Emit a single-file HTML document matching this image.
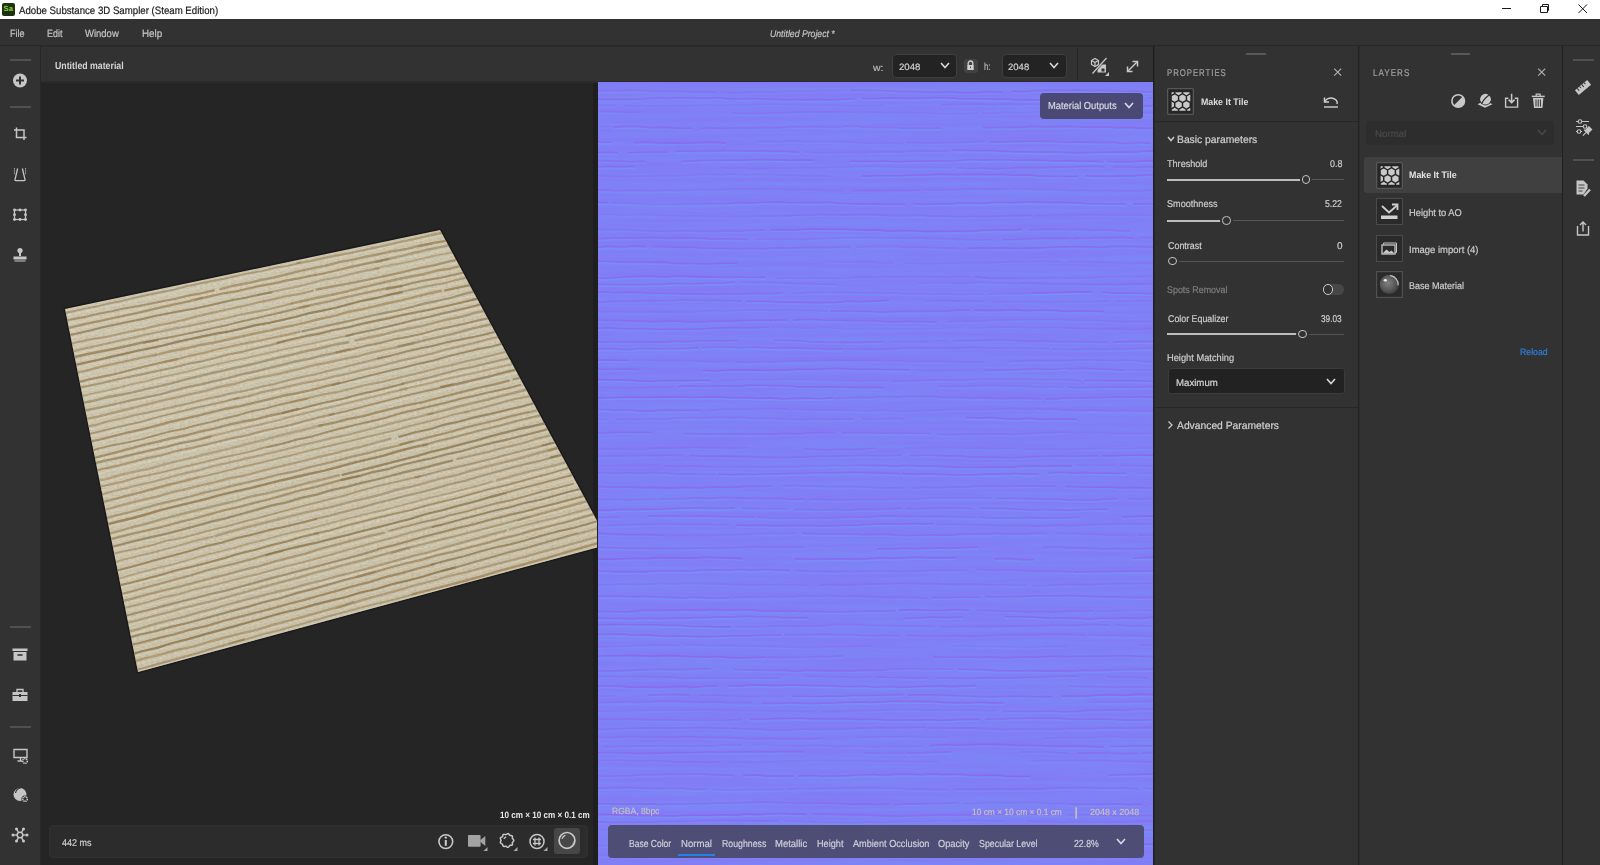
<!DOCTYPE html><html><head><meta charset="utf-8"><title>Adobe Substance 3D Sampler</title><style>
html,body{margin:0;padding:0;width:1600px;height:865px;overflow:hidden;background:#323232;font-family:"Liberation Sans",sans-serif}
.a{position:absolute}.t{position:absolute;white-space:nowrap;line-height:0;transform-origin:0 0;text-rendering:geometricPrecision}
</style></head><body>
<div class="a" style="left:0;top:0;width:1600px;height:19px;background:#fff"></div>
<div class="a" style="left:2px;top:2.5px;width:13px;height:13px;border-radius:2px;background:#1b3210"></div>
<div class="t" style="left:3.6px;top:9px;font-size:7.6px;font-weight:700;color:#8fd13f">Sa</div>
<svg class="a" style="left:1490px;top:0" width="110" height="19" fill="none" stroke="#1a1a1a" stroke-width="1"><path d="M12 8.5h9"/><path d="M50.5 6.5h7v6h-7z"/><path d="M52.5 6.5v-2h6v6h-1"/><path d="M88.5 4.5l8.5 8.5M97 4.5l-8.5 8.5"/></svg>
<div class="a" style="left:0;top:19px;width:1600px;height:27px;background:#323232"></div>
<div class="a" style="left:0;top:45px;width:1600px;height:1px;background:#282828"></div>
<div class="a" style="left:0;top:46px;width:40px;height:819px;background:#323232"></div>
<div class="a" style="left:40px;top:46px;width:1px;height:819px;background:#282828"></div>
<div style="position:absolute;left:10px;top:59px;width:21px;height:2px;background:#505050"></div>
<div style="position:absolute;left:10px;top:106px;width:21px;height:2px;background:#505050"></div>
<div style="position:absolute;left:10px;top:626px;width:21px;height:2px;background:#505050"></div>
<div style="position:absolute;left:10px;top:726px;width:21px;height:2px;background:#505050"></div>
<svg width="40" height="865" style="position:absolute;left:0;top:0" fill="none" stroke="#c6c6c6" stroke-width="1.5"><circle cx="20" cy="80.5" r="7" fill="#c6c6c6" stroke="none"/><path d="M20 76.5v8M16 80.5h8" stroke="#323232" stroke-width="2"/><path d="M16.5 127.5v10h10M14 130h10v10"/><path d="M17.6 168.5l-2.6 11.2q-0.2 0.9 0.8 0.9h8.4q1 0 0.8-0.9l-2.6-11.2" stroke-width="1.3"/><path d="M14.4 168.2v6.5M25.6 168.2v6.5" stroke-width="1" stroke-dasharray="1.2 0.9"/><rect x="14.5" y="210" width="11" height="9.5" stroke-width="1.2"/><circle cx="14.5" cy="210" r="1.4" fill="#c6c6c6" stroke="none"/><circle cx="20" cy="210" r="1.4" fill="#c6c6c6" stroke="none"/><circle cx="25.5" cy="210" r="1.4" fill="#c6c6c6" stroke="none"/><circle cx="14.5" cy="214.75" r="1.4" fill="#c6c6c6" stroke="none"/><circle cx="25.5" cy="214.75" r="1.4" fill="#c6c6c6" stroke="none"/><circle cx="14.5" cy="219.5" r="1.4" fill="#c6c6c6" stroke="none"/><circle cx="20" cy="219.5" r="1.4" fill="#c6c6c6" stroke="none"/><circle cx="25.5" cy="219.5" r="1.4" fill="#c6c6c6" stroke="none"/><circle cx="20" cy="250.5" r="2.6" fill="#c6c6c6" stroke="none"/><path d="M20 252v4" stroke-width="2"/><path d="M13.5 256.5h13v3h-13z" fill="#c6c6c6" stroke="none"/><path d="M14.5 261h11" stroke-width="1"/><path d="M12.5 648.5h15v2.5h-15zM13.5 652h13v8.5h-13z" fill="#c6c6c6" stroke="none"/><path d="M17.5 655h5" stroke="#323232" stroke-width="1.6"/><path d="M17 692v-2.5h6v2.5" stroke-width="1.3"/><path d="M12.5 692h15v9h-15z" fill="#c6c6c6" stroke="none"/><path d="M12.5 695.5h15" stroke="#323232" stroke-width="1"/><rect x="19" y="694" width="2" height="3" fill="#323232" stroke="none"/><path d="M14 749.5h13v8h-13z" stroke-width="1.4"/><path d="M20.5 757.5v3M17.5 761h5" stroke-width="1.3"/><circle cx="25" cy="761" r="2.8" fill="#323232" stroke="none"/><circle cx="25" cy="761" r="2.3" stroke-width="1.6" stroke-dasharray="1.2 0.6"/><circle cx="20" cy="794.5" r="6.5" fill="#c6c6c6" stroke="none"/><path d="M15.5 793c0.5-2.5 2.5-4.5 5-5" stroke="#323232" stroke-width="1.2"/><circle cx="25" cy="799" r="3.6" fill="#323232" stroke="none"/><circle cx="25" cy="799" r="2.3" stroke-width="1.6" stroke-dasharray="1.2 0.6"/><circle cx="20" cy="835" r="2.8" stroke-width="1.5"/><path d="M22.8 835.0L27.0 835.0" stroke-width="1.3"/><circle cx="27.0" cy="835.0" r="1.5" fill="#c6c6c6" stroke="none"/><path d="M21.4 837.4L23.5 841.1" stroke-width="1.3"/><circle cx="23.5" cy="841.1" r="1.5" fill="#c6c6c6" stroke="none"/><path d="M18.6 837.4L16.5 841.1" stroke-width="1.3"/><circle cx="16.5" cy="841.1" r="1.5" fill="#c6c6c6" stroke="none"/><path d="M17.2 835.0L13.0 835.0" stroke-width="1.3"/><circle cx="13.0" cy="835.0" r="1.5" fill="#c6c6c6" stroke="none"/><path d="M18.6 832.6L16.5 828.9" stroke-width="1.3"/><circle cx="16.5" cy="828.9" r="1.5" fill="#c6c6c6" stroke="none"/><path d="M21.4 832.6L23.5 828.9" stroke-width="1.3"/><circle cx="23.5" cy="828.9" r="1.5" fill="#c6c6c6" stroke="none"/></svg>
<div class="a" style="left:41px;top:46px;width:1112px;height:36px;background:#323232"></div><div class="a" style="left:46px;top:48px;width:1px;height:33px;background:#2d2d2d"></div><div class="a" style="left:41px;top:46px;width:1112px;height:1px;background:#2c2c2c"></div>
<div class="a" style="left:41px;top:81px;width:1112px;height:2px;background:#2a2a2a"></div>
<div class="a" style="left:892px;top:53.5px;width:65px;height:24.5px;box-sizing:border-box;border:1px solid #3f3f3f;border-radius:4px;background:#232323"></div>
<div class="a" style="left:1001.5px;top:53.5px;width:65.0px;height:24.5px;box-sizing:border-box;border:1px solid #3f3f3f;border-radius:4px;background:#232323"></div>
<svg width="12" height="8.5" style="position:absolute;left:938.5px;top:61.25px" fill="none" stroke="#d8d8d8" stroke-width="1.6"><path d="M2 2l4.0 4.5l4.0 -4.5"/></svg>
<svg width="12" height="8.5" style="position:absolute;left:1047.5px;top:61.25px" fill="none" stroke="#d8d8d8" stroke-width="1.6"><path d="M2 2l4.0 4.5l4.0 -4.5"/></svg>
<div class="a" style="left:964px;top:58.5px;width:13.5px;height:14px;border-radius:3px;background:#424242"></div>
<svg class="a" style="left:963px;top:58px" width="15" height="15"><path d="M5.2 7V5.3a2.3 2.3 0 0 1 4.6 0V7" fill="none" stroke="#d0d0d0" stroke-width="1.3"/><rect x="4.3" y="7" width="6.4" height="5" fill="#d0d0d0"/><rect x="7" y="8.6" width="1" height="1.6" fill="#444"/></svg>
<div class="a" style="left:1077px;top:48px;width:1px;height:32px;background:#262626"></div>
<svg class="a" style="left:1088px;top:55px" width="24" height="23" fill="none" stroke="#c8c8c8" stroke-width="1.2"><path d="M3.5 5.5l3.5-2 3.5 2v4l-3.5 2-3.5-2z"/><path d="M3.5 5.5l3.5 2 3.5-2M7 7.5v4"/><path d="M9.5 9.5h8.5v8h-8.5z" fill="#c8c8c8" stroke="none"/><rect x="13.5" y="13.5" width="3" height="3" fill="#323232" stroke="none"/><path d="M4.5 18.5l14-15.5" stroke="#323232" stroke-width="2.6"/><path d="M4.5 18.5l14-15.5" stroke-width="1.2"/><path d="M21 21v-4l-4 4z" fill="#c8c8c8" stroke="none"/></svg>
<svg class="a" style="left:1125px;top:59px" width="16" height="15" fill="none" stroke="#c8c8c8" stroke-width="1.5"><path d="M3 12l9-9"/><path d="M7.5 2.5h5v5M2.5 7.5v5h5"/></svg>
<div class="a" style="left:41px;top:83px;width:557px;height:782px;background:#252525"></div>
<div class="a" style="left:593px;top:83px;width:5px;height:782px;background:#1f1f1f"></div>
<svg width="557" height="783" viewBox="41 82 557 783" style="position:absolute;left:41px;top:82px">
<defs><clipPath id="vc"><rect x="41" y="82" width="556" height="783"/></clipPath><clipPath id="qc"><polygon points="65,309 440,230 609.5,544 138,672"/></clipPath><filter id="pb" x="41" y="82" width="557" height="783" filterUnits="userSpaceOnUse"><feGaussianBlur stdDeviation="0.6"/></filter><filter id="pn" x="41" y="82" width="557" height="783" filterUnits="userSpaceOnUse" color-interpolation-filters="sRGB"><feTurbulence type="fractalNoise" baseFrequency="0.35 0.6" numOctaves="2" seed="11"/><feColorMatrix values="0 0 0 0 0.45  0 0 0 0 0.4  0 0 0 0 0.3  1.4 0 0 0 -0.55"/></filter><linearGradient id="pg" x1="0" y1="0" x2="1" y2="1"><stop offset="0" stop-color="#d2cbb5"/><stop offset="0.5" stop-color="#cdc6ae"/><stop offset="1" stop-color="#cac2a9"/></linearGradient></defs>
<g clip-path="url(#vc)">
<polygon points="65,309 440,230 609.5,544 138,672" fill="#191919" stroke="#1a1a1a" stroke-width="3" stroke-linejoin="round"/><polygon points="65,309 440,230 609.5,544 138,672" fill="url(#pg)"/>
<g clip-path="url(#qc)"><g filter="url(#pb)" fill="none" stroke-linecap="round" stroke-linejoin="round">
<path d="M46.9 316.3L59.6 314.2L72.3 311.5L84.9 308.6L97.6 306.3L110.2 303.2L122.9 300.7L135.4 297.6L148.1 294.8L160.7 292.3L173.4 289.8L185.9 286.4L198.5 283.7L211.2 281.3L224.0 278.8L236.5 275.9L249.2 273.1L262.0 271.1L274.4 267.8L287.4 265.9L299.9 262.9" stroke="#8f774f" stroke-opacity="0.55" stroke-width="1.9"/>
<path d="M297.5 263.2L311.1 260.9L324.4 257.9L337.8 255.1L351.4 252.8L364.8 249.8L378.2 247.0L391.5 243.9L404.8 241.0L418.2 238.2L431.4 235.0L444.9 232.4L458.0 229.0L471.3 226.0" stroke="#977d52" stroke-opacity="0.56" stroke-width="2.3"/>
<path d="M47.5 319.5L461.9 231.6" stroke="#e0dac6" stroke-opacity="0.38" stroke-width="2"/>
<path d="M48.5 325.0L61.1 321.5L73.8 319.0L86.6 316.6L99.2 313.5L112.0 311.2L124.7 308.2L137.6 306.2L150.3 303.7L163.1 301.0L175.9 298.7L188.5 295.6L201.3 293.2L214.0 290.4" stroke="#977d52" stroke-opacity="0.70" stroke-width="2.1"/>
<path d="M220.4 289.1L233.4 285.7L246.7 283.3L259.8 280.3L273.1 277.6L286.1 274.5L299.1 271.1L312.3 268.3L325.6 265.6L338.5 262.3L351.9 259.9L365.0 256.9L378.2 254.2L391.4 251.4L405.0 249.3L418.0 246.2L431.3 243.6" stroke="#977d52" stroke-opacity="0.64" stroke-width="2.4"/>
<path d="M419.9 245.9L433.9 242.9L448.1 240.3L462.2 237.4L476.2 234.6" stroke="#a3885c" stroke-opacity="0.85" stroke-width="2.3"/>
<path d="M49.1 328.1L466.0 239.0" stroke="#e0dac6" stroke-opacity="0.29" stroke-width="2"/>
<path d="M49.8 331.8L62.5 329.3L75.2 326.3L87.9 323.3L100.6 320.8L113.3 318.0L126.0 315.3L138.8 312.7L151.4 309.6L164.1 306.6L176.8 303.8L189.5 301.1L202.0 297.8" stroke="#a3885c" stroke-opacity="0.81" stroke-width="2.3"/>
<path d="M196.0 299.5L208.8 296.6L221.5 293.7L234.6 291.7L247.3 288.7L260.1 285.8L273.1 283.6L285.8 280.6L298.8 278.3L311.7 275.7L324.7 273.3L337.4 270.3L350.0 267.1L362.9 264.4L375.7 261.7L388.6 259.0" stroke="#a3885c" stroke-opacity="0.83" stroke-width="2.2"/>
<path d="M376.4 262.1L389.0 258.8L401.8 255.9L414.4 252.7L427.2 249.8L440.1 247.1L452.9 244.2L466.0 241.9L478.5 238.6" stroke="#8f774f" stroke-opacity="0.51" stroke-width="2.5"/>
<path d="M466.6 241.1L470.8 240.6L474.9 240.1L478.8 239.1" stroke="#8f774f" stroke-opacity="0.74" stroke-width="2.0"/>
<path d="M50.3 334.4L469.0 244.4" stroke="#e0dac6" stroke-opacity="0.34" stroke-width="2"/>
<path d="M51.2 339.3L64.1 336.3L77.0 333.5L90.0 330.6L102.8 327.2L115.7 324.4L128.7 321.7L141.8 319.3L154.6 316.0L167.7 313.6L180.7 311.1L193.8 308.7L206.7 305.9L219.7 303.0L232.6 300.1L245.7 297.7L258.6 294.7L271.7 292.2" stroke="#8f774f" stroke-opacity="0.75" stroke-width="2.0"/>
<path d="M258.1 294.9L271.5 291.9L285.0 289.0L298.5 286.4L311.8 283.1L324.9 279.5L338.6 277.2L351.8 273.7L365.2 270.9L378.7 268.1" stroke="#9c8158" stroke-opacity="0.54" stroke-width="2.1"/>
<path d="M374.4 269.0L387.7 265.7L401.4 263.2L415.0 260.4L428.4 257.2L442.0 254.4L455.8 252.0L469.3 249.1L482.7 245.9" stroke="#a3885c" stroke-opacity="0.54" stroke-width="1.9"/>
<path d="M51.7 342.1L472.7 250.9" stroke="#e0dac6" stroke-opacity="0.29" stroke-width="2"/>
<path d="M52.7 347.4L65.7 344.9L78.7 341.8L91.7 339.1L105.0 337.2L117.9 334.2L130.9 331.3L144.1 328.9L157.0 325.6L170.0 323.1L183.0 320.1L195.8 316.6L208.8 313.6L221.8 310.7L234.7 307.7L247.8 305.0L260.7 301.8L273.7 299.1L286.6 296.0L299.9 293.9L312.8 290.7" stroke="#a3885c" stroke-opacity="0.66" stroke-width="2.2"/>
<path d="M316.4 289.7L329.6 287.0L342.8 284.6L356.1 282.2L369.2 279.4L382.3 276.5L395.5 273.9L408.4 270.6L421.5 267.7L434.8 265.2L447.6 261.8L460.6 258.8L473.9 256.3L486.9 253.2" stroke="#977d52" stroke-opacity="0.67" stroke-width="2.3"/>
<path d="M53.3 350.9L476.8 258.4" stroke="#e0dac6" stroke-opacity="0.32" stroke-width="2"/>
<path d="M54.2 355.8L67.4 352.8L80.5 349.4L93.7 346.5L106.9 343.4L120.0 340.4L133.2 337.6L146.4 334.5L159.6 331.7L172.8 328.9L186.2 326.5L199.4 323.6L212.6 321.0L225.9 318.3L239.0 315.0L252.3 312.4L265.6 309.9L278.8 306.9L291.8 303.4" stroke="#977d52" stroke-opacity="0.54" stroke-width="2.1"/>
<path d="M291.9 303.4L305.1 300.5L318.3 297.4L331.7 294.8L344.9 291.9L358.0 288.6L371.1 285.4L384.3 282.3L397.4 279.2L410.8 276.6L424.2 273.9L437.2 270.6L450.8 268.4L463.8 265.1L477.4 262.7L490.5 259.6" stroke="#a3885c" stroke-opacity="0.75" stroke-width="2.5"/>
<path d="M54.7 358.4L480.4 264.8" stroke="#e0dac6" stroke-opacity="0.30" stroke-width="2"/>
<path d="M55.3 361.7L69.9 358.3L84.3 354.7L99.0 351.8L113.6 349.0L128.2 345.8L142.7 342.4L157.5 340.1" stroke="#977d52" stroke-opacity="0.78" stroke-width="2.5"/>
<path d="M143.8 342.9L157.5 339.4L171.5 337.0L185.3 334.1L199.2 331.2L213.0 328.1L226.8 325.2L240.5 321.7L254.3 318.6L268.0 315.4L281.8 312.2L295.4 308.9L309.2 305.7" stroke="#977d52" stroke-opacity="0.78" stroke-width="1.9"/>
<path d="M299.9 307.6L314.3 304.4L328.9 301.4L343.2 297.9L357.6 294.7L372.1 291.4L386.5 288.3L401.4 286.0" stroke="#9c8158" stroke-opacity="0.65" stroke-width="2.4"/>
<path d="M386.8 289.0L400.2 286.2L413.4 282.8L426.9 280.0L440.6 277.7L453.9 274.7L467.3 271.7L480.6 268.6L494.1 265.8" stroke="#977d52" stroke-opacity="0.74" stroke-width="2.0"/>
<path d="M56.0 365.2L483.7 270.6" stroke="#e0dac6" stroke-opacity="0.26" stroke-width="2"/>
<path d="M56.8 369.4L70.0 366.1L83.3 363.1L96.6 360.2L109.8 357.1L123.1 354.1L136.3 351.0L149.7 348.3L163.0 345.5L176.1 342.1L189.4 339.2L202.7 336.4L216.0 333.6L229.6 331.4L242.8 328.4L256.0 325.1L269.5 322.9L282.8 319.9L296.1 316.8L309.1 313.2L322.5 310.6L335.8 307.7L348.9 304.2L362.0 300.8L375.4 298.2L388.5 295.0L401.8 292.1" stroke="#8f774f" stroke-opacity="0.84" stroke-width="2.2"/>
<path d="M387.2 295.2L400.8 291.9L414.7 289.1L428.4 286.0L442.4 283.6L455.9 280.1L469.6 277.0L483.7 274.7L497.2 271.3" stroke="#977d52" stroke-opacity="0.56" stroke-width="2.0"/>
<path d="M57.3 372.2L487.0 276.6" stroke="#e0dac6" stroke-opacity="0.38" stroke-width="2"/>
<path d="M58.2 377.1L72.3 373.6L86.5 370.6L100.6 366.9L114.7 363.6L129.0 360.6L143.1 357.3L157.4 354.5" stroke="#a3885c" stroke-opacity="0.69" stroke-width="2.3"/>
<path d="M159.6 353.9L173.0 350.8L186.5 348.2L199.9 345.0L213.5 342.7L226.9 339.8L240.3 336.7L253.7 333.8L267.3 331.1L280.6 328.0L294.2 325.3L307.5 322.1L320.8 318.8L334.3 315.9L347.3 312.1L360.9 309.5L374.3 306.4L387.6 303.3L401.1 300.4L414.4 297.1L427.6 293.7L441.0 290.7" stroke="#a3885c" stroke-opacity="0.72" stroke-width="2.5"/>
<path d="M445.2 290.3L459.2 287.3L473.2 284.4L487.2 281.2L501.0 277.9" stroke="#977d52" stroke-opacity="0.78" stroke-width="2.3"/>
<path d="M58.8 380.2L490.8 283.4" stroke="#e0dac6" stroke-opacity="0.27" stroke-width="2"/>
<path d="M59.9 386.0L74.7 383.1L89.3 379.4L104.1 376.4L118.8 373.2L133.4 369.3L148.0 365.7L162.7 362.3L177.4 359.1" stroke="#9c8158" stroke-opacity="0.77" stroke-width="2.2"/>
<path d="M163.4 362.0L177.1 359.2L190.6 355.6L204.3 352.7L217.8 349.2L231.4 346.2L245.1 343.4L258.9 340.7L272.6 337.8L286.3 334.9L299.8 331.7" stroke="#a3885c" stroke-opacity="0.68" stroke-width="2.1"/>
<path d="M302.3 331.4L315.8 328.3L329.3 325.1L343.0 322.4L356.5 319.3L370.0 316.0L383.6 313.2L397.3 310.5L410.8 307.3L424.0 303.6L437.7 300.8L451.2 297.7L464.3 293.9L477.8 290.8L491.6 288.2L504.9 284.8" stroke="#8f774f" stroke-opacity="0.63" stroke-width="2.2"/>
<path d="M60.4 388.8L494.9 290.7" stroke="#e0dac6" stroke-opacity="0.43" stroke-width="2"/>
<path d="M60.9 391.5L74.9 388.4L89.0 385.8L103.1 382.8L117.1 379.6L131.1 376.5L145.2 373.6L159.2 370.5L173.4 367.8L187.2 364.0L201.3 361.4L215.3 358.1L229.1 354.2L243.3 351.6L257.2 348.1L271.2 344.9L285.0 341.1" stroke="#977d52" stroke-opacity="0.63" stroke-width="2.1"/>
<path d="M277.7 342.8L291.6 339.4L305.5 336.2L319.7 333.6L333.4 330.0L347.6 327.5L361.4 323.9L375.4 320.9L389.5 318.1L403.4 314.8L417.5 312.0L431.7 309.3L445.6 306.2L459.6 303.0L473.4 299.6L487.5 296.6" stroke="#977d52" stroke-opacity="0.83" stroke-width="2.2"/>
<path d="M472.6 299.7L484.8 297.1L496.7 294.2L508.5 291.1" stroke="#9c8158" stroke-opacity="0.52" stroke-width="2.4"/>
<path d="M61.6 395.4L498.1 296.4" stroke="#e0dac6" stroke-opacity="0.35" stroke-width="2"/>
<path d="M62.6 400.7L76.4 397.4L90.3 394.1L104.1 391.1L118.0 388.0L131.7 384.2L145.6 381.4L159.3 377.6L173.2 374.6L187.0 371.6L200.8 368.1L214.6 364.9L228.4 361.6L242.3 358.9L256.1 355.6L270.0 352.6L283.8 349.4L297.7 346.3L311.7 343.6L325.5 340.4L339.4 337.4L353.4 334.6" stroke="#a3885c" stroke-opacity="0.57" stroke-width="1.8"/>
<path d="M346.5 335.7L360.3 332.6L374.3 329.8L388.0 326.4L401.8 323.2L415.5 319.7L429.4 316.7L443.1 313.2L456.9 310.2L470.7 307.0L484.2 303.2L498.3 300.6L512.0 297.1" stroke="#8f774f" stroke-opacity="0.73" stroke-width="2.1"/>
<path d="M63.1 403.2L501.8 302.9" stroke="#e0dac6" stroke-opacity="0.47" stroke-width="2"/>
<path d="M63.9 407.5L77.4 404.1L91.0 401.3L104.4 397.8L118.1 395.2L131.8 392.6L145.3 389.4L158.8 386.3L172.4 383.2L185.8 379.4L199.2 376.1L212.7 372.8L226.3 369.9L239.9 366.8L253.4 363.8L266.9 360.4L280.4 357.2L294.0 354.2L307.4 350.9L321.0 348.0L334.5 344.6L348.3 342.2" stroke="#8f774f" stroke-opacity="0.58" stroke-width="2.4"/>
<path d="M355.4 340.5L368.8 337.5L382.3 334.8L395.5 331.3L408.9 328.5L422.6 326.0L435.6 322.3L449.0 319.2L462.5 316.5L475.5 312.7L489.0 309.9L502.5 307.0L515.5 303.3" stroke="#9c8158" stroke-opacity="0.61" stroke-width="2.4"/>
<path d="M64.4 410.3L505.2 309.0" stroke="#e0dac6" stroke-opacity="0.31" stroke-width="2"/>
<path d="M65.2 414.7L78.8 411.5L92.4 409.0L106.1 406.2L119.6 403.0L133.2 399.8L146.8 397.1L160.4 394.3L173.8 390.6L187.3 387.2L201.0 384.3L214.5 381.1L228.1 378.0L241.4 374.3L255.1 371.5L268.6 368.2L282.1 364.8L295.5 361.4L309.3 358.9L322.6 355.3L336.4 352.6L349.8 349.1" stroke="#8f774f" stroke-opacity="0.58" stroke-width="2.3"/>
<path d="M336.4 352.4L350.6 349.5L364.6 346.1L378.9 343.3L392.8 339.6L407.1 336.9L421.4 334.0L435.2 330.1L449.3 326.9L463.6 324.0L477.5 320.5L491.7 317.4L505.5 313.6L519.6 310.4" stroke="#977d52" stroke-opacity="0.75" stroke-width="2.0"/>
<path d="M65.9 418.3L509.0 315.9" stroke="#e0dac6" stroke-opacity="0.48" stroke-width="2"/>
<path d="M66.9 423.6L80.7 419.9L94.7 417.3L108.5 413.8L122.4 410.5L136.2 407.2L150.0 403.7L163.8 400.2L177.7 397.1L191.6 393.8L205.5 390.9L219.2 386.9L233.2 384.3L246.9 380.4L260.8 377.4L274.8 374.6L288.7 371.5L302.5 368.1L316.4 364.7L330.4 362.0L344.3 358.8L358.4 356.2L372.1 352.4L386.0 349.4L400.1 346.6L413.6 342.6" stroke="#a3885c" stroke-opacity="0.64" stroke-width="2.4"/>
<path d="M398.5 346.2L412.5 343.6L426.0 339.8L439.9 336.9L453.7 333.6L467.2 329.9L480.8 326.5L494.8 323.7L508.4 320.2" stroke="#8f774f" stroke-opacity="0.59" stroke-width="2.3"/>
<path d="M67.4 426.1L512.7 322.5" stroke="#e0dac6" stroke-opacity="0.32" stroke-width="2"/>
<path d="M68.4 431.7L81.9 427.6L95.7 424.9L109.2 421.0L122.9 418.3L136.5 414.8L150.3 412.0L164.0 408.9L177.7 405.9L191.4 402.8L204.9 399.2L218.7 396.4L232.3 393.0L246.2 390.6L259.8 387.0L273.6 384.2L287.1 380.5L300.7 377.3L314.6 374.5L328.1 370.9L341.8 367.8L355.3 364.3L368.9 360.9L382.5 357.5" stroke="#977d52" stroke-opacity="0.56" stroke-width="2.1"/>
<path d="M377.9 358.4L391.5 355.4L404.9 351.9L418.5 348.7L432.3 346.0L445.7 342.6L459.4 339.7L473.3 337.1L486.9 334.0L500.2 330.4L513.8 327.3L527.6 324.5" stroke="#977d52" stroke-opacity="0.81" stroke-width="2.0"/>
<path d="M68.9 434.4L516.7 329.6" stroke="#e0dac6" stroke-opacity="0.32" stroke-width="2"/>
<path d="M69.7 438.5L83.8 435.3L97.9 431.8L112.0 428.4L126.1 425.1L140.3 422.1L154.3 418.0L168.3 414.5L182.4 411.2L196.5 407.7L210.6 404.6L224.8 401.3L238.8 397.6" stroke="#977d52" stroke-opacity="0.66" stroke-width="1.8"/>
<path d="M234.2 399.3L248.4 396.1L262.3 392.1L276.5 389.2L290.6 385.9L304.8 382.8L319.2 380.2L333.3 376.7L347.5 373.8L361.5 370.1L375.8 367.2L389.8 363.5L403.8 359.9L418.0 356.9L432.1 353.6L445.9 349.5L460.1 346.4L474.1 343.0L488.0 339.2L502.2 336.0L516.2 332.5L530.4 329.3" stroke="#9c8158" stroke-opacity="0.59" stroke-width="2.2"/>
<path d="M70.2 441.2L519.9 335.4" stroke="#e0dac6" stroke-opacity="0.45" stroke-width="2"/>
<path d="M71.1 446.2L85.2 442.7L99.4 439.7L113.4 436.2L127.5 432.6L141.6 429.5L155.7 425.9L169.7 422.0L183.8 418.9L198.0 415.6L212.0 412.1L226.1 408.7L240.4 406.1L254.5 402.7L268.6 399.3L282.6 395.8L297.0 393.2L311.2 390.1L325.2 386.4L339.2 382.8" stroke="#9c8158" stroke-opacity="0.77" stroke-width="2.4"/>
<path d="M332.7 385.2L347.0 381.4L361.3 377.7L375.7 374.2L390.1 370.6L404.6 367.4L418.9 363.7L433.5 360.5L447.6 356.4L462.0 352.9L476.4 349.5L491.1 346.6L505.4 342.9L519.9 339.7L534.6 336.7" stroke="#8f774f" stroke-opacity="0.76" stroke-width="1.9"/>
<path d="M71.6 449.1L523.7 342.1" stroke="#e0dac6" stroke-opacity="0.38" stroke-width="2"/>
<path d="M72.7 455.0L86.6 452.0L100.3 448.2L114.1 444.9L128.1 442.4L141.9 439.1L155.6 435.4L169.3 431.6L183.2 429.0L196.9 425.1L210.7 422.1L224.4 418.4L238.2 415.2L251.8 411.2L265.8 408.4L279.4 404.7L293.3 401.6L307.2 398.7" stroke="#9c8158" stroke-opacity="0.79" stroke-width="1.9"/>
<path d="M291.5 401.7L306.1 398.5L320.6 395.0L335.4 392.4L350.0 389.0L364.4 385.2L379.2 382.4L393.7 379.0L408.2 375.5L422.8 372.1L437.2 368.3L451.7 364.9L466.2 361.3L480.8 358.1L495.2 354.4L509.6 350.7L523.9 346.9L538.4 343.3" stroke="#a3885c" stroke-opacity="0.64" stroke-width="2.1"/>
<path d="M73.2 457.6L527.8 349.4" stroke="#e0dac6" stroke-opacity="0.25" stroke-width="2"/>
<path d="M74.2 462.7L88.2 459.4L102.2 455.9L116.1 452.4L130.0 448.6L143.9 444.8L158.0 441.6L171.9 438.2L186.0 435.3L200.0 431.7L214.0 428.6L227.9 424.9L242.0 421.8L256.2 419.2L270.1 415.5L284.3 412.7L298.1 408.9" stroke="#9c8158" stroke-opacity="0.76" stroke-width="2.4"/>
<path d="M282.3 413.0L297.5 409.6L312.6 405.5L327.8 401.9L343.2 398.8L358.2 394.6L373.5 391.3L388.6 387.5L403.7 383.6" stroke="#8f774f" stroke-opacity="0.75" stroke-width="2.0"/>
<path d="M402.1 383.7L416.2 380.4L430.3 377.2L444.1 373.4L458.0 369.8L472.3 367.0L486.1 363.4L500.2 360.2L514.3 357.0L528.2 353.5L542.4 350.3" stroke="#8f774f" stroke-opacity="0.57" stroke-width="2.1"/>
<path d="M74.7 465.3L531.4 356.0" stroke="#e0dac6" stroke-opacity="0.47" stroke-width="2"/>
<path d="M75.2 467.9L90.2 464.4L105.2 460.6L120.3 457.5L135.3 453.8L150.3 450.4L165.4 447.2L180.3 443.1L195.6 440.4L210.6 436.6" stroke="#8f774f" stroke-opacity="0.64" stroke-width="2.4"/>
<path d="M203.2 437.9L217.8 434.6L232.3 430.9L246.9 427.5L261.5 424.3L276.1 420.9L290.5 416.8L305.0 413.3L319.5 409.5L334.2 406.4L348.6 402.7L363.2 399.2L377.7 395.6L392.2 392.0L406.8 388.6" stroke="#a3885c" stroke-opacity="0.58" stroke-width="2.0"/>
<path d="M400.4 389.5L415.0 386.5L429.6 383.3L443.9 379.5L458.5 376.2L473.2 373.2L487.6 369.7L502.2 366.5L516.7 363.0L531.1 359.5L545.5 355.9" stroke="#a3885c" stroke-opacity="0.55" stroke-width="2.1"/>
<path d="M533.1 359.3L537.3 358.2L541.4 357.0L545.4 355.7" stroke="#8f774f" stroke-opacity="0.55" stroke-width="2.3"/>
<path d="M75.8 471.5L534.4 361.2" stroke="#e0dac6" stroke-opacity="0.32" stroke-width="2"/>
<path d="M76.6 475.4L90.9 472.0L105.1 468.3L119.5 465.3L133.7 461.6L147.9 457.8L162.4 455.0L176.5 451.0L190.9 448.1L205.2 444.7L219.5 441.3L233.8 437.8L248.3 435.0L262.5 431.0L276.9 428.0L291.3 424.9L305.4 420.7L319.6 417.2L334.0 413.9" stroke="#9c8158" stroke-opacity="0.68" stroke-width="2.2"/>
<path d="M330.0 414.9L345.3 411.4L360.4 407.3L375.5 403.3L390.7 399.6L405.8 395.7L421.1 392.1L436.5 388.8L451.4 384.6" stroke="#977d52" stroke-opacity="0.73" stroke-width="1.9"/>
<path d="M441.3 387.0L456.9 384.0L472.3 380.4L487.7 376.9L502.9 372.8L518.2 369.1L533.9 366.0L549.3 362.4" stroke="#8f774f" stroke-opacity="0.74" stroke-width="2.4"/>
<path d="M77.2 478.8L537.9 367.4" stroke="#e0dac6" stroke-opacity="0.48" stroke-width="2"/>
<path d="M78.3 484.7L92.8 482.1L107.2 478.7L121.4 474.7L135.8 471.3L150.3 468.5L164.4 464.3L178.8 460.9L193.2 457.5L207.4 453.7L221.8 450.4L236.1 446.9L250.4 443.3L264.7 439.6L278.9 435.8L293.3 432.2L307.6 428.8L321.8 425.0" stroke="#9c8158" stroke-opacity="0.51" stroke-width="2.5"/>
<path d="M319.4 425.7L334.2 422.6L348.6 418.8L363.5 416.1L377.8 412.1L392.4 408.6L407.0 405.2L421.9 402.4L436.3 398.5L450.8 394.8L465.3 391.1L479.8 387.5L494.5 384.3L509.0 380.6" stroke="#977d52" stroke-opacity="0.74" stroke-width="2.3"/>
<path d="M513.6 379.1L527.0 376.3L540.1 372.6L553.3 369.4" stroke="#a3885c" stroke-opacity="0.81" stroke-width="2.3"/>
<path d="M539.0 372.5L543.7 371.3L548.7 370.7L553.4 369.5" stroke="#8f774f" stroke-opacity="0.72" stroke-width="2.4"/>
<path d="M78.9 488.0L542.3 375.3" stroke="#e0dac6" stroke-opacity="0.28" stroke-width="2"/>
<path d="M79.7 492.0L94.0 488.3L108.3 484.8L122.7 481.7L136.9 477.5L151.4 474.6L165.8 471.4L180.1 467.9L194.5 464.4L208.8 460.9L223.1 457.4L237.6 454.4L252.0 451.1L266.2 447.0" stroke="#a3885c" stroke-opacity="0.68" stroke-width="1.9"/>
<path d="M267.2 446.9L282.3 443.8L297.0 439.5L312.1 436.4L326.7 432.1L341.5 428.2L356.4 424.6L371.4 421.2L386.3 417.6L400.9 413.1L415.9 409.8L430.8 406.2L445.8 402.8L460.5 398.8L475.6 395.5L490.5 391.9L505.7 388.8L520.4 384.9" stroke="#9c8158" stroke-opacity="0.83" stroke-width="2.0"/>
<path d="M527.3 383.2L537.6 381.4L547.4 379.0L557.3 376.4" stroke="#977d52" stroke-opacity="0.85" stroke-width="2.2"/>
<path d="M80.3 495.4L545.8 381.6" stroke="#e0dac6" stroke-opacity="0.34" stroke-width="2"/>
<path d="M81.0 499.4L95.8 496.4L110.3 492.0L124.9 488.4L139.5 484.7L154.3 481.5L168.8 477.4L183.4 473.6L198.2 470.4L212.6 466.2L227.4 462.9L242.0 459.4L256.8 456.2L271.5 452.7L286.2 449.2L300.8 445.5L315.5 442.0L330.1 438.4L345.0 435.4L359.6 431.7L374.3 428.1L388.7 424.0L403.4 420.5L418.1 417.0L432.6 413.2" stroke="#9c8158" stroke-opacity="0.54" stroke-width="2.1"/>
<path d="M428.6 414.3L443.2 410.6L457.7 406.8L472.4 403.1L487.1 399.7L501.6 395.9L516.2 392.2L530.8 388.5L545.4 384.9L560.5 382.0" stroke="#977d52" stroke-opacity="0.59" stroke-width="2.5"/>
<path d="M547.3 384.4L551.6 383.4L555.8 382.4L560.2 381.5" stroke="#977d52" stroke-opacity="0.60" stroke-width="2.0"/>
<path d="M81.6 502.3L549.1 387.5" stroke="#e0dac6" stroke-opacity="0.28" stroke-width="2"/>
<path d="M82.4 507.0L97.0 503.7L111.4 499.9L125.9 496.0L140.3 492.4L154.8 488.5L169.2 484.5L183.7 481.2L198.1 477.4" stroke="#a3885c" stroke-opacity="0.76" stroke-width="2.4"/>
<path d="M199.1 477.4L214.1 473.9L229.0 470.1L244.0 466.5L259.0 463.1L274.0 459.4L289.0 455.8L303.9 452.0L318.9 448.4L333.8 444.8L348.9 441.4L363.8 437.6L378.9 434.2L393.9 430.6L408.6 426.3L423.6 422.6L438.6 419.0L453.2 414.7L468.4 411.4" stroke="#a3885c" stroke-opacity="0.67" stroke-width="1.8"/>
<path d="M464.6 412.4L481.1 408.2L497.4 403.7L513.8 399.3L530.7 395.9L547.3 392.0L563.6 387.5" stroke="#9c8158" stroke-opacity="0.59" stroke-width="2.0"/>
<path d="M82.9 509.6L552.6 393.7" stroke="#e0dac6" stroke-opacity="0.28" stroke-width="2"/>
<path d="M83.9 515.0L98.5 511.3L113.1 507.7L127.7 503.7L142.2 499.8L156.9 496.6L171.4 492.4L186.1 489.2L200.6 485.4L215.4 482.2L229.9 478.2L244.7 475.5L259.2 471.5L273.8 467.8L288.5 464.4L303.2 461.0L317.7 457.1L332.4 453.8L347.0 450.1L361.7 446.6L376.1 442.5L390.6 438.7" stroke="#9c8158" stroke-opacity="0.58" stroke-width="2.3"/>
<path d="M399.1 436.7L414.2 432.5L429.8 429.2L444.8 424.6L460.4 421.3L475.5 417.1L491.0 413.7L506.4 410.0L521.9 406.4L537.0 402.3L552.7 399.0L568.2 395.5" stroke="#8f774f" stroke-opacity="0.78" stroke-width="2.1"/>
<path d="M84.5 517.9L556.5 400.8" stroke="#e0dac6" stroke-opacity="0.41" stroke-width="2"/>
<path d="M85.4 522.9L100.3 519.5L115.2 515.6L130.0 512.0L144.8 507.9L159.6 503.9L174.5 500.4L189.3 496.7L204.1 492.6L219.0 489.2L233.8 485.4L248.8 482.0L263.7 478.5L278.5 474.5L293.6 471.7L308.3 467.5L323.2 464.0L338.1 460.4L352.9 456.4L367.9 453.1L382.6 449.1L397.6 445.7L412.3 441.5" stroke="#977d52" stroke-opacity="0.62" stroke-width="2.2"/>
<path d="M400.4 444.4L416.4 440.5L432.3 436.4L448.3 432.5L464.0 427.9L480.0 424.0L496.1 420.3L511.9 415.9L528.0 412.2" stroke="#977d52" stroke-opacity="0.69" stroke-width="2.2"/>
<path d="M528.2 412.5L542.8 409.0L557.1 405.1L571.9 402.0" stroke="#a3885c" stroke-opacity="0.69" stroke-width="2.3"/>
<path d="M86.0 525.9L560.3 407.6" stroke="#e0dac6" stroke-opacity="0.28" stroke-width="2"/>
<path d="M86.7 529.7L101.5 525.9L116.2 522.0L131.1 518.5L145.8 514.5L160.5 510.2L175.2 506.3L190.1 502.9L204.9 499.3L219.5 495.2L234.4 491.7L249.3 488.4L264.1 484.7L278.9 480.9L293.8 477.5L308.6 474.0L323.6 470.8L338.4 467.0L353.0 462.9L367.9 459.4L382.8 455.8L397.3 451.5L412.1 447.7L427.0 444.4" stroke="#977d52" stroke-opacity="0.85" stroke-width="2.4"/>
<path d="M423.1 445.6L437.9 441.0L453.3 437.6L468.4 433.6L483.4 429.5L498.8 426.0L513.8 421.8L529.0 418.1L544.3 414.5L559.7 411.0L574.7 406.9" stroke="#977d52" stroke-opacity="0.65" stroke-width="2.1"/>
<path d="M87.2 532.3L563.4 413.0" stroke="#e0dac6" stroke-opacity="0.32" stroke-width="2"/>
<path d="M88.3 538.4L103.1 534.8L117.9 531.4L132.6 527.2L147.3 523.5L162.0 519.2L176.7 515.4L191.4 511.5L206.2 508.0L221.0 504.4L235.8 500.8L250.4 496.6L265.3 493.6L280.2 490.1L294.9 486.3L309.6 482.3L324.4 479.0L339.1 475.1" stroke="#977d52" stroke-opacity="0.57" stroke-width="2.4"/>
<path d="M342.5 474.8L357.4 471.2L372.2 467.5L387.0 463.7L401.7 459.9L416.5 456.1L431.1 451.9L446.0 448.3L460.7 444.3L475.5 440.7L490.0 436.4L504.8 432.7L519.6 428.8L534.7 425.7L549.6 422.1L564.3 418.3L579.1 414.5" stroke="#8f774f" stroke-opacity="0.79" stroke-width="2.4"/>
<path d="M88.8 541.2L567.6 420.6" stroke="#e0dac6" stroke-opacity="0.30" stroke-width="2"/>
<path d="M89.4 544.2L104.5 540.9L119.4 536.9L134.4 533.3L149.5 529.9L164.5 526.2L179.4 522.1L194.4 518.5L209.3 514.4L224.2 510.3L239.3 506.9L254.2 502.9L269.2 499.3L284.0 495.1L298.8 490.7L314.0 487.4L328.8 483.4L343.7 479.3L358.8 475.8" stroke="#a3885c" stroke-opacity="0.81" stroke-width="2.2"/>
<path d="M341.4 479.9L356.7 476.8L371.4 472.4L386.8 469.4L401.6 465.1L416.7 461.4L432.0 458.3L447.0 454.3L462.2 450.9L477.1 446.8L492.1 442.9L507.3 439.6L522.3 435.7L537.4 431.9L552.3 427.8L567.0 423.4L582.1 419.9" stroke="#8f774f" stroke-opacity="0.75" stroke-width="2.1"/>
<path d="M90.0 547.4L570.6 425.9" stroke="#e0dac6" stroke-opacity="0.26" stroke-width="2"/>
<path d="M90.9 552.0L105.9 548.3L121.0 544.5L136.0 540.7L151.1 537.2L166.3 533.8L181.3 529.8L196.3 525.8L211.2 521.6L226.4 518.2L241.3 514.0L256.3 509.9L271.2 505.6L286.4 502.4L301.2 497.8L316.5 494.6L331.3 490.1L346.5 486.9L361.5 482.9L376.7 479.5L391.7 475.5L406.7 471.7L422.0 468.4L436.9 464.4L452.0 460.7" stroke="#8f774f" stroke-opacity="0.72" stroke-width="2.3"/>
<path d="M457.3 459.1L473.4 455.2L489.7 451.6L505.7 447.3L521.9 443.4L537.6 438.6L553.7 434.5L569.7 430.3L585.8 426.4" stroke="#977d52" stroke-opacity="0.58" stroke-width="2.1"/>
<path d="M91.4 555.0L574.2 432.4" stroke="#e0dac6" stroke-opacity="0.32" stroke-width="2"/>
<path d="M92.3 559.6L107.1 555.4L122.0 551.7L137.1 548.7L152.1 545.1L166.9 540.7L182.1 537.8L197.0 533.9L211.9 529.9L226.9 526.3L241.7 522.2L256.6 518.3L271.5 514.4L286.4 510.4L301.2 506.3L316.2 502.7L331.1 498.8L346.1 495.1L360.8 490.7L375.6 486.7L390.7 483.2L405.7 479.7L420.8 476.2" stroke="#a3885c" stroke-opacity="0.71" stroke-width="1.8"/>
<path d="M415.2 477.5L430.3 473.7L445.2 469.7L460.4 466.2L475.6 462.8L490.7 459.1L505.6 455.0L520.6 451.2L535.7 447.5L550.5 443.3" stroke="#8f774f" stroke-opacity="0.57" stroke-width="1.9"/>
<path d="M542.6 445.5L558.3 441.5L573.9 437.1L589.5 432.9" stroke="#977d52" stroke-opacity="0.85" stroke-width="2.1"/>
<path d="M92.9 562.8L577.9 439.1" stroke="#e0dac6" stroke-opacity="0.37" stroke-width="2"/>
<path d="M93.8 567.6L108.7 564.0L123.5 559.7L138.4 555.9L153.4 552.5L168.3 548.3L183.1 544.3L197.9 540.0L212.9 536.7" stroke="#a3885c" stroke-opacity="0.60" stroke-width="1.9"/>
<path d="M215.6 536.0L230.5 531.5L245.4 527.5L260.5 523.8L275.5 520.0L290.6 516.1L305.6 512.4L320.9 509.1L336.1 505.7L351.0 501.6L366.3 498.3L381.3 494.5L396.1 490.0L411.3 486.6L426.3 482.6L441.2 478.4L456.5 475.1L471.2 470.6L486.3 466.8L501.3 462.9L516.4 459.2L531.3 455.0L546.2 450.9L561.2 447.1" stroke="#9c8158" stroke-opacity="0.56" stroke-width="2.5"/>
<path d="M548.3 450.8L562.9 446.3L578.1 442.9L592.9 438.7" stroke="#a3885c" stroke-opacity="0.82" stroke-width="2.0"/>
<path d="M577.0 443.3L582.5 442.1L587.8 440.6L593.0 438.9" stroke="#977d52" stroke-opacity="0.71" stroke-width="2.3"/>
<path d="M94.3 570.3L581.5 445.4" stroke="#e0dac6" stroke-opacity="0.34" stroke-width="2"/>
<path d="M95.3 575.9L111.1 572.1L126.9 568.0L142.6 563.7L158.3 559.2L174.1 555.3L189.8 551.0L205.4 546.3L221.3 542.8L236.9 538.1L252.8 534.5L268.5 530.3L284.4 526.7L300.2 522.9L316.1 519.1" stroke="#977d52" stroke-opacity="0.82" stroke-width="2.1"/>
<path d="M314.9 518.9L330.2 515.5L345.2 511.5L360.4 507.8L375.4 503.6L390.6 499.8L405.6 495.8L420.9 492.3L435.9 488.2L450.8 483.9L466.1 480.4L480.9 475.9L496.0 472.0L511.0 467.8L526.1 464.0L541.4 460.5L556.3 456.2" stroke="#8f774f" stroke-opacity="0.56" stroke-width="2.1"/>
<path d="M550.6 457.5L566.2 453.9L581.7 450.1L597.3 446.4" stroke="#8f774f" stroke-opacity="0.82" stroke-width="2.2"/>
<path d="M582.7 450.2L587.4 448.5L592.2 447.2L597.0 446.0" stroke="#a3885c" stroke-opacity="0.58" stroke-width="2.1"/>
<path d="M95.8 578.5L585.4 452.4" stroke="#e0dac6" stroke-opacity="0.26" stroke-width="2"/>
<path d="M96.8 583.8L112.1 580.5L127.3 576.1L142.4 571.9L157.6 567.8L172.9 564.4L188.0 560.0L203.1 555.7L218.4 551.8L233.7 548.2L248.7 543.6L264.0 540.0L279.1 535.7L294.3 531.9L309.8 528.6L325.0 524.7L340.1 520.5L355.4 516.7L370.6 512.9L386.1 509.5L401.3 505.5L416.4 501.4L431.6 497.4L446.9 493.8L462.2 489.8L477.4 485.8L492.4 481.6" stroke="#a3885c" stroke-opacity="0.57" stroke-width="1.8"/>
<path d="M497.0 480.3L511.8 476.2L526.6 472.1L541.6 468.5L556.5 464.8L571.1 460.3L586.1 456.7L601.2 453.2" stroke="#9c8158" stroke-opacity="0.55" stroke-width="2.3"/>
<path d="M97.3 586.7L589.3 459.4" stroke="#e0dac6" stroke-opacity="0.46" stroke-width="2"/>
<path d="M98.1 591.0L113.8 586.5L129.6 583.0L145.3 578.9L161.1 574.8L176.7 570.3L192.6 566.6L208.3 562.5L224.0 558.3L239.5 553.6L255.3 549.7L270.9 545.2L286.7 541.4L302.3 536.7L318.2 533.3" stroke="#977d52" stroke-opacity="0.83" stroke-width="2.1"/>
<path d="M314.3 533.6L330.4 530.3L346.0 525.7L361.9 521.7L377.7 517.7L393.6 513.9L409.7 510.4L425.2 505.8L441.1 501.8L457.1 498.2L472.8 493.7L488.5 489.4L504.5 485.7L520.2 481.4L535.9 477.1L551.7 473.0L567.2 468.3L583.2 464.7" stroke="#977d52" stroke-opacity="0.75" stroke-width="1.8"/>
<path d="M577.8 466.1L586.4 463.2L595.3 460.9L604.5 459.1" stroke="#9c8158" stroke-opacity="0.69" stroke-width="2.0"/>
<path d="M590.5 462.7L594.9 461.0L599.9 460.3L604.6 459.1" stroke="#977d52" stroke-opacity="0.64" stroke-width="2.1"/>
<path d="M98.6 593.6L592.6 465.3" stroke="#e0dac6" stroke-opacity="0.49" stroke-width="2"/>
<path d="M99.7 599.4L114.9 595.4L130.3 591.8L145.5 587.6L160.7 583.6L175.9 579.3L191.1 575.2L206.2 570.4L221.5 566.8L236.8 563.1L252.1 559.1L267.2 554.6L282.5 550.8" stroke="#9c8158" stroke-opacity="0.72" stroke-width="2.1"/>
<path d="M266.3 555.0L282.2 550.5L298.2 546.6L314.4 543.2L330.4 539.1L346.5 535.2L362.4 531.0L378.5 527.1L394.5 523.0L410.5 518.9L426.2 514.0L442.3 510.3L458.1 505.7L474.1 501.7L489.9 497.1L505.9 493.0" stroke="#8f774f" stroke-opacity="0.82" stroke-width="2.2"/>
<path d="M491.1 496.7L507.6 492.1L524.2 487.7L540.9 483.4L557.5 478.9L574.1 474.5L591.1 470.9L607.8 466.6" stroke="#9c8158" stroke-opacity="0.82" stroke-width="1.9"/>
<path d="M100.2 602.0L596.6 472.5" stroke="#e0dac6" stroke-opacity="0.38" stroke-width="2"/>
<path d="M100.9 606.1L116.8 602.5L132.5 598.6L148.2 594.2L164.0 590.4L179.8 586.7L195.4 582.3L211.2 578.4L227.0 574.4L242.7 570.2L258.5 566.4L274.1 561.7L289.8 557.6L305.5 553.6L321.0 548.7L336.7 544.7L352.4 540.3L368.2 536.4L384.0 532.6" stroke="#9c8158" stroke-opacity="0.64" stroke-width="2.4"/>
<path d="M389.2 530.9L404.4 526.9L419.7 522.8L435.2 519.5L450.3 515.1L465.8 511.6L481.0 507.3L496.3 503.3L511.9 500.0L527.0 495.8L542.2 491.5L557.6 487.8L572.9 483.8" stroke="#9c8158" stroke-opacity="0.76" stroke-width="1.9"/>
<path d="M581.8 481.8L591.9 478.6L602.3 476.0L612.4 472.8" stroke="#8f774f" stroke-opacity="0.57" stroke-width="2.2"/>
<path d="M101.6 609.8L600.4 479.1" stroke="#e0dac6" stroke-opacity="0.38" stroke-width="2"/>
<path d="M102.3 613.6L117.7 609.8L133.1 605.7L148.5 601.9L163.7 597.3L179.3 594.0L194.5 589.4L210.1 586.1L225.4 582.1L240.8 578.1L256.3 574.6L271.6 570.3L287.0 566.1L302.4 562.4L317.8 558.3L333.1 554.0L348.3 549.6L363.7 545.5L379.0 541.3L394.4 537.3L409.6 532.8L424.9 528.8L440.3 524.9" stroke="#a3885c" stroke-opacity="0.63" stroke-width="2.0"/>
<path d="M432.5 526.9L447.9 523.1L463.0 518.8L478.3 514.9L493.6 510.8L509.2 507.4L524.3 503.2L539.9 499.8L555.1 495.6L570.3 491.4L585.7 487.6L601.2 484.1L616.5 480.0" stroke="#8f774f" stroke-opacity="0.83" stroke-width="1.8"/>
<path d="M103.0 617.2L603.9 485.4" stroke="#e0dac6" stroke-opacity="0.37" stroke-width="2"/>
<path d="M103.9 622.0L119.0 617.5L134.3 613.5L149.5 609.7L164.7 605.6L179.9 601.7L195.3 598.0L210.5 594.0L225.9 590.6L241.1 586.5L256.3 582.4L271.4 578.1L286.7 574.3L301.9 570.3L317.2 566.3L332.3 562.2L347.6 558.2L362.8 554.1L377.8 549.6" stroke="#8f774f" stroke-opacity="0.65" stroke-width="2.2"/>
<path d="M378.4 549.1L394.5 544.9L410.5 540.6L426.5 536.1L442.7 532.0L458.7 527.7L475.0 523.9L491.0 519.5L507.2 515.4L523.6 511.8L539.6 507.4L555.9 503.6L571.9 499.2L588.0 494.9L604.2 490.9L620.0 486.2" stroke="#977d52" stroke-opacity="0.81" stroke-width="2.1"/>
<path d="M104.5 625.1L607.7 492.2" stroke="#e0dac6" stroke-opacity="0.40" stroke-width="2"/>
<path d="M105.0 628.0L121.1 624.2L137.2 620.5L153.2 616.0L169.3 612.2L185.2 607.5L201.3 603.6L217.4 599.8L233.4 595.3L249.4 591.0L265.3 586.3L281.3 582.1L297.3 577.8L313.2 573.1L329.2 569.1L345.2 564.6L361.3 560.7L377.2 556.2L393.2 551.8L409.1 547.5" stroke="#977d52" stroke-opacity="0.55" stroke-width="2.3"/>
<path d="M391.8 552.7L408.8 547.8L426.1 543.4L443.3 539.0L460.6 534.9L477.8 530.4L495.0 526.0L512.2 521.5L529.2 516.6" stroke="#977d52" stroke-opacity="0.58" stroke-width="2.0"/>
<path d="M518.5 520.1L535.9 515.2L553.3 510.4L570.8 505.7L588.2 500.9L605.4 495.9L623.2 491.7" stroke="#a3885c" stroke-opacity="0.70" stroke-width="2.5"/>
<path d="M606.2 495.8L611.7 494.2L617.5 493.0L622.9 491.2" stroke="#a3885c" stroke-opacity="0.50" stroke-width="2.4"/>
<path d="M105.7 631.7L610.8 497.8" stroke="#e0dac6" stroke-opacity="0.40" stroke-width="2"/>
<path d="M106.8 637.4L122.1 633.3L137.5 629.3L152.8 624.6L168.1 620.5L183.6 616.8L198.8 612.3L214.3 608.5L229.5 604.0L244.9 599.9L260.3 596.1L275.7 592.0L291.3 588.7L306.5 584.2L322.0 580.5L337.3 576.2L352.8 572.5L368.2 568.3L383.5 564.2L398.8 559.8L414.1 555.7L429.7 552.0L444.8 547.4L460.1 543.1L475.4 538.8L490.7 534.7L506.0 530.5" stroke="#8f774f" stroke-opacity="0.51" stroke-width="2.3"/>
<path d="M509.8 529.4L526.5 524.9L543.4 520.8L560.3 516.6L577.0 512.0L593.7 507.6L610.7 503.6L627.3 498.9" stroke="#a3885c" stroke-opacity="0.63" stroke-width="2.0"/>
<path d="M107.3 640.4L615.0 505.2" stroke="#e0dac6" stroke-opacity="0.49" stroke-width="2"/>
<path d="M107.8 643.0L123.6 639.1L139.3 634.8L155.2 631.3L170.8 626.9L186.7 623.3L202.4 619.0L218.1 614.7L233.8 610.4L249.6 606.4L265.2 601.8L281.1 598.0L296.5 593.1L312.3 589.1L328.0 584.7L343.6 580.2L359.4 576.3L375.0 571.7" stroke="#8f774f" stroke-opacity="0.73" stroke-width="2.2"/>
<path d="M357.0 576.9L373.1 572.6L389.0 567.8L405.1 563.5L421.4 559.9L437.2 555.1L453.6 551.6L469.7 547.3L485.9 543.2L501.8 538.6L518.1 534.8L534.0 530.1L550.2 526.0L566.4 522.1L582.3 517.4L598.3 513.0L614.5 508.9L630.3 504.2" stroke="#9c8158" stroke-opacity="0.72" stroke-width="2.2"/>
<path d="M108.5 646.7L617.9 510.5" stroke="#e0dac6" stroke-opacity="0.29" stroke-width="2"/>
<path d="M109.4 651.3L125.5 646.2L141.8 642.5L158.0 638.1L174.4 634.3L190.5 629.6L206.9 625.9L223.0 621.0L239.3 616.9L255.6 612.7L271.9 608.6L288.1 604.0L304.4 599.9L320.5 595.3L336.8 590.9L352.9 586.3L369.2 582.1L385.2 577.1L401.5 573.1L417.7 568.5L433.9 564.2" stroke="#9c8158" stroke-opacity="0.83" stroke-width="2.2"/>
<path d="M431.1 564.6L446.8 560.5L462.5 556.6L478.0 552.2L493.5 547.9L509.5 544.5L525.1 540.4L540.6 536.0L556.2 531.8L572.1 528.3L587.7 524.0L603.1 519.4L618.7 515.4L634.2 511.0" stroke="#8f774f" stroke-opacity="0.78" stroke-width="1.9"/>
<path d="M110.0 654.6L621.7 517.3" stroke="#e0dac6" stroke-opacity="0.27" stroke-width="2"/>
<path d="M111.1 660.5L126.6 655.7L142.1 651.2L157.9 647.6L173.3 642.8L189.0 638.9L204.5 634.4L220.1 630.1L235.7 625.9L251.3 621.5L266.9 617.2L282.4 612.7L298.2 609.2L313.8 604.9L329.4 600.9L345.2 597.2L360.6 592.5L376.5 589.0L391.9 584.3L407.7 580.6L423.4 576.5L438.8 571.8L454.5 567.8" stroke="#8f774f" stroke-opacity="0.84" stroke-width="2.2"/>
<path d="M442.7 570.8L459.6 566.2L476.3 561.4L493.1 556.8L509.8 552.0L526.7 547.8L543.5 543.1L560.1 538.2L576.9 533.6" stroke="#8f774f" stroke-opacity="0.68" stroke-width="2.1"/>
<path d="M578.0 533.7L598.0 528.3L617.9 522.8L638.1 517.8" stroke="#9c8158" stroke-opacity="0.54" stroke-width="2.1"/>
<path d="M111.5 662.8L625.6 524.3" stroke="#e0dac6" stroke-opacity="0.29" stroke-width="2"/>
<path d="M112.3 667.1L128.5 663.2L144.4 658.4L160.6 654.6L176.6 650.0L192.8 646.6L208.8 641.9L224.9 637.5L241.0 633.4L257.3 629.7L273.1 624.7L289.3 620.6L305.3 616.3L321.3 611.6L337.4 607.3L353.2 602.4" stroke="#a3885c" stroke-opacity="0.66" stroke-width="2.5"/>
<path d="M337.2 607.8L353.0 602.9L368.9 598.1L385.0 593.9L401.0 589.4L417.0 584.8L433.1 580.7L449.0 576.0L465.4 572.4L481.4 568.0L497.5 563.8L513.8 559.8L529.8 555.4L545.8 550.9L561.9 546.7L578.0 542.3L594.0 537.9L610.3 534.2L626.4 529.8L642.2 525.0" stroke="#9c8158" stroke-opacity="0.57" stroke-width="2.2"/>
<path d="M626.4 529.4L631.8 528.1L637.0 526.5L642.3 525.2" stroke="#9c8158" stroke-opacity="0.62" stroke-width="2.0"/>
<path d="M113.0 670.9L629.5 531.2" stroke="#e0dac6" stroke-opacity="0.34" stroke-width="2"/>
<path d="M113.9 675.7L130.2 671.4L146.6 667.2L162.8 662.6L179.1 658.3L195.4 653.8L211.6 648.8L227.8 644.3L244.0 639.4" stroke="#977d52" stroke-opacity="0.60" stroke-width="2.2"/>
<path d="M229.2 643.5L246.3 639.2L263.2 634.2L280.3 630.0L297.3 625.2L314.2 620.3L331.2 615.5L348.3 611.2L365.3 606.4L382.5 602.4L399.7 598.1L416.7 593.4" stroke="#977d52" stroke-opacity="0.55" stroke-width="1.9"/>
<path d="M412.3 594.4L429.1 590.1L445.8 585.8L462.6 581.5L479.3 577.0L495.7 571.9L512.4 567.4L529.0 562.8L545.7 558.3L562.2 553.4L578.7 548.7L595.3 543.9L612.0 539.5L628.7 535.1L645.6 530.9" stroke="#a3885c" stroke-opacity="0.82" stroke-width="2.4"/>
<path d="M114.4 678.2L633.0 537.5" stroke="#e0dac6" stroke-opacity="0.40" stroke-width="2"/>
</g>
<rect x="41" y="82" width="557" height="783" filter="url(#pn)" opacity="0.28"/>
</g></g></svg>
<div class="a" style="left:49px;top:825px;width:539px;height:32.5px;box-sizing:border-box;border:1px solid #303030;border-radius:4px;background:#2c2c2c"></div>
<div class="a" style="left:553.5px;top:827.5px;width:26px;height:26px;border-radius:3px;background:#474747"></div>
<svg class="a" style="left:430px;top:826px" width="160" height="30" fill="none" stroke="#c8c8c8" stroke-width="1.5"><circle cx="15.8" cy="15.6" r="6.9" stroke-width="1.6"/><path d="M15.8 14v5.8" stroke-width="2.1"/><circle cx="15.8" cy="11.6" r="1.2" fill="#c8c8c8" stroke="none"/><rect x="38" y="9" width="12.6" height="11.7" rx="1" fill="#a3a3a3" stroke="none"/><path d="M50.2 14.2l5.1-4.3v10.2l-5.1-4.3z" fill="#a3a3a3" stroke="none"/><path d="M57.5 25v-4l-4 4z" fill="#a8a8a8" stroke="none"/><path d="M83.85 14.40L83.66 14.99L83.20 15.51L82.71 15.96L82.40 16.40L82.35 16.94L82.44 17.60L82.46 18.29L82.22 18.87L81.70 19.20L81.01 19.30L80.35 19.32L79.83 19.47L79.44 19.85L79.09 20.41L78.66 20.96L78.11 21.24L77.49 21.16L76.90 20.80L76.38 20.39L75.88 20.16L75.34 20.21L74.71 20.41L74.03 20.55L73.43 20.42L73.01 19.96L72.79 19.30L72.65 18.65L72.42 18.16L71.98 17.85L71.36 17.60L70.75 17.27L70.37 16.78L70.34 16.16L70.60 15.51L70.91 14.92L71.05 14.40L70.91 13.88L70.60 13.29L70.34 12.64L70.37 12.02L70.75 11.53L71.36 11.20L71.98 10.95L72.42 10.64L72.65 10.15L72.79 9.50L73.01 8.84L73.42 8.38L74.03 8.25L74.71 8.39L75.34 8.59L75.88 8.64L76.38 8.41L76.90 8.00L77.49 7.64L78.11 7.56L78.66 7.84L79.09 8.39L79.44 8.95L79.83 9.33L80.35 9.48L81.01 9.50L81.70 9.60L82.22 9.93L82.46 10.51L82.44 11.20L82.35 11.86L82.40 12.40L82.71 12.84L83.20 13.29L83.66 13.81L83.85 14.40z" stroke-width="1.5"/><path d="M73.8 12.8l2.2-2" stroke-width="1.4"/><path d="M87.5 25v-4l-4 4z" fill="#a8a8a8" stroke="none"/><circle cx="107" cy="15.5" r="7" stroke-width="1.5"/><path d="M105 11.5v8M109 11.5v8M103 13.5h8M103 17.5h8" stroke-width="1.3"/><path d="M117.5 25v-4l-4 4z" fill="#a8a8a8" stroke="none"/><circle cx="137" cy="14.4" r="7.9" stroke-width="1.7"/><path d="M132 12.8q1-2.4 3.4-3.6" stroke-width="1.4"/><path d="M143.6 15.5a6.6 6.6 0 0 1-4 5.3" stroke-width="1" stroke-dasharray="0.9 0.9"/></svg>
<svg width="555" height="783" style="position:absolute;left:598px;top:82px;display:block">
<defs><filter id="nf" x="0" y="0" width="555" height="783" filterUnits="userSpaceOnUse" color-interpolation-filters="sRGB"><feTurbulence type="fractalNoise" baseFrequency="0.006 0.2" numOctaves="3" seed="5"/><feColorMatrix values="0.05 0 0 0 0.475  -0.08 0 0 0 0.542  0 0 0 0 0.96  0 0 0 0 1"/></filter><filter id="gb" x="0" y="0" width="555" height="783" filterUnits="userSpaceOnUse"><feGaussianBlur stdDeviation="0.6"/></filter></defs>
<rect width="555" height="783" fill="#7f7ff4" filter="url(#nf)"/><g filter="url(#gb)" fill="none">
<path d="M-56 9.7L-44 9.8L-32 9.1L-19 8.9L-7 8.4L6 8.3L18 8.8L31 8.0L43 8.3L55 9.0L68 9.1L80 9.0L93 9.9L105 9.8L118 10.2" stroke="#8c62e8" stroke-width="1.6" stroke-opacity="0.38"/>
<path d="M-56 11.6L-44 11.7L-32 11.0L-19 10.8L-7 10.3L6 10.2L18 10.7L31 9.9L43 10.2L55 10.9L68 11.0L80 10.9L93 11.8L105 11.7L118 12.1" stroke="#7598f7" stroke-width="1.5" stroke-opacity="0.27"/>
<path d="M123 9.8L136 10.6L149 10.2L161 9.6L174 10.1L187 9.2L200 8.7L212 8.9L225 8.3L238 8.4L250 8.5" stroke="#8c62e8" stroke-width="1.6" stroke-opacity="0.30"/>
<path d="M123 11.7L136 12.5L149 12.1L161 11.5L174 12.0L187 11.1L200 10.6L212 10.8L225 10.2L238 10.3L250 10.4" stroke="#7598f7" stroke-width="1.5" stroke-opacity="0.19"/>
<path d="M252 8.0L264 8.4L277 8.2L290 8.8L303 9.5L315 9.5L328 10.0L341 10.3L354 9.8L366 10.7L379 10.4L392 9.6L404 10.1" stroke="#8c62e8" stroke-width="1.6" stroke-opacity="0.51"/>
<path d="M252 9.9L264 10.3L277 10.1L290 10.7L303 11.4L315 11.4L328 11.9L341 12.2L354 11.7L366 12.6L379 12.3L392 11.5L404 12.0" stroke="#7598f7" stroke-width="1.5" stroke-opacity="0.36"/>
<path d="M414 9.2L427 9.5L439 8.5L452 8.4L465 8.4L477 7.9L490 8.5L502 8.2L515 8.5L528 9.2L540 9.2L553 10.0L565 10.0L578 10.4" stroke="#8c62e8" stroke-width="1.6" stroke-opacity="0.60"/>
<path d="M414 11.1L427 11.4L439 10.4L452 10.3L465 10.3L477 9.8L490 10.4L502 10.1L515 10.4L528 11.1L540 11.1L553 11.9L565 11.9L578 12.3" stroke="#7598f7" stroke-width="1.5" stroke-opacity="0.46"/>
<path d="M-15 18.0L-3 17.2L9 17.3L21 17.4L34 17.3L46 16.8L58 15.9L70 16.2L83 15.6L95 16.0L107 16.3L119 15.7L132 16.7L144 16.8L156 16.6L168 16.9L180 17.4L193 17.9" stroke="#8c62e8" stroke-width="1.6" stroke-opacity="0.56"/>
<path d="M-15 19.9L-3 19.1L9 19.2L21 19.3L34 19.2L46 18.7L58 17.8L70 18.1L83 17.5L95 17.9L107 18.2L119 17.6L132 18.6L144 18.7L156 18.5L168 18.8L180 19.3L193 19.8" stroke="#7598f7" stroke-width="1.5" stroke-opacity="0.44"/>
<path d="M193 17.3L206 17.8L219 17.5L232 17.8L244 17.3L257 16.7" stroke="#8c62e8" stroke-width="1.6" stroke-opacity="0.61"/>
<path d="M193 19.2L206 19.7L219 19.4L232 19.7L244 19.2L257 18.6" stroke="#7598f7" stroke-width="1.5" stroke-opacity="0.55"/>
<path d="M264 16.5L276 16.5L288 16.0L300 16.1L313 16.4L325 16.2L337 15.5L349 15.7L361 16.6L373 16.7L385 16.7L397 17.1L409 17.0L421 17.9L434 17.6L446 18.1L458 17.8L470 17.1L482 17.1" stroke="#8c62e8" stroke-width="1.6" stroke-opacity="0.68"/>
<path d="M264 18.4L276 18.4L288 17.9L300 18.0L313 18.3L325 18.1L337 17.4L349 17.6L361 18.5L373 18.6L385 18.6L397 19.0L409 18.9L421 19.8L434 19.5L446 20.0L458 19.7L470 19.0L482 19.0" stroke="#7598f7" stroke-width="1.5" stroke-opacity="0.43"/>
<path d="M549 15.8L561 15.9L574 16.1L586 16.0L599 16.2" stroke="#8c62e8" stroke-width="1.6" stroke-opacity="0.33"/>
<path d="M549 17.7L561 17.8L574 18.0L586 17.9L599 18.1" stroke="#7598f7" stroke-width="1.5" stroke-opacity="0.18"/>
<path d="M-32 22.4L-20 22.2L-7 22.5L5 23.0L18 23.1" stroke="#8c62e8" stroke-width="1.6" stroke-opacity="0.32"/>
<path d="M-32 24.3L-20 24.1L-7 24.4L5 24.9L18 25.0" stroke="#7598f7" stroke-width="1.5" stroke-opacity="0.25"/>
<path d="M27 23.6L39 24.0L52 24.2L64 24.2L76 24.0L89 23.8L101 23.3L113 22.9L126 23.1L138 22.9L150 22.8L162 22.4L175 21.9L187 22.4L199 22.5L212 22.5L224 22.8L236 22.9L249 23.4L261 23.5L273 23.3L285 23.7" stroke="#8c62e8" stroke-width="1.6" stroke-opacity="0.27"/>
<path d="M27 25.5L39 25.9L52 26.1L64 26.1L76 25.9L89 25.7L101 25.2L113 24.8L126 25.0L138 24.8L150 24.7L162 24.3L175 23.8L187 24.3L199 24.4L212 24.4L224 24.7L236 24.8L249 25.3L261 25.4L273 25.2L285 25.6" stroke="#7598f7" stroke-width="1.5" stroke-opacity="0.18"/>
<path d="M344 22.9L356 22.7L368 22.3L380 21.9L392 22.6L404 22.1L416 22.1L428 22.3L441 22.2L453 22.3L465 22.5" stroke="#8c62e8" stroke-width="1.6" stroke-opacity="0.36"/>
<path d="M344 24.8L356 24.6L368 24.2L380 23.8L392 24.5L404 24.0L416 24.0L428 24.2L441 24.1L453 24.2L465 24.4" stroke="#7598f7" stroke-width="1.5" stroke-opacity="0.24"/>
<path d="M472 22.9L484 23.8L497 23.7L509 23.4L522 23.6L534 24.0L546 24.3L559 23.4L571 23.6L584 22.9L596 23.1L608 22.0L621 22.2L633 22.5" stroke="#8c62e8" stroke-width="1.6" stroke-opacity="0.67"/>
<path d="M472 24.8L484 25.7L497 25.6L509 25.3L522 25.5L534 25.9L546 26.2L559 25.3L571 25.5L584 24.8L596 25.0L608 23.9L621 24.1L633 24.4" stroke="#7598f7" stroke-width="1.5" stroke-opacity="0.44"/>
<path d="M-44 30.1L-31 30.2L-19 30.2L-6 29.8L6 29.3L19 29.8L32 30.2L44 30.0" stroke="#8c62e8" stroke-width="1.6" stroke-opacity="0.43"/>
<path d="M-44 32.0L-31 32.1L-19 32.1L-6 31.7L6 31.2L19 31.7L32 32.1L44 31.9" stroke="#7598f7" stroke-width="1.5" stroke-opacity="0.25"/>
<path d="M134 31.0L147 31.3L160 31.4L173 30.9L185 30.9L198 29.9L211 29.7L224 29.9L236 29.7L249 29.5" stroke="#8c62e8" stroke-width="1.6" stroke-opacity="0.31"/>
<path d="M134 32.9L147 33.2L160 33.3L173 32.8L185 32.8L198 31.8L211 31.6L224 31.8L236 31.6L249 31.4" stroke="#7598f7" stroke-width="1.5" stroke-opacity="0.26"/>
<path d="M250 29.7L263 29.5L276 29.9L289 30.3L302 30.3L315 30.8L328 30.6L342 31.7L355 31.4L368 31.8L381 30.8" stroke="#8c62e8" stroke-width="1.6" stroke-opacity="0.27"/>
<path d="M250 31.6L263 31.4L276 31.8L289 32.2L302 32.2L315 32.7L328 32.5L342 33.6L355 33.3L368 33.7L381 32.7" stroke="#7598f7" stroke-width="1.5" stroke-opacity="0.22"/>
<path d="M384 30.8L396 31.2L408 30.3L421 30.7L433 30.0L445 29.9" stroke="#8c62e8" stroke-width="1.6" stroke-opacity="0.32"/>
<path d="M384 32.7L396 33.1L408 32.2L421 32.6L433 31.9L445 31.8" stroke="#7598f7" stroke-width="1.5" stroke-opacity="0.25"/>
<path d="M451 30.0L464 29.4L476 29.8L488 29.9L501 30.1L513 29.8L525 30.5L538 31.0L550 30.8L562 30.9L574 31.3L587 31.8L599 31.0L611 30.8L624 31.0" stroke="#8c62e8" stroke-width="1.6" stroke-opacity="0.40"/>
<path d="M451 31.9L464 31.3L476 31.7L488 31.8L501 32.0L513 31.7L525 32.4L538 32.9L550 32.7L562 32.8L574 33.2L587 33.7L599 32.9L611 32.7L624 32.9" stroke="#7598f7" stroke-width="1.5" stroke-opacity="0.32"/>
<path d="M-46 44.7L-31 44.3L-16 44.6L-1 44.5L13 44.2" stroke="#8c62e8" stroke-width="1.6" stroke-opacity="0.26"/>
<path d="M-46 46.6L-31 46.2L-16 46.5L-1 46.4L13 46.1" stroke="#7598f7" stroke-width="1.5" stroke-opacity="0.24"/>
<path d="M15 45.0L28 44.4L41 44.5L54 45.6L68 45.4L81 46.4L94 46.1" stroke="#8c62e8" stroke-width="1.6" stroke-opacity="0.58"/>
<path d="M15 46.9L28 46.3L41 46.4L54 47.5L68 47.3L81 48.3L94 48.0" stroke="#7598f7" stroke-width="1.5" stroke-opacity="0.47"/>
<path d="M102 46.6L115 45.9L128 46.5L141 45.6L153 46.0L166 45.4L179 45.6L192 44.5L205 44.8L218 44.5L230 44.9L243 45.0" stroke="#8c62e8" stroke-width="1.6" stroke-opacity="0.40"/>
<path d="M102 48.5L115 47.8L128 48.4L141 47.5L153 47.9L166 47.3L179 47.5L192 46.4L205 46.7L218 46.4L230 46.8L243 46.9" stroke="#7598f7" stroke-width="1.5" stroke-opacity="0.32"/>
<path d="M246 44.3L258 44.4L270 45.2L282 45.4L295 45.3L307 46.3L319 45.8L331 46.3L343 45.9" stroke="#8c62e8" stroke-width="1.6" stroke-opacity="0.45"/>
<path d="M246 46.2L258 46.3L270 47.1L282 47.3L295 47.2L307 48.2L319 47.7L331 48.2L343 47.8" stroke="#7598f7" stroke-width="1.5" stroke-opacity="0.40"/>
<path d="M385 45.6L397 45.4L409 45.3L421 45.4L433 44.4L445 44.8L457 44.6L469 44.4L481 44.7L494 45.1L506 44.7L518 45.7L530 45.4L542 46.1L554 46.4L566 45.9L578 46.6L590 46.7" stroke="#8c62e8" stroke-width="1.6" stroke-opacity="0.62"/>
<path d="M385 47.5L397 47.3L409 47.2L421 47.3L433 46.3L445 46.7L457 46.5L469 46.3L481 46.6L494 47.0L506 46.6L518 47.6L530 47.3L542 48.0L554 48.3L566 47.8L578 48.5L590 48.6" stroke="#7598f7" stroke-width="1.5" stroke-opacity="0.41"/>
<path d="M-59 59.0L-47 59.0L-35 59.4L-23 58.9L-11 59.3L2 60.1L14 60.2" stroke="#8c62e8" stroke-width="1.6" stroke-opacity="0.58"/>
<path d="M-59 60.9L-47 60.9L-35 61.3L-23 60.8L-11 61.2L2 62.0L14 62.1" stroke="#7598f7" stroke-width="1.5" stroke-opacity="0.52"/>
<path d="M36 60.7L49 60.3L63 61.0L76 60.8L89 61.0L102 60.5L115 60.2L128 60.9" stroke="#8c62e8" stroke-width="1.6" stroke-opacity="0.61"/>
<path d="M36 62.6L49 62.2L63 62.9L76 62.7L89 62.9L102 62.4L115 62.1L128 62.8" stroke="#7598f7" stroke-width="1.5" stroke-opacity="0.41"/>
<path d="M158 59.6L170 59.1L182 59.5L194 58.9L207 59.5L219 59.4L231 59.3L244 59.8L256 60.2L268 60.9L280 60.6L293 60.7L305 61.5" stroke="#8c62e8" stroke-width="1.6" stroke-opacity="0.31"/>
<path d="M158 61.5L170 61.0L182 61.4L194 60.8L207 61.4L219 61.3L231 61.2L244 61.7L256 62.1L268 62.8L280 62.5L293 62.6L305 63.4" stroke="#7598f7" stroke-width="1.5" stroke-opacity="0.28"/>
<path d="M308 60.6L321 60.6L334 60.9L347 60.6L360 60.4L373 59.9L387 59.3" stroke="#8c62e8" stroke-width="1.6" stroke-opacity="0.37"/>
<path d="M308 62.5L321 62.5L334 62.8L347 62.5L360 62.3L373 61.8L387 61.2" stroke="#7598f7" stroke-width="1.5" stroke-opacity="0.30"/>
<path d="M392 60.1L404 59.8L417 59.5L429 59.2L441 59.1L454 59.4L466 60.2L479 59.9L491 60.2L503 60.5L516 60.4L528 61.5L540 60.6L553 61.1" stroke="#8c62e8" stroke-width="1.6" stroke-opacity="0.56"/>
<path d="M392 62.0L404 61.7L417 61.4L429 61.1L441 61.0L454 61.3L466 62.1L479 61.8L491 62.1L503 62.4L516 62.3L528 63.4L540 62.5L553 63.0" stroke="#7598f7" stroke-width="1.5" stroke-opacity="0.52"/>
<path d="M-46 69.8L-32 70.3L-19 69.7L-6 70.5L7 70.3L20 70.6" stroke="#8c62e8" stroke-width="1.6" stroke-opacity="0.63"/>
<path d="M-46 71.7L-32 72.2L-19 71.6L-6 72.4L7 72.2L20 72.5" stroke="#7598f7" stroke-width="1.5" stroke-opacity="0.48"/>
<path d="M30 70.7L43 70.2L57 70.0L70 70.0" stroke="#8c62e8" stroke-width="1.6" stroke-opacity="0.59"/>
<path d="M30 72.6L43 72.1L57 71.9L70 71.9" stroke="#7598f7" stroke-width="1.5" stroke-opacity="0.38"/>
<path d="M77 69.3L90 69.1L102 69.0L114 68.9L127 68.5L139 68.8L151 68.9L164 68.8L176 69.4L188 69.4L201 70.3" stroke="#8c62e8" stroke-width="1.6" stroke-opacity="0.57"/>
<path d="M77 71.2L90 71.0L102 70.9L114 70.8L127 70.4L139 70.7L151 70.8L164 70.7L176 71.3L188 71.3L201 72.2" stroke="#7598f7" stroke-width="1.5" stroke-opacity="0.42"/>
<path d="M206 69.6L218 70.7L230 70.4L242 70.5L254 70.4L266 70.6L278 69.8L290 69.5L302 69.9L315 69.2L327 69.1L339 69.1L351 69.1" stroke="#8c62e8" stroke-width="1.6" stroke-opacity="0.35"/>
<path d="M206 71.5L218 72.6L230 72.3L242 72.4L254 72.3L266 72.5L278 71.7L290 71.4L302 71.8L315 71.1L327 71.0L339 71.0L351 71.0" stroke="#7598f7" stroke-width="1.5" stroke-opacity="0.31"/>
<path d="M355 68.3L367 68.3L379 68.5L392 68.5L404 69.1L417 69.8L429 69.8L441 70.0L454 69.9L466 70.3L479 70.9L491 70.6L503 70.2L516 70.0L528 70.0L540 69.7L553 68.8L565 69.1L578 68.6" stroke="#8c62e8" stroke-width="1.6" stroke-opacity="0.62"/>
<path d="M355 70.2L367 70.2L379 70.4L392 70.4L404 71.0L417 71.7L429 71.7L441 71.9L454 71.8L466 72.2L479 72.8L491 72.5L503 72.1L516 71.9L528 71.9L540 71.6L553 70.7L565 71.0L578 70.5" stroke="#7598f7" stroke-width="1.5" stroke-opacity="0.47"/>
<path d="M-37 77.5L-25 77.8L-13 78.6L-1 78.5L11 78.8L23 79.0L35 79.7L47 79.1" stroke="#8c62e8" stroke-width="1.6" stroke-opacity="0.51"/>
<path d="M-37 79.4L-25 79.7L-13 80.5L-1 80.4L11 80.7L23 80.9L35 81.6L47 81.0" stroke="#7598f7" stroke-width="1.5" stroke-opacity="0.41"/>
<path d="M83 79.4L95 78.9L107 78.3L119 78.4L132 78.0L144 78.1L156 77.6L168 77.6L180 77.9L192 78.2L204 77.9L216 78.2" stroke="#8c62e8" stroke-width="1.6" stroke-opacity="0.61"/>
<path d="M83 81.3L95 80.8L107 80.2L119 80.3L132 79.9L144 80.0L156 79.5L168 79.5L180 79.8L192 80.1L204 79.8L216 80.1" stroke="#7598f7" stroke-width="1.5" stroke-opacity="0.47"/>
<path d="M252 79.0L264 79.5L276 79.3L288 79.1L300 79.7L312 79.2L324 79.1L336 78.8L348 78.9L360 78.5L372 77.5L385 77.9L397 77.7L409 77.7L421 78.2L433 77.9L445 78.2L457 78.9L469 78.7L481 79.1L493 79.3L505 79.8" stroke="#8c62e8" stroke-width="1.6" stroke-opacity="0.57"/>
<path d="M252 80.9L264 81.4L276 81.2L288 81.0L300 81.6L312 81.1L324 81.0L336 80.7L348 80.8L360 80.4L372 79.4L385 79.8L397 79.6L409 79.6L421 80.1L433 79.8L445 80.1L457 80.8L469 80.6L481 81.0L493 81.2L505 81.7" stroke="#7598f7" stroke-width="1.5" stroke-opacity="0.47"/>
<path d="M509 79.5L522 79.8L534 79.7L546 78.9L558 78.8" stroke="#8c62e8" stroke-width="1.6" stroke-opacity="0.56"/>
<path d="M509 81.4L522 81.7L534 81.6L546 80.8L558 80.7" stroke="#7598f7" stroke-width="1.5" stroke-opacity="0.32"/>
<path d="M-15 85.6L-2 85.1L11 84.4L24 84.8L37 84.4" stroke="#8c62e8" stroke-width="1.6" stroke-opacity="0.56"/>
<path d="M-15 87.5L-2 87.0L11 86.3L24 86.7L37 86.3" stroke="#7598f7" stroke-width="1.5" stroke-opacity="0.44"/>
<path d="M123 85.7L135 86.1L147 85.8L159 86.8L171 86.0L184 85.9L196 85.7L208 85.4L220 85.7L232 85.1L245 84.8L257 84.5L269 84.1L281 84.3L293 85.0L306 85.1L318 85.4L330 85.1L342 85.3L354 85.4" stroke="#8c62e8" stroke-width="1.6" stroke-opacity="0.32"/>
<path d="M123 87.6L135 88.0L147 87.7L159 88.7L171 87.9L184 87.8L196 87.6L208 87.3L220 87.6L232 87.0L245 86.7L257 86.4L269 86.0L281 86.2L293 86.9L306 87.0L318 87.3L330 87.0L342 87.2L354 87.3" stroke="#7598f7" stroke-width="1.5" stroke-opacity="0.24"/>
<path d="M359 85.8L371 86.5L384 86.0L396 86.7L408 86.3L421 85.6L433 85.6L445 85.6L457 85.1L470 85.0L482 84.5L494 84.3L507 84.8" stroke="#8c62e8" stroke-width="1.6" stroke-opacity="0.51"/>
<path d="M359 87.7L371 88.4L384 87.9L396 88.6L408 88.2L421 87.5L433 87.5L445 87.5L457 87.0L470 86.9L482 86.4L494 86.2L507 86.7" stroke="#7598f7" stroke-width="1.5" stroke-opacity="0.34"/>
<path d="M515 84.9L527 84.6L539 85.2L551 84.6L563 85.3L576 85.8L588 85.4L600 86.5L612 85.8L624 86.4L636 85.9L648 86.5L661 86.0L673 85.9L685 85.3" stroke="#8c62e8" stroke-width="1.6" stroke-opacity="0.45"/>
<path d="M515 86.8L527 86.5L539 87.1L551 86.5L563 87.2L576 87.7L588 87.3L600 88.4L612 87.7L624 88.3L636 87.8L648 88.4L661 87.9L673 87.8L685 87.2" stroke="#7598f7" stroke-width="1.5" stroke-opacity="0.37"/>
<path d="M-10 93.4L2 93.6L14 94.5L27 94.6L39 94.0L51 94.1L63 93.5L75 93.9L87 93.4L99 92.6L111 92.2L123 92.7L135 91.9L148 92.8L160 92.3L172 92.4L184 93.0L196 93.1L208 93.6L220 93.4L232 94.4" stroke="#8c62e8" stroke-width="1.6" stroke-opacity="0.34"/>
<path d="M-10 95.3L2 95.5L14 96.4L27 96.5L39 95.9L51 96.0L63 95.4L75 95.8L87 95.3L99 94.5L111 94.1L123 94.6L135 93.8L148 94.7L160 94.2L172 94.3L184 94.9L196 95.0L208 95.5L220 95.3L232 96.3" stroke="#7598f7" stroke-width="1.5" stroke-opacity="0.23"/>
<path d="M264 94.1L277 93.6L290 93.7L302 93.7L315 93.0L328 93.0L341 92.3L353 92.5L366 92.6L379 92.3L391 92.7L404 92.3L417 93.3L429 92.9L442 94.0L455 94.3L468 94.5L480 94.2" stroke="#8c62e8" stroke-width="1.6" stroke-opacity="0.69"/>
<path d="M264 96.0L277 95.5L290 95.6L302 95.6L315 94.9L328 94.9L341 94.2L353 94.4L366 94.5L379 94.2L391 94.6L404 94.2L417 95.2L429 94.8L442 95.9L455 96.2L468 96.4L480 96.1" stroke="#7598f7" stroke-width="1.5" stroke-opacity="0.46"/>
<path d="M488 93.8L500 94.1L513 94.4L525 93.9L537 93.6L550 92.8L562 92.6L575 92.5L587 92.9L600 92.8L612 92.1L625 92.9L637 92.2" stroke="#8c62e8" stroke-width="1.6" stroke-opacity="0.67"/>
<path d="M488 95.7L500 96.0L513 96.3L525 95.8L537 95.5L550 94.7L562 94.5L575 94.4L587 94.8L600 94.7L612 94.0L625 94.8L637 94.1" stroke="#7598f7" stroke-width="1.5" stroke-opacity="0.53"/>
<path d="M-21 107.3L-8 108.1L5 107.9L17 108.7L30 108.4L42 108.3L55 108.7L68 108.2L80 108.4L93 108.4" stroke="#8c62e8" stroke-width="1.6" stroke-opacity="0.45"/>
<path d="M-21 109.2L-8 110.0L5 109.8L17 110.6L30 110.3L42 110.2L55 110.6L68 110.1L80 110.3L93 110.3" stroke="#7598f7" stroke-width="1.5" stroke-opacity="0.36"/>
<path d="M93 108.2L106 107.4L119 107.5L131 107.1L144 106.9L157 107.1L169 106.6L182 106.7L195 107.7L208 107.3L220 108.1L233 108.5L246 108.3" stroke="#8c62e8" stroke-width="1.6" stroke-opacity="0.29"/>
<path d="M93 110.1L106 109.3L119 109.4L131 109.0L144 108.8L157 109.0L169 108.5L182 108.6L195 109.6L208 109.2L220 110.0L233 110.4L246 110.2" stroke="#7598f7" stroke-width="1.5" stroke-opacity="0.18"/>
<path d="M255 108.5L268 108.3L281 108.7L294 108.3L307 108.5L321 108.2" stroke="#8c62e8" stroke-width="1.6" stroke-opacity="0.47"/>
<path d="M255 110.4L268 110.2L281 110.6L294 110.2L307 110.4L321 110.1" stroke="#7598f7" stroke-width="1.5" stroke-opacity="0.33"/>
<path d="M325 107.8L337 108.2L349 107.5L361 107.7L373 106.6L385 107.4L397 106.9L409 107.3" stroke="#8c62e8" stroke-width="1.6" stroke-opacity="0.31"/>
<path d="M325 109.7L337 110.1L349 109.4L361 109.6L373 108.5L385 109.3L397 108.8L409 109.2" stroke="#7598f7" stroke-width="1.5" stroke-opacity="0.24"/>
<path d="M412 106.8L424 106.7L436 107.3L448 107.7L460 107.7L472 108.6L484 108.0L496 108.7L508 108.4L520 108.8L532 108.8L544 108.6L556 107.7L568 107.6L580 107.6L592 107.8L605 106.6L617 107.1" stroke="#8c62e8" stroke-width="1.6" stroke-opacity="0.32"/>
<path d="M412 108.7L424 108.6L436 109.2L448 109.6L460 109.6L472 110.5L484 109.9L496 110.6L508 110.3L520 110.7L532 110.7L544 110.5L556 109.6L568 109.5L580 109.5L592 109.7L605 108.5L617 109.0" stroke="#7598f7" stroke-width="1.5" stroke-opacity="0.26"/>
<path d="M-32 120.1L-18 120.2L-4 120.2L10 120.6" stroke="#8c62e8" stroke-width="1.6" stroke-opacity="0.67"/>
<path d="M-32 122.0L-18 122.1L-4 122.1L10 122.5" stroke="#7598f7" stroke-width="1.5" stroke-opacity="0.57"/>
<path d="M12 120.6L24 121.0L37 121.4L50 122.2L63 122.4L76 122.3L89 121.9L102 121.8L114 121.8L127 121.7" stroke="#8c62e8" stroke-width="1.6" stroke-opacity="0.31"/>
<path d="M12 122.5L24 122.9L37 123.3L50 124.1L63 124.3L76 124.2L89 123.8L102 123.7L114 123.7L127 123.6" stroke="#7598f7" stroke-width="1.5" stroke-opacity="0.27"/>
<path d="M129 121.5L142 120.5L155 120.8L167 120.2L180 119.9L193 120.7L205 120.4L218 120.6L231 120.3L243 121.2L256 121.7L269 121.9L282 122.0L294 122.3L307 122.3" stroke="#8c62e8" stroke-width="1.6" stroke-opacity="0.63"/>
<path d="M129 123.4L142 122.4L155 122.7L167 122.1L180 121.8L193 122.6L205 122.3L218 122.5L231 122.2L243 123.1L256 123.6L269 123.8L282 123.9L294 124.2L307 124.2" stroke="#7598f7" stroke-width="1.5" stroke-opacity="0.50"/>
<path d="M315 121.8L328 122.3L340 121.7L353 121.9L365 120.8L378 121.3L390 120.9L403 120.1L415 120.6L428 119.9L440 120.0L453 120.4L465 120.4L478 120.9L490 121.7L503 121.7L515 122.0L528 121.8" stroke="#8c62e8" stroke-width="1.6" stroke-opacity="0.64"/>
<path d="M315 123.7L328 124.2L340 123.6L353 123.8L365 122.7L378 123.2L390 122.8L403 122.0L415 122.5L428 121.8L440 121.9L453 122.3L465 122.3L478 122.8L490 123.6L503 123.6L515 123.9L528 123.7" stroke="#7598f7" stroke-width="1.5" stroke-opacity="0.55"/>
<path d="M535 121.9L547 121.6L559 122.0L572 122.1L584 121.3L596 121.3L609 121.2L621 120.9L633 119.9L646 120.2L658 119.7L670 119.9L683 120.7L695 120.5L708 121.0L720 121.1L732 121.3L745 121.4L757 121.8L769 122.3L782 122.1" stroke="#8c62e8" stroke-width="1.6" stroke-opacity="0.62"/>
<path d="M535 123.8L547 123.5L559 123.9L572 124.0L584 123.2L596 123.2L609 123.1L621 122.8L633 121.8L646 122.1L658 121.6L670 121.8L683 122.6L695 122.4L708 122.9L720 123.0L732 123.2L745 123.3L757 123.7L769 124.2L782 124.0" stroke="#7598f7" stroke-width="1.5" stroke-opacity="0.41"/>
<path d="M-33 133.5L-21 132.6L-9 133.1L3 132.3L15 132.3L27 133.0L39 132.5L51 132.5L63 133.4L75 133.4L87 134.0L99 133.8L112 134.1L124 134.7L136 134.3L148 134.8L160 133.8L172 134.3L184 133.3" stroke="#8c62e8" stroke-width="1.6" stroke-opacity="0.30"/>
<path d="M-33 135.4L-21 134.5L-9 135.0L3 134.2L15 134.2L27 134.9L39 134.4L51 134.4L63 135.3L75 135.3L87 135.9L99 135.7L112 136.0L124 136.6L136 136.2L148 136.7L160 135.7L172 136.2L184 135.2" stroke="#7598f7" stroke-width="1.5" stroke-opacity="0.23"/>
<path d="M186 133.9L198 133.1L211 132.9L223 132.4L235 132.7L248 132.9L260 132.5L273 132.5L285 133.2L297 133.5L310 133.5L322 133.2L335 134.1L347 134.1L359 134.7L372 134.2L384 134.4L397 134.2L409 133.7L421 133.6L434 133.4" stroke="#8c62e8" stroke-width="1.6" stroke-opacity="0.45"/>
<path d="M186 135.8L198 135.0L211 134.8L223 134.3L235 134.6L248 134.8L260 134.4L273 134.4L285 135.1L297 135.4L310 135.4L322 135.1L335 136.0L347 136.0L359 136.6L372 136.1L384 136.3L397 136.1L409 135.6L421 135.5L434 135.3" stroke="#7598f7" stroke-width="1.5" stroke-opacity="0.41"/>
<path d="M437 133.5L450 133.1L462 132.7L474 132.5L486 132.8L498 132.9L510 132.9L522 133.2L534 132.7L547 133.3L559 133.4L571 134.5L583 134.6L595 133.9L607 134.4L619 134.3L631 133.6L644 133.7L656 133.8L668 133.4L680 132.7L692 133.0" stroke="#8c62e8" stroke-width="1.6" stroke-opacity="0.28"/>
<path d="M437 135.4L450 135.0L462 134.6L474 134.4L486 134.7L498 134.8L510 134.8L522 135.1L534 134.6L547 135.2L559 135.3L571 136.4L583 136.5L595 135.8L607 136.3L619 136.2L631 135.5L644 135.6L656 135.7L668 135.3L680 134.6L692 134.9" stroke="#7598f7" stroke-width="1.5" stroke-opacity="0.18"/>
<path d="M-21 147.8L-8 147.5L4 147.6L17 147.4L29 147.5L42 148.2L54 148.8L67 149.0L80 148.8L92 148.7L105 149.1L117 149.4L130 148.6L143 148.9L155 148.0L168 147.9" stroke="#8c62e8" stroke-width="1.6" stroke-opacity="0.42"/>
<path d="M-21 149.7L-8 149.4L4 149.5L17 149.3L29 149.4L42 150.1L54 150.7L67 150.9L80 150.7L92 150.6L105 151.0L117 151.3L130 150.5L143 150.8L155 149.9L168 149.8" stroke="#7598f7" stroke-width="1.5" stroke-opacity="0.24"/>
<path d="M172 147.7L184 147.5L196 147.9L208 147.1L220 147.1L232 147.3L244 147.1L256 147.5L268 147.9L280 148.1L292 149.0L304 148.6L316 148.7L328 149.5L340 149.1L352 149.4L364 149.0L376 148.9L388 148.2L400 147.7L412 148.0L424 147.5" stroke="#8c62e8" stroke-width="1.6" stroke-opacity="0.68"/>
<path d="M172 149.6L184 149.4L196 149.8L208 149.0L220 149.0L232 149.2L244 149.0L256 149.4L268 149.8L280 150.0L292 150.9L304 150.5L316 150.6L328 151.4L340 151.0L352 151.3L364 150.9L376 150.8L388 150.1L400 149.6L412 149.9L424 149.4" stroke="#7598f7" stroke-width="1.5" stroke-opacity="0.53"/>
<path d="M432 147.9L444 147.4L457 147.1L470 147.5L482 147.3L495 148.1L507 147.7L520 148.8L532 148.8" stroke="#8c62e8" stroke-width="1.6" stroke-opacity="0.41"/>
<path d="M432 149.8L444 149.3L457 149.0L470 149.4L482 149.2L495 150.0L507 149.6L520 150.7L532 150.7" stroke="#7598f7" stroke-width="1.5" stroke-opacity="0.29"/>
<path d="M-56 157.2L-44 157.4L-32 156.5L-19 156.4L-7 156.5L5 156.5L17 155.9L29 155.8L41 155.8L53 155.4L65 156.0L77 156.0L89 155.9L102 156.2L114 156.9L126 156.7L138 156.8L150 157.6" stroke="#8c62e8" stroke-width="1.6" stroke-opacity="0.56"/>
<path d="M-56 159.1L-44 159.3L-32 158.4L-19 158.3L-7 158.4L5 158.4L17 157.8L29 157.7L41 157.7L53 157.3L65 157.9L77 157.9L89 157.8L102 158.1L114 158.8L126 158.6L138 158.7L150 159.5" stroke="#7598f7" stroke-width="1.5" stroke-opacity="0.42"/>
<path d="M157 157.1L169 156.9L182 157.1L194 157.0L207 157.1L219 156.6L232 156.2L245 155.8L257 155.7L270 155.3L282 155.8L295 155.9L307 156.1L320 155.6L332 156.4L345 156.8L357 156.9L370 157.5L382 157.6L395 157.5" stroke="#8c62e8" stroke-width="1.6" stroke-opacity="0.31"/>
<path d="M157 159.0L169 158.8L182 159.0L194 158.9L207 159.0L219 158.5L232 158.1L245 157.7L257 157.6L270 157.2L282 157.7L295 157.8L307 158.0L320 157.5L332 158.3L345 158.7L357 158.8L370 159.4L382 159.5L395 159.4" stroke="#7598f7" stroke-width="1.5" stroke-opacity="0.27"/>
<path d="M404 157.5L418 157.3L431 156.7L445 156.2L459 156.4L473 156.3" stroke="#8c62e8" stroke-width="1.6" stroke-opacity="0.57"/>
<path d="M404 159.4L418 159.2L431 158.6L445 158.1L459 158.3L473 158.2" stroke="#7598f7" stroke-width="1.5" stroke-opacity="0.37"/>
<path d="M475 156.4L487 156.0L499 155.4L511 155.7L523 155.1L536 156.0" stroke="#8c62e8" stroke-width="1.6" stroke-opacity="0.55"/>
<path d="M475 158.3L487 157.9L499 157.3L511 157.6L523 157.0L536 157.9" stroke="#7598f7" stroke-width="1.5" stroke-opacity="0.38"/>
<path d="M542 155.3L556 156.0L570 156.5L584 157.0L598 156.6L612 157.5" stroke="#8c62e8" stroke-width="1.6" stroke-opacity="0.37"/>
<path d="M542 157.2L556 157.9L570 158.4L584 158.9L598 158.5L612 159.4" stroke="#7598f7" stroke-width="1.5" stroke-opacity="0.22"/>
<path d="M-40 165.7L-28 166.1L-15 165.7L-2 165.2L10 164.4L23 165.0L35 164.1L48 164.6" stroke="#8c62e8" stroke-width="1.6" stroke-opacity="0.61"/>
<path d="M-40 167.6L-28 168.0L-15 167.6L-2 167.1L10 166.3L23 166.9L35 166.0L48 166.5" stroke="#7598f7" stroke-width="1.5" stroke-opacity="0.44"/>
<path d="M54 164.5L67 164.8L79 165.1L91 165.0L104 165.9L116 166.3L129 166.4L141 166.7L154 166.2L166 166.8L179 165.8L191 166.0L204 165.4L216 165.4L229 165.4L241 165.1L253 164.7" stroke="#8c62e8" stroke-width="1.6" stroke-opacity="0.51"/>
<path d="M54 166.4L67 166.7L79 167.0L91 166.9L104 167.8L116 168.2L129 168.3L141 168.6L154 168.1L166 168.7L179 167.7L191 167.9L204 167.3L216 167.3L229 167.3L241 167.0L253 166.6" stroke="#7598f7" stroke-width="1.5" stroke-opacity="0.35"/>
<path d="M258 164.9L270 164.6L283 164.5L296 164.4L309 165.1L321 164.9L334 165.3L347 165.9L360 166.3" stroke="#8c62e8" stroke-width="1.6" stroke-opacity="0.34"/>
<path d="M258 166.8L270 166.5L283 166.4L296 166.3L309 167.0L321 166.8L334 167.2L347 167.8L360 168.2" stroke="#7598f7" stroke-width="1.5" stroke-opacity="0.32"/>
<path d="M369 166.4L381 165.9L393 166.1L406 165.8L418 166.5L430 166.1L442 165.8L454 165.1L466 164.9L478 164.5L490 164.8L502 165.1L515 164.4L527 164.2L539 164.5L551 165.0L563 165.8L575 166.0L587 165.9L599 165.8L612 165.9" stroke="#8c62e8" stroke-width="1.6" stroke-opacity="0.58"/>
<path d="M369 168.3L381 167.8L393 168.0L406 167.7L418 168.4L430 168.0L442 167.7L454 167.0L466 166.8L478 166.4L490 166.7L502 167.0L515 166.3L527 166.1L539 166.4L551 166.9L563 167.7L575 167.9L587 167.8L599 167.7L612 167.8" stroke="#7598f7" stroke-width="1.5" stroke-opacity="0.35"/>
<path d="M-5 179.1L7 179.2L19 179.8L31 180.0L43 180.0L55 180.3L67 180.3L79 181.5L91 181.4L103 181.7L115 181.7L127 181.1L139 181.2" stroke="#8c62e8" stroke-width="1.6" stroke-opacity="0.62"/>
<path d="M-5 181.0L7 181.1L19 181.7L31 181.9L43 181.9L55 182.2L67 182.2L79 183.4L91 183.3L103 183.6L115 183.6L127 183.0L139 183.1" stroke="#7598f7" stroke-width="1.5" stroke-opacity="0.44"/>
<path d="M227 179.2L241 179.7L255 179.7L268 179.6L282 180.8L296 181.0" stroke="#8c62e8" stroke-width="1.6" stroke-opacity="0.26"/>
<path d="M227 181.1L241 181.6L255 181.6L268 181.5L282 182.7L296 182.9" stroke="#7598f7" stroke-width="1.5" stroke-opacity="0.19"/>
<path d="M305 180.8L317 181.3L329 181.6L341 181.3L354 181.3L366 180.7L378 180.6L390 180.9L402 180.1L414 179.6L426 179.8L438 179.2L451 179.2L463 179.5" stroke="#8c62e8" stroke-width="1.6" stroke-opacity="0.28"/>
<path d="M305 182.7L317 183.2L329 183.5L341 183.2L354 183.2L366 182.6L378 182.5L390 182.8L402 182.0L414 181.5L426 181.7L438 181.1L451 181.1L463 181.4" stroke="#7598f7" stroke-width="1.5" stroke-opacity="0.22"/>
<path d="M470 179.8L482 179.3L495 179.9L507 180.1L519 180.7L532 181.0L544 180.8L557 181.4L569 181.5L582 181.2L594 180.7L606 181.3" stroke="#8c62e8" stroke-width="1.6" stroke-opacity="0.28"/>
<path d="M470 181.7L482 181.2L495 181.8L507 182.0L519 182.6L532 182.9L544 182.7L557 183.3L569 183.4L582 183.1L594 182.6L606 183.2" stroke="#7598f7" stroke-width="1.5" stroke-opacity="0.22"/>
<path d="M-46 196.2L-34 196.4L-21 195.6L-9 195.6L4 196.2L16 195.8L29 194.7L42 194.4L54 194.4L67 194.9L79 194.1L92 194.6L104 194.9L117 194.8L129 195.4L142 195.0L155 195.2L167 195.4" stroke="#8c62e8" stroke-width="1.6" stroke-opacity="0.62"/>
<path d="M-46 198.1L-34 198.3L-21 197.5L-9 197.5L4 198.1L16 197.7L29 196.6L42 196.3L54 196.3L67 196.8L79 196.0L92 196.5L104 196.8L117 196.7L129 197.3L142 196.9L155 197.1L167 197.3" stroke="#7598f7" stroke-width="1.5" stroke-opacity="0.53"/>
<path d="M177 196.3L189 195.8L201 196.2L214 195.7L226 196.2L238 196.1L250 195.8L263 194.6L275 195.2L287 194.7L299 194.8L312 194.4L324 194.5L336 194.6L348 195.0L361 194.5L373 194.8" stroke="#8c62e8" stroke-width="1.6" stroke-opacity="0.33"/>
<path d="M177 198.2L189 197.7L201 198.1L214 197.6L226 198.1L238 198.0L250 197.7L263 196.5L275 197.1L287 196.6L299 196.7L312 196.3L324 196.4L336 196.5L348 196.9L361 196.4L373 196.7" stroke="#7598f7" stroke-width="1.5" stroke-opacity="0.26"/>
<path d="M377 194.9L391 196.0L405 196.2L419 196.1" stroke="#8c62e8" stroke-width="1.6" stroke-opacity="0.59"/>
<path d="M377 196.8L391 197.9L405 198.1L419 198.0" stroke="#7598f7" stroke-width="1.5" stroke-opacity="0.35"/>
<path d="M421 196.6L433 196.2L445 196.0L457 195.5L470 196.0L482 195.8L494 195.5L506 194.5L518 194.5L531 194.3L543 194.6L555 194.0" stroke="#8c62e8" stroke-width="1.6" stroke-opacity="0.30"/>
<path d="M421 198.5L433 198.1L445 197.9L457 197.4L470 197.9L482 197.7L494 197.4L506 196.4L518 196.4L531 196.2L543 196.5L555 195.9" stroke="#7598f7" stroke-width="1.5" stroke-opacity="0.24"/>
<path d="M-56 200.7L-43 200.9L-31 201.1L-19 201.6L-7 201.9L5 202.4L17 202.4L29 202.5L41 202.6L53 202.4L65 202.1L77 201.2L89 201.5L101 201.4L113 200.7L125 201.0L137 200.1" stroke="#8c62e8" stroke-width="1.6" stroke-opacity="0.52"/>
<path d="M-56 202.6L-43 202.8L-31 203.0L-19 203.5L-7 203.8L5 204.3L17 204.3L29 204.4L41 204.5L53 204.3L65 204.0L77 203.1L89 203.4L101 203.3L113 202.6L125 202.9L137 202.0" stroke="#7598f7" stroke-width="1.5" stroke-opacity="0.48"/>
<path d="M144 200.3L158 200.3L171 200.2L185 200.8L199 201.6L212 201.6L226 202.2L239 202.3" stroke="#8c62e8" stroke-width="1.6" stroke-opacity="0.39"/>
<path d="M144 202.2L158 202.2L171 202.1L185 202.7L199 203.5L212 203.5L226 204.1L239 204.2" stroke="#7598f7" stroke-width="1.5" stroke-opacity="0.34"/>
<path d="M320 201.3L332 200.6L345 200.5L357 201.0L370 200.9L382 200.2L395 200.8L407 200.9L420 201.3" stroke="#8c62e8" stroke-width="1.6" stroke-opacity="0.36"/>
<path d="M320 203.2L332 202.5L345 202.4L357 202.9L370 202.8L382 202.1L395 202.7L407 202.8L420 203.2" stroke="#7598f7" stroke-width="1.5" stroke-opacity="0.31"/>
<path d="M421 201.0L433 201.1L446 201.5L458 202.2L470 201.7L483 202.2L495 202.4L507 202.2L520 202.5L532 201.7L544 202.0L556 201.5L569 201.5L581 200.3L593 200.3L606 200.2L618 200.8L630 200.0L643 200.5" stroke="#8c62e8" stroke-width="1.6" stroke-opacity="0.39"/>
<path d="M421 202.9L433 203.0L446 203.4L458 204.1L470 203.6L483 204.1L495 204.3L507 204.1L520 204.4L532 203.6L544 203.9L556 203.4L569 203.4L581 202.2L593 202.2L606 202.1L618 202.7L630 201.9L643 202.4" stroke="#7598f7" stroke-width="1.5" stroke-opacity="0.33"/>
<path d="M-19 210.4L-7 210.3L5 209.9L17 210.6L29 210.1L41 210.4L53 211.3L65 211.2L77 211.5L89 211.8L101 212.0L113 212.3L125 212.0L137 211.7L149 211.6L161 211.4L173 211.5L185 211.0" stroke="#8c62e8" stroke-width="1.6" stroke-opacity="0.59"/>
<path d="M-19 212.3L-7 212.2L5 211.8L17 212.5L29 212.0L41 212.3L53 213.2L65 213.1L77 213.4L89 213.7L101 213.9L113 214.2L125 213.9L137 213.6L149 213.5L161 213.3L173 213.4L185 212.9" stroke="#7598f7" stroke-width="1.5" stroke-opacity="0.35"/>
<path d="M195 211.4L208 210.5L221 210.2L233 210.2L246 210.3L259 210.6L272 210.5L284 211.0L297 210.7L310 211.8L323 211.5L335 212.3L348 211.6L361 212.5L374 211.8L386 212.3" stroke="#8c62e8" stroke-width="1.6" stroke-opacity="0.37"/>
<path d="M195 213.3L208 212.4L221 212.1L233 212.1L246 212.2L259 212.5L272 212.4L284 212.9L297 212.6L310 213.7L323 213.4L335 214.2L348 213.5L361 214.4L374 213.7L386 214.2" stroke="#7598f7" stroke-width="1.5" stroke-opacity="0.32"/>
<path d="M389 212.3L403 211.3L417 211.5L431 211.1" stroke="#8c62e8" stroke-width="1.6" stroke-opacity="0.34"/>
<path d="M389 214.2L403 213.2L417 213.4L431 213.0" stroke="#7598f7" stroke-width="1.5" stroke-opacity="0.27"/>
<path d="M433 210.9L445 210.9L457 210.6L469 210.1L482 209.9L494 210.0" stroke="#8c62e8" stroke-width="1.6" stroke-opacity="0.69"/>
<path d="M433 212.8L445 212.8L457 212.5L469 212.0L482 211.8L494 211.9" stroke="#7598f7" stroke-width="1.5" stroke-opacity="0.62"/>
<path d="M504 210.2L517 211.1L530 210.9L544 211.3L557 211.7L570 211.6L584 211.9L597 212.5L610 211.9L624 211.8" stroke="#8c62e8" stroke-width="1.6" stroke-opacity="0.58"/>
<path d="M504 212.1L517 213.0L530 212.8L544 213.2L557 213.6L570 213.5L584 213.8L597 214.4L610 213.8L624 213.7" stroke="#7598f7" stroke-width="1.5" stroke-opacity="0.49"/>
<path d="M-37 220.5L-25 219.7L-13 220.2L-1 220.3L11 219.4L23 219.0L35 219.1L48 218.5L60 218.6L72 218.6L84 217.9L96 218.0L108 218.4L120 218.3L132 218.6L144 219.1" stroke="#8c62e8" stroke-width="1.6" stroke-opacity="0.46"/>
<path d="M-37 222.4L-25 221.6L-13 222.1L-1 222.2L11 221.3L23 220.9L35 221.0L48 220.4L60 220.5L72 220.5L84 219.8L96 219.9L108 220.3L120 220.2L132 220.5L144 221.0" stroke="#7598f7" stroke-width="1.5" stroke-opacity="0.28"/>
<path d="M148 219.3L161 219.1L174 219.5L187 220.3L200 220.2L213 220.5L226 220.5L239 220.2L252 219.1L265 219.6L278 218.9L291 218.4" stroke="#8c62e8" stroke-width="1.6" stroke-opacity="0.67"/>
<path d="M148 221.2L161 221.0L174 221.4L187 222.2L200 222.1L213 222.4L226 222.4L239 222.1L252 221.0L265 221.5L278 220.8L291 220.3" stroke="#7598f7" stroke-width="1.5" stroke-opacity="0.42"/>
<path d="M328 218.8L343 218.4L357 218.9L372 218.6L386 219.3" stroke="#8c62e8" stroke-width="1.6" stroke-opacity="0.37"/>
<path d="M328 220.7L343 220.3L357 220.8L372 220.5L386 221.2" stroke="#7598f7" stroke-width="1.5" stroke-opacity="0.25"/>
<path d="M393 220.0L406 219.8L419 219.7L433 219.6L446 220.3L459 220.0L473 219.3L486 219.5L499 219.4L512 218.9" stroke="#8c62e8" stroke-width="1.6" stroke-opacity="0.30"/>
<path d="M393 221.9L406 221.7L419 221.6L433 221.5L446 222.2L459 221.9L473 221.2L486 221.4L499 221.3L512 220.8" stroke="#7598f7" stroke-width="1.5" stroke-opacity="0.20"/>
<path d="M518 219.0L531 219.0L543 218.6L555 218.7L567 218.3L579 218.9L592 218.4L604 218.8L616 219.4L628 220.0L641 219.4L653 219.7L665 219.7L677 220.1L689 219.7L702 219.5" stroke="#8c62e8" stroke-width="1.6" stroke-opacity="0.32"/>
<path d="M518 220.9L531 220.9L543 220.5L555 220.6L567 220.2L579 220.8L592 220.3L604 220.7L616 221.3L628 221.9L641 221.3L653 221.6L665 221.6L677 222.0L689 221.6L702 221.4" stroke="#7598f7" stroke-width="1.5" stroke-opacity="0.27"/>
<path d="M-19 228.4L-7 228.8L6 229.5L18 229.3L30 230.0L43 229.8L55 229.5L68 230.0L80 229.3L93 229.8L105 229.0L118 228.5L130 228.9L142 228.0L155 227.9L167 227.8L180 228.1L192 227.6L205 228.2L217 228.2L229 229.2" stroke="#8c62e8" stroke-width="1.6" stroke-opacity="0.35"/>
<path d="M-19 230.3L-7 230.7L6 231.4L18 231.2L30 231.9L43 231.7L55 231.4L68 231.9L80 231.2L93 231.7L105 230.9L118 230.4L130 230.8L142 229.9L155 229.8L167 229.7L180 230.0L192 229.5L205 230.1L217 230.1L229 231.1" stroke="#7598f7" stroke-width="1.5" stroke-opacity="0.20"/>
<path d="M232 229.1L245 228.8L257 229.2L270 229.3L283 230.2L296 229.4L308 229.3L321 229.4L334 229.2L346 229.2L359 228.1L372 228.0" stroke="#8c62e8" stroke-width="1.6" stroke-opacity="0.50"/>
<path d="M232 231.0L245 230.7L257 231.1L270 231.2L283 232.1L296 231.3L308 231.2L321 231.3L334 231.1L346 231.1L359 230.0L372 229.9" stroke="#7598f7" stroke-width="1.5" stroke-opacity="0.31"/>
<path d="M376 228.3L389 228.4L402 228.4L415 227.8L428 228.6L441 228.3L454 228.2L467 229.4L480 228.9L493 229.0L506 229.5" stroke="#8c62e8" stroke-width="1.6" stroke-opacity="0.65"/>
<path d="M376 230.2L389 230.3L402 230.3L415 229.7L428 230.5L441 230.2L454 230.1L467 231.3L480 230.8L493 230.9L506 231.4" stroke="#7598f7" stroke-width="1.5" stroke-opacity="0.43"/>
<path d="M-28 237.8L-16 237.4L-4 237.6L8 238.2L20 238.4L32 238.9L44 239.2L56 239.6L68 239.0L81 239.1L93 239.9L105 239.6L117 239.0L129 239.3L141 238.6L153 238.3L165 238.2L177 238.1L189 238.0" stroke="#8c62e8" stroke-width="1.6" stroke-opacity="0.54"/>
<path d="M-28 239.7L-16 239.3L-4 239.5L8 240.1L20 240.3L32 240.8L44 241.1L56 241.5L68 240.9L81 241.0L93 241.8L105 241.5L117 240.9L129 241.2L141 240.5L153 240.2L165 240.1L177 240.0L189 239.9" stroke="#7598f7" stroke-width="1.5" stroke-opacity="0.32"/>
<path d="M196 238.1L209 237.2L222 237.8L235 238.1L248 238.4L261 238.6L274 238.5L287 239.5L300 239.6L313 239.2L326 239.5L339 239.9" stroke="#8c62e8" stroke-width="1.6" stroke-opacity="0.55"/>
<path d="M196 240.0L209 239.1L222 239.7L235 240.0L248 240.3L261 240.5L274 240.4L287 241.4L300 241.5L313 241.1L326 241.4L339 241.8" stroke="#7598f7" stroke-width="1.5" stroke-opacity="0.35"/>
<path d="M349 239.6L361 239.0L374 239.0L387 238.8L399 237.9L412 237.7L424 237.5L437 237.5L449 237.3L462 237.5L474 238.0L487 238.2L499 238.2L512 239.0L524 239.6L537 239.5L549 239.4L562 239.7L574 239.4L587 238.9" stroke="#8c62e8" stroke-width="1.6" stroke-opacity="0.35"/>
<path d="M349 241.5L361 240.9L374 240.9L387 240.7L399 239.8L412 239.6L424 239.4L437 239.4L449 239.2L462 239.4L474 239.9L487 240.1L499 240.1L512 240.9L524 241.5L537 241.4L549 241.3L562 241.6L574 241.3L587 240.8" stroke="#7598f7" stroke-width="1.5" stroke-opacity="0.26"/>
<path d="M-38 245.4L-26 245.5L-13 245.8L-1 246.3L11 245.8L24 246.7L36 246.5L48 246.6L60 247.3L73 247.1L85 247.2L97 247.1L109 246.5L122 245.9L134 245.4L146 245.6L159 245.6L171 245.0" stroke="#8c62e8" stroke-width="1.6" stroke-opacity="0.63"/>
<path d="M-38 247.3L-26 247.4L-13 247.7L-1 248.2L11 247.7L24 248.6L36 248.4L48 248.5L60 249.2L73 249.0L85 249.1L97 249.0L109 248.4L122 247.8L134 247.3L146 247.5L159 247.5L171 246.9" stroke="#7598f7" stroke-width="1.5" stroke-opacity="0.36"/>
<path d="M173 244.9L185 244.9L197 245.4L209 245.9L221 245.1L233 245.5L245 246.6L257 246.9L269 246.3L281 246.7L293 247.0L305 246.8L317 246.8L329 246.7L342 246.2L354 245.7L366 245.5" stroke="#8c62e8" stroke-width="1.6" stroke-opacity="0.25"/>
<path d="M173 246.8L185 246.8L197 247.3L209 247.8L221 247.0L233 247.4L245 248.5L257 248.8L269 248.2L281 248.6L293 248.9L305 248.7L317 248.7L329 248.6L342 248.1L354 247.6L366 247.4" stroke="#7598f7" stroke-width="1.5" stroke-opacity="0.15"/>
<path d="M372 246.0L384 245.7L396 245.1L408 245.2L420 244.9L432 245.7L444 245.5L456 245.2L469 245.6L481 246.4L493 246.4L505 247.0L517 246.6L529 247.3L541 247.3L553 246.4L565 246.7" stroke="#8c62e8" stroke-width="1.6" stroke-opacity="0.37"/>
<path d="M372 247.9L384 247.6L396 247.0L408 247.1L420 246.8L432 247.6L444 247.4L456 247.1L469 247.5L481 248.3L493 248.3L505 248.9L517 248.5L529 249.2L541 249.2L553 248.3L565 248.6" stroke="#7598f7" stroke-width="1.5" stroke-opacity="0.23"/>
<path d="M-46 258.3L-34 258.6L-21 259.3L-9 259.1L3 259.9L16 259.7L28 259.8L41 260.0L53 260.0L65 260.1L78 259.1L90 259.5L103 258.7L115 258.5L127 258.6L140 258.5" stroke="#8c62e8" stroke-width="1.6" stroke-opacity="0.50"/>
<path d="M-46 260.2L-34 260.5L-21 261.2L-9 261.0L3 261.8L16 261.6L28 261.7L41 261.9L53 261.9L65 262.0L78 261.0L90 261.4L103 260.6L115 260.4L127 260.5L140 260.4" stroke="#7598f7" stroke-width="1.5" stroke-opacity="0.40"/>
<path d="M176 258.2L188 258.3L200 258.7L212 259.5L224 259.9L236 260.0L249 260.4L261 260.4L273 259.9L285 259.8" stroke="#8c62e8" stroke-width="1.6" stroke-opacity="0.55"/>
<path d="M176 260.1L188 260.2L200 260.6L212 261.4L224 261.8L236 261.9L249 262.3L261 262.3L273 261.8L285 261.7" stroke="#7598f7" stroke-width="1.5" stroke-opacity="0.46"/>
<path d="M291 260.0L306 259.3L321 259.8L335 259.4L350 258.6" stroke="#8c62e8" stroke-width="1.6" stroke-opacity="0.27"/>
<path d="M291 261.9L306 261.2L321 261.7L335 261.3L350 260.5" stroke="#7598f7" stroke-width="1.5" stroke-opacity="0.17"/>
<path d="M355 258.8L368 258.4L381 258.6L394 257.9L407 258.0L420 258.6L433 258.9L446 259.0L459 259.7L471 259.5L484 259.8L497 260.1L510 260.3" stroke="#8c62e8" stroke-width="1.6" stroke-opacity="0.41"/>
<path d="M355 260.7L368 260.3L381 260.5L394 259.8L407 259.9L420 260.5L433 260.8L446 260.9L459 261.6L471 261.4L484 261.7L497 262.0L510 262.2" stroke="#7598f7" stroke-width="1.5" stroke-opacity="0.35"/>
<path d="M515 260.2L527 259.5L539 259.6L551 259.5L563 258.9L576 258.4L588 259.1L600 258.8L612 257.9L624 258.3L637 258.5L649 258.4L661 258.4L673 259.4L685 259.7L698 259.6L710 259.5L722 259.9L734 259.7L746 260.5L759 259.5" stroke="#8c62e8" stroke-width="1.6" stroke-opacity="0.67"/>
<path d="M515 262.1L527 261.4L539 261.5L551 261.4L563 260.8L576 260.3L588 261.0L600 260.7L612 259.8L624 260.2L637 260.4L649 260.3L661 260.3L673 261.3L685 261.6L698 261.5L710 261.4L722 261.8L734 261.6L746 262.4L759 261.4" stroke="#7598f7" stroke-width="1.5" stroke-opacity="0.45"/>
<path d="M-56 265.4L-44 265.7L-32 266.6L-20 266.5L-7 266.7L5 266.6L17 266.8L29 267.5L41 266.5L53 266.5L65 266.7L77 266.6L89 266.3L101 265.6" stroke="#8c62e8" stroke-width="1.6" stroke-opacity="0.62"/>
<path d="M-56 267.3L-44 267.6L-32 268.5L-20 268.4L-7 268.6L5 268.5L17 268.7L29 269.4L41 268.4L53 268.4L65 268.6L77 268.5L89 268.2L101 267.5" stroke="#7598f7" stroke-width="1.5" stroke-opacity="0.58"/>
<path d="M104 265.8L117 265.0L130 265.0L143 265.7L156 265.0L169 265.9L182 265.7L195 265.9L208 266.2L221 266.7L234 267.4L246 266.7" stroke="#8c62e8" stroke-width="1.6" stroke-opacity="0.57"/>
<path d="M104 267.7L117 266.9L130 266.9L143 267.6L156 266.9L169 267.8L182 267.6L195 267.8L208 268.1L221 268.6L234 269.3L246 268.6" stroke="#7598f7" stroke-width="1.5" stroke-opacity="0.51"/>
<path d="M248 266.7L261 267.0L274 267.2L286 267.1L299 266.5L312 265.6L325 266.1L337 265.7L350 265.8L363 265.7L376 265.1L388 265.7L401 265.9L414 265.6L427 266.0L439 266.3L452 266.6" stroke="#8c62e8" stroke-width="1.6" stroke-opacity="0.40"/>
<path d="M248 268.6L261 268.9L274 269.1L286 269.0L299 268.4L312 267.5L325 268.0L337 267.6L350 267.7L363 267.6L376 267.0L388 267.6L401 267.8L414 267.5L427 267.9L439 268.2L452 268.5" stroke="#7598f7" stroke-width="1.5" stroke-opacity="0.28"/>
<path d="M454 266.9L466 267.3L478 267.3L490 266.8L502 267.4L514 267.1L526 267.0L538 266.5L550 266.2L562 266.0L574 265.2L586 265.5L598 265.1L610 265.6L622 265.0L634 265.6L646 265.7L658 266.5L670 266.3L682 267.0L694 267.2" stroke="#8c62e8" stroke-width="1.6" stroke-opacity="0.43"/>
<path d="M454 268.8L466 269.2L478 269.2L490 268.7L502 269.3L514 269.0L526 268.9L538 268.4L550 268.1L562 267.9L574 267.1L586 267.4L598 267.0L610 267.5L622 266.9L634 267.5L646 267.6L658 268.4L670 268.2L682 268.9L694 269.1" stroke="#7598f7" stroke-width="1.5" stroke-opacity="0.39"/>
<path d="M-19 278.5L-7 278.2L6 277.9L19 278.2L31 278.3" stroke="#8c62e8" stroke-width="1.6" stroke-opacity="0.64"/>
<path d="M-19 280.4L-7 280.1L6 279.8L19 280.1L31 280.2" stroke="#7598f7" stroke-width="1.5" stroke-opacity="0.58"/>
<path d="M35 277.8L48 277.7L62 278.7L75 278.4L89 278.6L102 278.9L116 279.8L129 279.4" stroke="#8c62e8" stroke-width="1.6" stroke-opacity="0.30"/>
<path d="M35 279.7L48 279.6L62 280.6L75 280.3L89 280.5L102 280.8L116 281.7L129 281.3" stroke="#7598f7" stroke-width="1.5" stroke-opacity="0.22"/>
<path d="M137 279.9L150 280.1L162 279.6L175 279.8L187 279.3L200 278.6L212 278.9L225 278.3L237 277.7L250 278.1L262 278.3L275 278.1L287 278.3L300 278.5L312 279.2L325 279.3L337 279.1L350 279.5L362 279.6L375 280.2L387 279.9" stroke="#8c62e8" stroke-width="1.6" stroke-opacity="0.39"/>
<path d="M137 281.8L150 282.0L162 281.5L175 281.7L187 281.2L200 280.5L212 280.8L225 280.2L237 279.6L250 280.0L262 280.2L275 280.0L287 280.2L300 280.4L312 281.1L325 281.2L337 281.0L350 281.4L362 281.5L375 282.1L387 281.8" stroke="#7598f7" stroke-width="1.5" stroke-opacity="0.23"/>
<path d="M410 279.5L422 279.0L434 278.3L447 278.5L459 278.5L471 278.3L483 277.8L495 277.7L507 278.3L519 278.6L532 278.2L544 279.2L556 279.6L568 279.3L580 279.5" stroke="#8c62e8" stroke-width="1.6" stroke-opacity="0.44"/>
<path d="M410 281.4L422 280.9L434 280.2L447 280.4L459 280.4L471 280.2L483 279.7L495 279.6L507 280.2L519 280.5L532 280.1L544 281.1L556 281.5L568 281.2L580 281.4" stroke="#7598f7" stroke-width="1.5" stroke-opacity="0.37"/>
<path d="M-40 287.2L-27 287.1L-13 286.4L0 287.1L14 287.2L27 286.9L41 287.4" stroke="#8c62e8" stroke-width="1.6" stroke-opacity="0.50"/>
<path d="M-40 289.1L-27 289.0L-13 288.3L0 289.0L14 289.1L27 288.8L41 289.3" stroke="#7598f7" stroke-width="1.5" stroke-opacity="0.31"/>
<path d="M105 288.3L117 288.9L129 288.2L141 287.9L154 288.1L166 288.3L178 288.0L190 287.8L202 287.0L215 287.3L227 286.8L239 286.3L251 286.9L263 287.2L276 287.0L288 287.5L300 287.5L312 287.8" stroke="#8c62e8" stroke-width="1.6" stroke-opacity="0.64"/>
<path d="M105 290.2L117 290.8L129 290.1L141 289.8L154 290.0L166 290.2L178 289.9L190 289.7L202 288.9L215 289.2L227 288.7L239 288.2L251 288.8L263 289.1L276 288.9L288 289.4L300 289.4L312 289.7" stroke="#7598f7" stroke-width="1.5" stroke-opacity="0.46"/>
<path d="M317 287.9L329 288.5L341 288.7L353 288.2L365 288.2L377 288.3" stroke="#8c62e8" stroke-width="1.6" stroke-opacity="0.25"/>
<path d="M317 289.8L329 290.4L341 290.6L353 290.1L365 290.1L377 290.2" stroke="#7598f7" stroke-width="1.5" stroke-opacity="0.16"/>
<path d="M386 288.4L398 288.1L410 287.8L422 287.5L434 286.8L446 287.2L458 287.1L471 286.2" stroke="#8c62e8" stroke-width="1.6" stroke-opacity="0.51"/>
<path d="M386 290.3L398 290.0L410 289.7L422 289.4L434 288.7L446 289.1L458 289.0L471 288.1" stroke="#7598f7" stroke-width="1.5" stroke-opacity="0.48"/>
<path d="M471 286.9L485 286.4L499 286.9L513 287.4L527 288.1" stroke="#8c62e8" stroke-width="1.6" stroke-opacity="0.61"/>
<path d="M471 288.8L485 288.3L499 288.8L513 289.3L527 290.0" stroke="#7598f7" stroke-width="1.5" stroke-opacity="0.42"/>
<path d="M529 287.5L543 288.1L557 288.0L571 288.1L585 288.2L599 288.0L613 287.9" stroke="#8c62e8" stroke-width="1.6" stroke-opacity="0.32"/>
<path d="M529 289.4L543 290.0L557 289.9L571 290.0L585 290.1L599 289.9L613 289.8" stroke="#7598f7" stroke-width="1.5" stroke-opacity="0.22"/>
<path d="M-34 297.1L-21 297.0L-9 297.6L3 297.5L15 297.8L28 298.0L40 298.8L52 299.2L64 298.7L77 298.6L89 298.5L101 298.2L113 298.3" stroke="#8c62e8" stroke-width="1.6" stroke-opacity="0.68"/>
<path d="M-34 299.0L-21 298.9L-9 299.5L3 299.4L15 299.7L28 299.9L40 300.7L52 301.1L64 300.6L77 300.5L89 300.4L101 300.1L113 300.2" stroke="#7598f7" stroke-width="1.5" stroke-opacity="0.48"/>
<path d="M122 298.3L135 297.8L148 297.2L160 297.3L173 297.4L186 296.9L199 297.0L211 297.1L224 297.6L237 298.0L250 298.4L262 298.9L275 298.3L288 298.6" stroke="#8c62e8" stroke-width="1.6" stroke-opacity="0.25"/>
<path d="M122 300.2L135 299.7L148 299.1L160 299.2L173 299.3L186 298.8L199 298.9L211 299.0L224 299.5L237 299.9L250 300.3L262 300.8L275 300.2L288 300.5" stroke="#7598f7" stroke-width="1.5" stroke-opacity="0.23"/>
<path d="M294 299.2L306 298.8L319 298.5L332 298.1L344 297.8L357 298.2L369 297.9L382 296.8L395 296.9L407 297.0L420 297.0L432 297.0L445 297.7L458 297.4L470 297.9L483 298.6" stroke="#8c62e8" stroke-width="1.6" stroke-opacity="0.40"/>
<path d="M294 301.1L306 300.7L319 300.4L332 300.0L344 299.7L357 300.1L369 299.8L382 298.7L395 298.8L407 298.9L420 298.9L432 298.9L445 299.6L458 299.3L470 299.8L483 300.5" stroke="#7598f7" stroke-width="1.5" stroke-opacity="0.32"/>
<path d="M486 298.5L499 298.3L511 298.6L524 298.7L536 298.6L549 299.1L561 298.5L574 298.0L586 297.8L599 297.9L611 297.0" stroke="#8c62e8" stroke-width="1.6" stroke-opacity="0.52"/>
<path d="M486 300.4L499 300.2L511 300.5L524 300.6L536 300.5L549 301.0L561 300.4L574 299.9L586 299.7L599 299.8L611 298.9" stroke="#7598f7" stroke-width="1.5" stroke-opacity="0.43"/>
<path d="M-12 304.7L1 305.4L14 305.5L27 305.7L40 305.7L53 305.1L66 305.2L78 304.1" stroke="#8c62e8" stroke-width="1.6" stroke-opacity="0.28"/>
<path d="M-12 306.6L1 307.3L14 307.4L27 307.6L40 307.6L53 307.0L66 307.1L78 306.0" stroke="#7598f7" stroke-width="1.5" stroke-opacity="0.25"/>
<path d="M80 304.4L92 303.8L104 304.3L117 304.0L129 303.7L141 304.0L153 303.1L165 303.3L177 303.6L189 303.7L201 304.7L213 304.9L225 304.6L237 304.9L249 305.0L261 305.4L273 305.4L285 305.5" stroke="#8c62e8" stroke-width="1.6" stroke-opacity="0.64"/>
<path d="M80 306.3L92 305.7L104 306.2L117 305.9L129 305.6L141 305.9L153 305.0L165 305.2L177 305.5L189 305.6L201 306.6L213 306.8L225 306.5L237 306.8L249 306.9L261 307.3L273 307.3L285 307.4" stroke="#7598f7" stroke-width="1.5" stroke-opacity="0.44"/>
<path d="M340 303.6L352 304.1L365 304.0L378 303.7L390 303.3L403 303.5L415 303.7L428 304.2L441 304.9L453 304.5L466 305.2" stroke="#8c62e8" stroke-width="1.6" stroke-opacity="0.36"/>
<path d="M340 305.5L352 306.0L365 305.9L378 305.6L390 305.2L403 305.4L415 305.6L428 306.1L441 306.8L453 306.4L466 307.1" stroke="#7598f7" stroke-width="1.5" stroke-opacity="0.30"/>
<path d="M470 305.2L483 305.7L495 305.4L508 305.0L520 304.9L533 305.2L546 304.8L558 304.6L571 303.9L583 303.3L596 303.2L609 303.4L621 303.8L634 303.3L646 304.3L659 304.6L672 304.6L684 304.4" stroke="#8c62e8" stroke-width="1.6" stroke-opacity="0.51"/>
<path d="M470 307.1L483 307.6L495 307.3L508 306.9L520 306.8L533 307.1L546 306.7L558 306.5L571 305.8L583 305.2L596 305.1L609 305.3L621 305.7L634 305.2L646 306.2L659 306.5L672 306.5L684 306.3" stroke="#7598f7" stroke-width="1.5" stroke-opacity="0.44"/>
<path d="M-16 316.7L-4 316.2L9 315.7L21 315.4L34 315.0L46 315.4L59 315.1L72 315.0L84 315.0L97 315.2L109 315.1L122 315.0L134 315.7L147 315.5L160 316.2L172 315.9L185 316.8L197 316.4L210 316.2L222 316.7L235 315.6" stroke="#8c62e8" stroke-width="1.6" stroke-opacity="0.68"/>
<path d="M-16 318.6L-4 318.1L9 317.6L21 317.3L34 316.9L46 317.3L59 317.0L72 316.9L84 316.9L97 317.1L109 317.0L122 316.9L134 317.6L147 317.4L160 318.1L172 317.8L185 318.7L197 318.3L210 318.1L222 318.6L235 317.5" stroke="#7598f7" stroke-width="1.5" stroke-opacity="0.63"/>
<path d="M236 316.4L249 315.8L261 315.3L273 315.5L285 314.5L297 315.0L310 314.3L322 314.5L334 314.4L346 315.4L358 315.2L371 315.8L383 315.6L395 316.3L407 316.5L419 316.0L432 316.4L444 316.6" stroke="#8c62e8" stroke-width="1.6" stroke-opacity="0.51"/>
<path d="M236 318.3L249 317.7L261 317.2L273 317.4L285 316.4L297 316.9L310 316.2L322 316.4L334 316.3L346 317.3L358 317.1L371 317.7L383 317.5L395 318.2L407 318.4L419 317.9L432 318.3L444 318.5" stroke="#7598f7" stroke-width="1.5" stroke-opacity="0.32"/>
<path d="M447 316.8L459 316.7L471 315.8L483 315.7L495 315.6L507 315.3L519 314.8L532 315.1L544 314.6L556 315.1L568 314.8" stroke="#8c62e8" stroke-width="1.6" stroke-opacity="0.66"/>
<path d="M447 318.7L459 318.6L471 317.7L483 317.6L495 317.5L507 317.2L519 316.7L532 317.0L544 316.5L556 317.0L568 316.7" stroke="#7598f7" stroke-width="1.5" stroke-opacity="0.40"/>
<path d="M-57 326.4L-45 326.9L-32 326.8L-20 326.9L-8 327.7L4 327.2L17 328.0L29 327.8L41 328.8L53 328.9L66 328.1L78 328.4L90 328.3L102 328.3" stroke="#8c62e8" stroke-width="1.6" stroke-opacity="0.58"/>
<path d="M-57 328.3L-45 328.8L-32 328.7L-20 328.8L-8 329.6L4 329.1L17 329.9L29 329.7L41 330.7L53 330.8L66 330.0L78 330.3L90 330.2L102 330.2" stroke="#7598f7" stroke-width="1.5" stroke-opacity="0.49"/>
<path d="M112 328.2L125 327.1L138 326.9L152 327.0L165 326.7L179 326.4L192 327.3" stroke="#8c62e8" stroke-width="1.6" stroke-opacity="0.31"/>
<path d="M112 330.1L125 329.0L138 328.8L152 328.9L165 328.6L179 328.3L192 329.2" stroke="#7598f7" stroke-width="1.5" stroke-opacity="0.23"/>
<path d="M195 327.3L207 327.2L219 327.8L231 327.8L243 328.0L255 328.2L267 328.7L279 328.4L291 328.2L303 329.0L315 328.7L327 328.4L339 328.2L351 327.4L363 327.4L375 327.5L387 327.4L399 327.2L412 326.4L424 327.0L436 327.0" stroke="#8c62e8" stroke-width="1.6" stroke-opacity="0.35"/>
<path d="M195 329.2L207 329.1L219 329.7L231 329.7L243 329.9L255 330.1L267 330.6L279 330.3L291 330.1L303 330.9L315 330.6L327 330.3L339 330.1L351 329.3L363 329.3L375 329.4L387 329.3L399 329.1L412 328.3L424 328.9L436 328.9" stroke="#7598f7" stroke-width="1.5" stroke-opacity="0.25"/>
<path d="M437 326.8L450 327.1L463 327.6L476 328.1L489 328.3L502 328.1L515 328.9L528 328.4L541 329.0L554 328.8L567 327.7L580 327.8" stroke="#8c62e8" stroke-width="1.6" stroke-opacity="0.47"/>
<path d="M437 328.7L450 329.0L463 329.5L476 330.0L489 330.2L502 330.0L515 330.8L528 330.3L541 330.9L554 330.7L567 329.6L580 329.7" stroke="#7598f7" stroke-width="1.5" stroke-opacity="0.44"/>
<path d="M-58 336.4L-45 336.6L-31 337.3L-18 337.3L-4 337.2L9 337.8" stroke="#8c62e8" stroke-width="1.6" stroke-opacity="0.38"/>
<path d="M-58 338.3L-45 338.5L-31 339.2L-18 339.2L-4 339.1L9 339.7" stroke="#7598f7" stroke-width="1.5" stroke-opacity="0.30"/>
<path d="M18 337.5L30 337.1L43 337.5L55 336.6L68 337.0L80 335.8L93 335.5L105 335.8L118 335.3L130 335.6L143 335.3L155 336.2L168 336.3L180 336.6L193 337.1L205 337.5" stroke="#8c62e8" stroke-width="1.6" stroke-opacity="0.41"/>
<path d="M18 339.4L30 339.0L43 339.4L55 338.5L68 338.9L80 337.7L93 337.4L105 337.7L118 337.2L130 337.5L143 337.2L155 338.1L168 338.2L180 338.5L193 339.0L205 339.4" stroke="#7598f7" stroke-width="1.5" stroke-opacity="0.34"/>
<path d="M205 337.4L218 337.0L230 337.4L243 336.9L256 337.3" stroke="#8c62e8" stroke-width="1.6" stroke-opacity="0.44"/>
<path d="M205 339.3L218 338.9L230 339.3L243 338.8L256 339.2" stroke="#7598f7" stroke-width="1.5" stroke-opacity="0.40"/>
<path d="M264 336.9L278 337.3L293 336.3L307 336.8" stroke="#8c62e8" stroke-width="1.6" stroke-opacity="0.34"/>
<path d="M264 338.8L278 339.2L293 338.2L307 338.7" stroke="#7598f7" stroke-width="1.5" stroke-opacity="0.22"/>
<path d="M368 335.5L381 335.9L393 335.5L405 336.5L418 337.0L430 336.4L442 337.3L455 337.0L467 337.0L479 337.3" stroke="#8c62e8" stroke-width="1.6" stroke-opacity="0.68"/>
<path d="M368 337.4L381 337.8L393 337.4L405 338.4L418 338.9L430 338.3L442 339.2L455 338.9L467 338.9L479 339.2" stroke="#7598f7" stroke-width="1.5" stroke-opacity="0.56"/>
<path d="M-23 351.2L-10 350.7L3 351.1L15 350.3L28 350.2L40 350.3L53 350.5" stroke="#8c62e8" stroke-width="1.6" stroke-opacity="0.58"/>
<path d="M-23 353.1L-10 352.6L3 353.0L15 352.2L28 352.1L40 352.2L53 352.4" stroke="#7598f7" stroke-width="1.5" stroke-opacity="0.45"/>
<path d="M86 351.6L98 351.8L111 352.1L123 351.8L136 351.9L148 352.2L161 351.9L174 352.2L186 351.4L199 351.7L211 350.8L224 350.4L236 350.6" stroke="#8c62e8" stroke-width="1.6" stroke-opacity="0.51"/>
<path d="M86 353.5L98 353.7L111 354.0L123 353.7L136 353.8L148 354.1L161 353.8L174 354.1L186 353.3L199 353.6L211 352.7L224 352.3L236 352.5" stroke="#7598f7" stroke-width="1.5" stroke-opacity="0.36"/>
<path d="M244 350.9L257 350.5L269 350.6L282 351.2L295 351.1L307 351.0L320 351.2L333 351.5" stroke="#8c62e8" stroke-width="1.6" stroke-opacity="0.55"/>
<path d="M244 352.8L257 352.4L269 352.5L282 353.1L295 353.0L307 352.9L320 353.1L333 353.4" stroke="#7598f7" stroke-width="1.5" stroke-opacity="0.38"/>
<path d="M339 352.0L351 352.6L364 352.1L376 352.0L388 352.1L400 351.9L412 352.3L424 351.8L436 351.2L448 350.7L460 350.3L473 350.2" stroke="#8c62e8" stroke-width="1.6" stroke-opacity="0.39"/>
<path d="M339 353.9L351 354.5L364 354.0L376 353.9L388 354.0L400 353.8L412 354.2L424 353.7L436 353.1L448 352.6L460 352.2L473 352.1" stroke="#7598f7" stroke-width="1.5" stroke-opacity="0.35"/>
<path d="M474 350.6L487 350.4L499 350.2L512 351.0L525 351.2L537 351.3L550 351.2L563 352.0L576 352.0L588 352.4L601 351.9L614 352.7L626 351.7L639 351.7L652 351.6" stroke="#8c62e8" stroke-width="1.6" stroke-opacity="0.28"/>
<path d="M474 352.5L487 352.3L499 352.1L512 352.9L525 353.1L537 353.2L550 353.1L563 353.9L576 353.9L588 354.3L601 353.8L614 354.6L626 353.6L639 353.6L652 353.5" stroke="#7598f7" stroke-width="1.5" stroke-opacity="0.17"/>
<path d="M-40 366.8L-27 367.3L-15 367.2L-2 366.9L10 366.8L23 367.1L35 367.3L48 367.0L60 365.8L73 366.0L85 365.7L98 365.2L110 365.7L123 365.5L135 366.0L148 365.7" stroke="#8c62e8" stroke-width="1.6" stroke-opacity="0.35"/>
<path d="M-40 368.7L-27 369.2L-15 369.1L-2 368.8L10 368.7L23 369.0L35 369.2L48 368.9L60 367.7L73 367.9L85 367.6L98 367.1L110 367.6L123 367.4L135 367.9L148 367.6" stroke="#7598f7" stroke-width="1.5" stroke-opacity="0.32"/>
<path d="M206 366.7L220 367.4L234 367.5L248 367.2L262 367.4L277 366.2" stroke="#8c62e8" stroke-width="1.6" stroke-opacity="0.47"/>
<path d="M206 368.6L220 369.3L234 369.4L248 369.1L262 369.3L277 368.1" stroke="#7598f7" stroke-width="1.5" stroke-opacity="0.39"/>
<path d="M306 366.0L318 365.9L330 365.4L343 365.7L355 365.4L367 365.9L380 365.6L392 366.6L404 366.3L416 366.2" stroke="#8c62e8" stroke-width="1.6" stroke-opacity="0.27"/>
<path d="M306 367.9L318 367.8L330 367.3L343 367.6L355 367.3L367 367.8L380 367.5L392 368.5L404 368.2L416 368.1" stroke="#7598f7" stroke-width="1.5" stroke-opacity="0.16"/>
<path d="M425 367.3L437 367.3L449 366.9L461 367.2L473 367.4L485 366.6L497 366.4L509 366.5L521 366.7L533 366.6L545 365.6L557 366.0L569 365.8L581 365.9L593 365.7L605 366.2" stroke="#8c62e8" stroke-width="1.6" stroke-opacity="0.32"/>
<path d="M425 369.2L437 369.2L449 368.8L461 369.1L473 369.3L485 368.5L497 368.3L509 368.4L521 368.6L533 368.5L545 367.5L557 367.9L569 367.7L581 367.8L593 367.6L605 368.1" stroke="#7598f7" stroke-width="1.5" stroke-opacity="0.26"/>
<path d="M-29 374.9L-16 374.7L-3 374.1L9 373.8L22 373.7L35 373.5L47 373.2L60 373.4L73 373.0L85 373.5" stroke="#8c62e8" stroke-width="1.6" stroke-opacity="0.42"/>
<path d="M-29 376.8L-16 376.6L-3 376.0L9 375.7L22 375.6L35 375.4L47 375.1L60 375.3L73 374.9L85 375.4" stroke="#7598f7" stroke-width="1.5" stroke-opacity="0.28"/>
<path d="M92 373.3L105 374.2L117 374.1L130 374.3L142 374.4L155 374.8L167 375.2L180 375.4L192 375.0L205 375.1L217 374.3L229 374.3L242 373.9L254 373.5L267 373.4L279 373.6L292 373.5L304 373.0" stroke="#8c62e8" stroke-width="1.6" stroke-opacity="0.48"/>
<path d="M92 375.2L105 376.1L117 376.0L130 376.2L142 376.3L155 376.7L167 377.1L180 377.3L192 376.9L205 377.0L217 376.2L229 376.2L242 375.8L254 375.4L267 375.3L279 375.5L292 375.4L304 374.9" stroke="#7598f7" stroke-width="1.5" stroke-opacity="0.31"/>
<path d="M311 373.5L323 373.3L336 373.3L349 373.9L361 373.9L374 375.1L386 374.9L399 375.2L411 375.5L424 375.3L437 374.6L449 374.4L462 373.9L474 374.3L487 374.0L500 373.5" stroke="#8c62e8" stroke-width="1.6" stroke-opacity="0.54"/>
<path d="M311 375.4L323 375.2L336 375.2L349 375.8L361 375.8L374 377.0L386 376.8L399 377.1L411 377.4L424 377.2L437 376.5L449 376.3L462 375.8L474 376.2L487 375.9L500 375.4" stroke="#7598f7" stroke-width="1.5" stroke-opacity="0.37"/>
<path d="M504 373.8L517 373.7L529 373.2L541 373.2L554 373.3L566 374.2L578 373.7L590 373.9L603 374.3L615 375.2L627 375.3L640 374.9L652 375.4L664 375.3L676 374.6L689 374.1L701 374.4" stroke="#8c62e8" stroke-width="1.6" stroke-opacity="0.65"/>
<path d="M504 375.7L517 375.6L529 375.1L541 375.1L554 375.2L566 376.1L578 375.6L590 375.8L603 376.2L615 377.1L627 377.2L640 376.8L652 377.3L664 377.2L676 376.5L689 376.0L701 376.3" stroke="#7598f7" stroke-width="1.5" stroke-opacity="0.46"/>
<path d="M-36 384.3L-24 384.0L-12 383.4L-0 383.5L12 383.7L24 383.1L36 383.4L48 383.4L60 383.1" stroke="#8c62e8" stroke-width="1.6" stroke-opacity="0.26"/>
<path d="M-36 386.2L-24 385.9L-12 385.3L-0 385.4L12 385.6L24 385.0L36 385.3L48 385.3L60 385.0" stroke="#7598f7" stroke-width="1.5" stroke-opacity="0.14"/>
<path d="M66 383.8L79 384.2L92 383.8L105 384.5L118 384.7L132 384.7L145 384.5L158 384.8L171 385.0" stroke="#8c62e8" stroke-width="1.6" stroke-opacity="0.34"/>
<path d="M66 385.7L79 386.1L92 385.7L105 386.4L118 386.6L132 386.6L145 386.4L158 386.7L171 386.9" stroke="#7598f7" stroke-width="1.5" stroke-opacity="0.27"/>
<path d="M172 384.8L184 384.6L197 384.8L209 383.8L222 384.3L234 383.3L246 383.7L259 383.0" stroke="#8c62e8" stroke-width="1.6" stroke-opacity="0.39"/>
<path d="M172 386.7L184 386.5L197 386.7L209 385.7L222 386.2L234 385.2L246 385.6L259 384.9" stroke="#7598f7" stroke-width="1.5" stroke-opacity="0.31"/>
<path d="M259 383.0L272 383.5L284 383.3L297 384.0L310 383.3L322 383.9L335 384.0L348 384.7L360 385.1L373 385.3L386 385.1L398 384.8L411 385.1L424 384.2L436 384.0L449 384.2L462 383.6L474 383.9" stroke="#8c62e8" stroke-width="1.6" stroke-opacity="0.61"/>
<path d="M259 384.9L272 385.4L284 385.2L297 385.9L310 385.2L322 385.8L335 385.9L348 386.6L360 387.0L373 387.2L386 387.0L398 386.7L411 387.0L424 386.1L436 385.9L449 386.1L462 385.5L474 385.8" stroke="#7598f7" stroke-width="1.5" stroke-opacity="0.36"/>
<path d="M477 383.0L490 383.1L503 383.1L517 383.3" stroke="#8c62e8" stroke-width="1.6" stroke-opacity="0.29"/>
<path d="M477 384.9L490 385.0L503 385.0L517 385.2" stroke="#7598f7" stroke-width="1.5" stroke-opacity="0.19"/>
<path d="M522 383.4L534 383.5L547 383.7L559 384.5L571 384.1L583 385.0L595 384.7L607 384.8L620 385.1L632 385.0L644 384.6L656 384.1L668 384.7L681 383.8L693 383.3L705 383.6L717 383.3L729 383.0L742 383.1L754 383.7L766 383.4L778 383.7" stroke="#8c62e8" stroke-width="1.6" stroke-opacity="0.33"/>
<path d="M522 385.3L534 385.4L547 385.6L559 386.4L571 386.0L583 386.9L595 386.6L607 386.7L620 387.0L632 386.9L644 386.5L656 386.0L668 386.6L681 385.7L693 385.2L705 385.5L717 385.2L729 384.9L742 385.0L754 385.6L766 385.3L778 385.6" stroke="#7598f7" stroke-width="1.5" stroke-opacity="0.30"/>
<path d="M-20 390.9L-8 391.2L5 390.7L17 391.0L30 390.6L43 391.1L55 390.6L68 391.0L80 392.1L93 392.1L105 392.3L118 392.4" stroke="#8c62e8" stroke-width="1.6" stroke-opacity="0.43"/>
<path d="M-20 392.8L-8 393.1L5 392.6L17 392.9L30 392.5L43 393.0L55 392.5L68 392.9L80 394.0L93 394.0L105 394.2L118 394.3" stroke="#7598f7" stroke-width="1.5" stroke-opacity="0.32"/>
<path d="M120 392.1L132 392.6L144 392.1L156 392.5L168 391.8L180 391.9L192 391.4L205 391.4L217 390.7L229 390.8L241 390.8L253 390.3L265 390.5L277 391.0L289 391.1L302 391.5" stroke="#8c62e8" stroke-width="1.6" stroke-opacity="0.56"/>
<path d="M120 394.0L132 394.5L144 394.0L156 394.4L168 393.7L180 393.8L192 393.3L205 393.3L217 392.6L229 392.7L241 392.7L253 392.2L265 392.4L277 392.9L289 393.0L302 393.4" stroke="#7598f7" stroke-width="1.5" stroke-opacity="0.48"/>
<path d="M304 391.5L316 392.0L329 391.9L341 392.2L354 392.9L366 392.8L379 392.6L391 391.9L404 392.2L416 391.4L429 392.0L441 391.7" stroke="#8c62e8" stroke-width="1.6" stroke-opacity="0.62"/>
<path d="M304 393.4L316 393.9L329 393.8L341 394.1L354 394.8L366 394.7L379 394.5L391 393.8L404 394.1L416 393.3L429 393.9L441 393.6" stroke="#7598f7" stroke-width="1.5" stroke-opacity="0.52"/>
<path d="M450 391.1L463 390.3L476 391.1L489 390.6L502 391.1L515 391.1L529 391.3" stroke="#8c62e8" stroke-width="1.6" stroke-opacity="0.62"/>
<path d="M450 393.0L463 392.2L476 393.0L489 392.5L502 393.0L515 393.0L529 393.2" stroke="#7598f7" stroke-width="1.5" stroke-opacity="0.56"/>
<path d="M538 391.3L550 391.3L563 391.6L576 392.4L589 392.0L601 392.1L614 392.2L627 392.0L639 392.4L652 392.1" stroke="#8c62e8" stroke-width="1.6" stroke-opacity="0.26"/>
<path d="M538 393.2L550 393.2L563 393.5L576 394.3L589 393.9L601 394.0L614 394.1L627 393.9L639 394.3L652 394.0" stroke="#7598f7" stroke-width="1.5" stroke-opacity="0.24"/>
<path d="M-43 403.6L-31 403.5L-19 404.4L-7 404.2L5 404.6L18 405.1L30 404.7L42 405.5L54 405.4L66 405.9L78 405.6L90 405.3L102 405.9L115 404.9L127 405.1L139 404.9L151 404.1L163 404.3L175 403.8" stroke="#8c62e8" stroke-width="1.6" stroke-opacity="0.58"/>
<path d="M-43 405.5L-31 405.4L-19 406.3L-7 406.1L5 406.5L18 407.0L30 406.6L42 407.4L54 407.3L66 407.8L78 407.5L90 407.2L102 407.8L115 406.8L127 407.0L139 406.8L151 406.0L163 406.2L175 405.7" stroke="#7598f7" stroke-width="1.5" stroke-opacity="0.37"/>
<path d="M185 403.8L197 403.4L209 404.2L221 404.3L233 404.7L245 404.5L257 404.6L269 405.0L282 405.6L294 405.7L306 405.5" stroke="#8c62e8" stroke-width="1.6" stroke-opacity="0.48"/>
<path d="M185 405.7L197 405.3L209 406.1L221 406.2L233 406.6L245 406.4L257 406.5L269 406.9L282 407.5L294 407.6L306 407.4" stroke="#7598f7" stroke-width="1.5" stroke-opacity="0.36"/>
<path d="M315 405.9L328 405.2L341 405.5L354 404.9L367 405.0L380 404.0L393 403.9L406 404.1L420 403.8L433 403.7L446 404.1L459 403.9" stroke="#8c62e8" stroke-width="1.6" stroke-opacity="0.48"/>
<path d="M315 407.8L328 407.1L341 407.4L354 406.8L367 406.9L380 405.9L393 405.8L406 406.0L420 405.7L433 405.6L446 406.0L459 405.8" stroke="#7598f7" stroke-width="1.5" stroke-opacity="0.35"/>
<path d="M467 404.4L480 404.8L494 405.1L508 404.9L522 405.8L535 405.4L549 406.0L563 405.8" stroke="#8c62e8" stroke-width="1.6" stroke-opacity="0.62"/>
<path d="M467 406.3L480 406.7L494 407.0L508 406.8L522 407.7L535 407.3L549 407.9L563 407.7" stroke="#7598f7" stroke-width="1.5" stroke-opacity="0.51"/>
<path d="M-3 417.6L10 417.3L22 417.4L34 417.9L47 417.2L59 416.7" stroke="#8c62e8" stroke-width="1.6" stroke-opacity="0.44"/>
<path d="M-3 419.5L10 419.2L22 419.3L34 419.8L47 419.1L59 418.6" stroke="#7598f7" stroke-width="1.5" stroke-opacity="0.27"/>
<path d="M61 417.0L73 416.8L85 416.8L97 415.7L109 416.5L121 415.6L133 415.4L146 416.2L158 416.2L170 416.4L182 416.3L194 417.2L206 417.0" stroke="#8c62e8" stroke-width="1.6" stroke-opacity="0.49"/>
<path d="M61 418.9L73 418.7L85 418.7L97 417.6L109 418.4L121 417.5L133 417.3L146 418.1L158 418.1L170 418.3L182 418.2L194 419.1L206 418.9" stroke="#7598f7" stroke-width="1.5" stroke-opacity="0.41"/>
<path d="M211 417.3L224 417.1L236 417.8L248 417.9L260 417.3L272 417.5L285 417.5L297 416.6L309 417.0L321 416.8L333 415.7L345 415.7L358 415.5L370 415.7L382 415.6L394 416.2" stroke="#8c62e8" stroke-width="1.6" stroke-opacity="0.42"/>
<path d="M211 419.2L224 419.0L236 419.7L248 419.8L260 419.2L272 419.4L285 419.4L297 418.5L309 418.9L321 418.7L333 417.6L345 417.6L358 417.4L370 417.6L382 417.5L394 418.1" stroke="#7598f7" stroke-width="1.5" stroke-opacity="0.27"/>
<path d="M399 416.5L411 416.2L423 416.6L435 416.6L447 417.2L460 417.2L472 417.9L484 418.0L496 418.1L508 417.1L520 416.7" stroke="#8c62e8" stroke-width="1.6" stroke-opacity="0.60"/>
<path d="M399 418.4L411 418.1L423 418.5L435 418.5L447 419.1L460 419.1L472 419.8L484 419.9L496 420.0L508 419.0L520 418.6" stroke="#7598f7" stroke-width="1.5" stroke-opacity="0.52"/>
<path d="M530 416.5L542 417.1L555 416.4L568 416.1L580 415.9L593 416.2L606 416.3L618 416.0L631 415.9L643 416.5L656 417.2" stroke="#8c62e8" stroke-width="1.6" stroke-opacity="0.39"/>
<path d="M530 418.4L542 419.0L555 418.3L568 418.0L580 417.8L593 418.1L606 418.2L618 417.9L631 417.8L643 418.4L656 419.1" stroke="#7598f7" stroke-width="1.5" stroke-opacity="0.28"/>
<path d="M-26 427.2L-13 427.6L-0 428.2L12 428.3L25 427.2L37 427.6L50 427.3L62 427.2L75 426.5L87 426.0L100 425.9L112 426.3L125 426.3L137 425.9" stroke="#8c62e8" stroke-width="1.6" stroke-opacity="0.64"/>
<path d="M-26 429.1L-13 429.5L-0 430.1L12 430.2L25 429.1L37 429.5L50 429.2L62 429.1L75 428.4L87 427.9L100 427.8L112 428.2L125 428.2L137 427.8" stroke="#7598f7" stroke-width="1.5" stroke-opacity="0.52"/>
<path d="M144 426.1L159 426.6L174 426.7L189 426.9" stroke="#8c62e8" stroke-width="1.6" stroke-opacity="0.45"/>
<path d="M144 428.0L159 428.5L174 428.6L189 428.8" stroke="#7598f7" stroke-width="1.5" stroke-opacity="0.37"/>
<path d="M196 427.7L210 427.3L223 428.0L237 427.4L250 428.2L263 427.1L277 427.5L290 426.8L304 426.3" stroke="#8c62e8" stroke-width="1.6" stroke-opacity="0.50"/>
<path d="M196 429.6L210 429.2L223 429.9L237 429.3L250 430.1L263 429.0L277 429.4L290 428.7L304 428.2" stroke="#7598f7" stroke-width="1.5" stroke-opacity="0.35"/>
<path d="M308 426.4L321 426.8L335 426.0L348 426.0L361 425.8L375 426.7" stroke="#8c62e8" stroke-width="1.6" stroke-opacity="0.49"/>
<path d="M308 428.3L321 428.7L335 427.9L348 427.9L361 427.7L375 428.6" stroke="#7598f7" stroke-width="1.5" stroke-opacity="0.33"/>
<path d="M383 426.2L396 426.3L408 426.5L421 427.2L434 427.9L446 427.4L459 427.8L472 428.1L484 427.5L497 427.2L510 427.3" stroke="#8c62e8" stroke-width="1.6" stroke-opacity="0.59"/>
<path d="M383 428.1L396 428.2L408 428.4L421 429.1L434 429.8L446 429.3L459 429.7L472 430.0L484 429.4L497 429.1L510 429.2" stroke="#7598f7" stroke-width="1.5" stroke-opacity="0.42"/>
<path d="M-26 436.3L-11 435.5L5 435.5L21 435.3" stroke="#8c62e8" stroke-width="1.6" stroke-opacity="0.45"/>
<path d="M-26 438.2L-11 437.4L5 437.4L21 437.2" stroke="#7598f7" stroke-width="1.5" stroke-opacity="0.26"/>
<path d="M50 433.9L63 434.1L76 433.8L90 434.2L103 433.9L116 434.3L130 434.7L143 434.8L156 435.1" stroke="#8c62e8" stroke-width="1.6" stroke-opacity="0.57"/>
<path d="M50 435.8L63 436.0L76 435.7L90 436.1L103 435.8L116 436.2L130 436.6L143 436.7L156 437.0" stroke="#7598f7" stroke-width="1.5" stroke-opacity="0.36"/>
<path d="M158 435.3L170 435.5L182 436.3L194 435.5L207 436.2L219 435.4L231 436.0L243 435.2L256 435.1L268 435.1L280 434.1L292 433.8L305 434.4L317 434.3L329 434.5L341 434.3L354 434.7L366 434.7L378 435.3" stroke="#8c62e8" stroke-width="1.6" stroke-opacity="0.44"/>
<path d="M158 437.2L170 437.4L182 438.2L194 437.4L207 438.1L219 437.3L231 437.9L243 437.1L256 437.0L268 437.0L280 436.0L292 435.7L305 436.3L317 436.2L329 436.4L341 436.2L354 436.6L366 436.6L378 437.2" stroke="#7598f7" stroke-width="1.5" stroke-opacity="0.29"/>
<path d="M381 435.0L394 436.0L406 435.8L419 435.7L431 435.6L444 435.9L457 435.7L469 435.7L482 435.0" stroke="#8c62e8" stroke-width="1.6" stroke-opacity="0.54"/>
<path d="M381 436.9L394 437.9L406 437.7L419 437.6L431 437.5L444 437.8L457 437.6L469 437.6L482 436.9" stroke="#7598f7" stroke-width="1.5" stroke-opacity="0.39"/>
<path d="M524 434.8L536 434.6L548 433.9L560 434.6L572 434.6L584 434.4L597 435.5L609 435.4L621 435.9L633 435.8L645 435.5L658 436.3L670 435.6L682 435.6L694 435.7L706 435.0L718 435.0L731 435.0L743 434.1L755 434.5L767 433.8L779 434.2" stroke="#8c62e8" stroke-width="1.6" stroke-opacity="0.65"/>
<path d="M524 436.7L536 436.5L548 435.8L560 436.5L572 436.5L584 436.3L597 437.4L609 437.3L621 437.8L633 437.7L645 437.4L658 438.2L670 437.5L682 437.5L694 437.6L706 436.9L718 436.9L731 436.9L743 436.0L755 436.4L767 435.7L779 436.1" stroke="#7598f7" stroke-width="1.5" stroke-opacity="0.53"/>
<path d="M-2 443.6L10 443.4L22 443.0L34 442.5L46 442.4L58 442.1L70 441.6L83 442.4L95 442.4L107 442.4L119 442.8L131 442.5" stroke="#8c62e8" stroke-width="1.6" stroke-opacity="0.42"/>
<path d="M-2 445.5L10 445.3L22 444.9L34 444.4L46 444.3L58 444.0L70 443.5L83 444.3L95 444.3L107 444.3L119 444.7L131 444.4" stroke="#7598f7" stroke-width="1.5" stroke-opacity="0.37"/>
<path d="M138 443.1L151 443.4L163 443.1L175 443.8L188 443.6L200 443.5L212 443.5L225 443.8L237 443.6L249 443.3L262 442.9L274 442.1L286 441.8L299 442.1L311 441.6L323 441.8L336 441.6" stroke="#8c62e8" stroke-width="1.6" stroke-opacity="0.67"/>
<path d="M138 445.0L151 445.3L163 445.0L175 445.7L188 445.5L200 445.4L212 445.4L225 445.7L237 445.5L249 445.2L262 444.8L274 444.0L286 443.7L299 444.0L311 443.5L323 443.7L336 443.5" stroke="#7598f7" stroke-width="1.5" stroke-opacity="0.41"/>
<path d="M338 442.4L351 442.1L363 442.3L376 442.7L388 442.7L401 443.3L414 443.5L426 443.2L439 444.0L451 443.5L464 442.9L476 443.6L489 442.6L502 442.3L514 441.8L527 441.7L539 442.1L552 442.0L565 442.0" stroke="#8c62e8" stroke-width="1.6" stroke-opacity="0.40"/>
<path d="M338 444.3L351 444.0L363 444.2L376 444.6L388 444.6L401 445.2L414 445.4L426 445.1L439 445.9L451 445.4L464 444.8L476 445.5L489 444.5L502 444.2L514 443.7L527 443.6L539 444.0L552 443.9L565 443.9" stroke="#7598f7" stroke-width="1.5" stroke-opacity="0.26"/>
<path d="M-1 451.1L13 452.0L26 452.5L40 452.7L53 452.8L67 453.3" stroke="#8c62e8" stroke-width="1.6" stroke-opacity="0.63"/>
<path d="M-1 453.0L13 453.9L26 454.4L40 454.6L53 454.7L67 455.2" stroke="#7598f7" stroke-width="1.5" stroke-opacity="0.39"/>
<path d="M69 453.2L82 453.1L95 453.3L108 453.0L121 452.8L133 452.8L146 452.4L159 451.8L172 451.3L184 451.8L197 451.1" stroke="#8c62e8" stroke-width="1.6" stroke-opacity="0.34"/>
<path d="M69 455.1L82 455.0L95 455.2L108 454.9L121 454.7L133 454.7L146 454.3L159 453.7L172 453.2L184 453.7L197 453.0" stroke="#7598f7" stroke-width="1.5" stroke-opacity="0.20"/>
<path d="M204 451.4L217 451.8L229 451.8L241 451.7L253 452.0L266 452.6L278 452.4L290 452.4L302 453.1L315 453.4L327 452.8L339 453.1L351 453.1L363 452.1L376 451.8L388 451.8L400 451.4L412 451.8L425 451.8L437 451.2L449 451.6" stroke="#8c62e8" stroke-width="1.6" stroke-opacity="0.54"/>
<path d="M204 453.3L217 453.7L229 453.7L241 453.6L253 453.9L266 454.5L278 454.3L290 454.3L302 455.0L315 455.3L327 454.7L339 455.0L351 455.0L363 454.0L376 453.7L388 453.7L400 453.3L412 453.7L425 453.7L437 453.1L449 453.5" stroke="#7598f7" stroke-width="1.5" stroke-opacity="0.43"/>
<path d="M459 451.4L472 451.2L485 452.0L498 452.2L511 453.1L524 452.8L537 453.4" stroke="#8c62e8" stroke-width="1.6" stroke-opacity="0.28"/>
<path d="M459 453.3L472 453.1L485 453.9L498 454.1L511 455.0L524 454.7L537 455.3" stroke="#7598f7" stroke-width="1.5" stroke-opacity="0.24"/>
<path d="M540 452.9L553 453.2L566 453.0L580 452.6L593 452.6L607 452.7L620 451.6L633 451.4L647 450.9" stroke="#8c62e8" stroke-width="1.6" stroke-opacity="0.47"/>
<path d="M540 454.8L553 455.1L566 454.9L580 454.5L593 454.5L607 454.6L620 453.5L633 453.3L647 452.8" stroke="#7598f7" stroke-width="1.5" stroke-opacity="0.28"/>
<path d="M-18 465.2L-6 464.9L7 465.5L19 465.7L32 466.3L44 466.0L57 466.6L69 466.5L81 466.5L94 466.2L106 465.7L119 466.0L131 465.8L144 465.3L156 464.6L169 464.9L181 465.2L194 465.3L206 465.2" stroke="#8c62e8" stroke-width="1.6" stroke-opacity="0.51"/>
<path d="M-18 467.1L-6 466.8L7 467.4L19 467.6L32 468.2L44 467.9L57 468.5L69 468.4L81 468.4L94 468.1L106 467.6L119 467.9L131 467.7L144 467.2L156 466.5L169 466.8L181 467.1L194 467.2L206 467.1" stroke="#7598f7" stroke-width="1.5" stroke-opacity="0.29"/>
<path d="M279 466.8L292 467.0L304 466.3L317 466.5L330 466.2L342 465.8L355 466.0L367 465.5L380 465.0" stroke="#8c62e8" stroke-width="1.6" stroke-opacity="0.66"/>
<path d="M279 468.7L292 468.9L304 468.2L317 468.4L330 468.1L342 467.7L355 467.9L367 467.4L380 466.9" stroke="#7598f7" stroke-width="1.5" stroke-opacity="0.51"/>
<path d="M445 465.6L457 464.8L469 465.6L482 465.9L494 466.4L506 466.8L518 466.6L530 466.6L542 466.7L554 466.4L566 466.4L578 466.4L590 465.2L602 465.2L614 465.5L626 464.5L638 465.1L650 464.3L662 465.0L674 465.3L686 465.0" stroke="#8c62e8" stroke-width="1.6" stroke-opacity="0.50"/>
<path d="M445 467.5L457 466.7L469 467.5L482 467.8L494 468.3L506 468.7L518 468.5L530 468.5L542 468.6L554 468.3L566 468.3L578 468.3L590 467.1L602 467.1L614 467.4L626 466.4L638 467.0L650 466.2L662 466.9L674 467.2L686 466.9" stroke="#7598f7" stroke-width="1.5" stroke-opacity="0.35"/>
<path d="M-24 477.6L-12 477.8L0 477.0L13 477.1L25 476.7L37 476.4L49 476.5L61 475.6L73 475.8L85 475.9L97 476.0L109 475.1L121 475.5L133 475.9L145 476.6" stroke="#8c62e8" stroke-width="1.6" stroke-opacity="0.68"/>
<path d="M-24 479.5L-12 479.7L0 478.9L13 479.0L25 478.6L37 478.3L49 478.4L61 477.5L73 477.7L85 477.8L97 477.9L109 477.0L121 477.4L133 477.8L145 478.5" stroke="#7598f7" stroke-width="1.5" stroke-opacity="0.42"/>
<path d="M197 476.8L210 477.2L222 477.0L234 476.9L247 476.8L259 477.0L271 476.6L284 475.8L296 476.2L308 475.7L321 475.2L333 475.9L345 475.9L358 475.5" stroke="#8c62e8" stroke-width="1.6" stroke-opacity="0.67"/>
<path d="M197 478.7L210 479.1L222 478.9L234 478.8L247 478.7L259 478.9L271 478.5L284 477.7L296 478.1L308 477.6L321 477.1L333 477.8L345 477.8L358 477.4" stroke="#7598f7" stroke-width="1.5" stroke-opacity="0.62"/>
<path d="M396 476.9L409 476.5L423 477.4L436 477.6" stroke="#8c62e8" stroke-width="1.6" stroke-opacity="0.64"/>
<path d="M396 478.8L409 478.4L423 479.3L436 479.5" stroke="#7598f7" stroke-width="1.5" stroke-opacity="0.51"/>
<path d="M535 476.2L547 475.4L560 475.7L572 475.7L585 476.0L597 476.0L610 475.9L622 476.2L635 476.8L647 476.6" stroke="#8c62e8" stroke-width="1.6" stroke-opacity="0.63"/>
<path d="M535 478.1L547 477.3L560 477.6L572 477.6L585 477.9L597 477.9L610 477.8L622 478.1L635 478.7L647 478.5" stroke="#7598f7" stroke-width="1.5" stroke-opacity="0.56"/>
<path d="M-20 488.7L-7 488.8L5 489.2L18 489.8L30 489.6L43 489.9L55 489.1L67 488.8L80 488.8L92 489.0L105 488.0L117 487.7L130 488.2L142 487.4L154 488.0L167 487.5L179 487.9L192 488.6" stroke="#8c62e8" stroke-width="1.6" stroke-opacity="0.59"/>
<path d="M-20 490.6L-7 490.7L5 491.1L18 491.7L30 491.5L43 491.8L55 491.0L67 490.7L80 490.7L92 490.9L105 489.9L117 489.6L130 490.1L142 489.3L154 489.9L167 489.4L179 489.8L192 490.5" stroke="#7598f7" stroke-width="1.5" stroke-opacity="0.54"/>
<path d="M196 488.3L212 489.2L227 489.5L243 489.8" stroke="#8c62e8" stroke-width="1.6" stroke-opacity="0.40"/>
<path d="M196 490.2L212 491.1L227 491.4L243 491.7" stroke="#7598f7" stroke-width="1.5" stroke-opacity="0.31"/>
<path d="M244 489.3L257 489.8L269 489.3L282 489.3L294 489.1L307 489.4L319 488.9L332 488.4L344 488.1L356 488.4L369 488.3" stroke="#8c62e8" stroke-width="1.6" stroke-opacity="0.38"/>
<path d="M244 491.2L257 491.7L269 491.2L282 491.2L294 491.0L307 491.3L319 490.8L332 490.3L344 490.0L356 490.3L369 490.2" stroke="#7598f7" stroke-width="1.5" stroke-opacity="0.28"/>
<path d="M378 487.4L390 487.9L402 488.3L414 487.8L426 488.4L438 489.2L450 489.0L462 489.2L474 489.8" stroke="#8c62e8" stroke-width="1.6" stroke-opacity="0.37"/>
<path d="M378 489.3L390 489.8L402 490.2L414 489.7L426 490.3L438 491.1L450 490.9L462 491.1L474 491.7" stroke="#7598f7" stroke-width="1.5" stroke-opacity="0.33"/>
<path d="M475 489.9L487 489.8L499 489.4L511 489.5L523 489.1L535 489.1L547 488.8L559 489.0L571 488.7L583 488.5L595 487.9L607 488.3L619 487.5L631 488.4L643 488.3L655 488.8" stroke="#8c62e8" stroke-width="1.6" stroke-opacity="0.58"/>
<path d="M475 491.8L487 491.7L499 491.3L511 491.4L523 491.0L535 491.0L547 490.7L559 490.9L571 490.6L583 490.4L595 489.8L607 490.2L619 489.4L631 490.3L643 490.2L655 490.7" stroke="#7598f7" stroke-width="1.5" stroke-opacity="0.42"/>
<path d="M-11 503.4L2 502.9L14 502.6L26 502.1L39 502.4L51 502.1L63 501.2L76 502.0L88 501.2L100 501.4L113 501.6L125 501.9L137 502.5L150 502.9L162 502.9L174 502.8L187 502.8L199 502.8L211 503.2" stroke="#8c62e8" stroke-width="1.6" stroke-opacity="0.35"/>
<path d="M-11 505.3L2 504.8L14 504.5L26 504.0L39 504.3L51 504.0L63 503.1L76 503.9L88 503.1L100 503.3L113 503.5L125 503.8L137 504.4L150 504.8L162 504.8L174 504.7L187 504.7L199 504.7L211 505.1" stroke="#7598f7" stroke-width="1.5" stroke-opacity="0.27"/>
<path d="M221 503.1L234 502.6L248 503.1L261 502.5L274 502.1L287 501.7L300 501.3L313 501.3L326 501.5L339 501.5L352 502.2" stroke="#8c62e8" stroke-width="1.6" stroke-opacity="0.41"/>
<path d="M221 505.0L234 504.5L248 505.0L261 504.4L274 504.0L287 503.6L300 503.2L313 503.2L326 503.4L339 503.4L352 504.1" stroke="#7598f7" stroke-width="1.5" stroke-opacity="0.32"/>
<path d="M353 502.1L365 502.4L378 502.1L390 502.9L403 502.8L415 503.1L428 503.3" stroke="#8c62e8" stroke-width="1.6" stroke-opacity="0.41"/>
<path d="M353 504.0L365 504.3L378 504.0L390 504.8L403 504.7L415 505.0L428 505.2" stroke="#7598f7" stroke-width="1.5" stroke-opacity="0.23"/>
<path d="M435 503.7L447 503.5L460 502.9L473 502.4L486 502.6L498 502.4L511 501.7L524 501.2L537 501.5L549 501.0L562 501.7L575 501.7L588 501.6L601 502.1L613 502.1L626 502.4" stroke="#8c62e8" stroke-width="1.6" stroke-opacity="0.42"/>
<path d="M435 505.6L447 505.4L460 504.8L473 504.3L486 504.5L498 504.3L511 503.6L524 503.1L537 503.4L549 502.9L562 503.6L575 503.6L588 503.5L601 504.0L613 504.0L626 504.3" stroke="#7598f7" stroke-width="1.5" stroke-opacity="0.26"/>
<path d="M-39 514.0L-27 514.0L-15 513.6L-2 514.4L10 514.2L22 514.3L34 514.7L46 514.4L59 514.9L71 515.1L83 515.9L95 515.2L107 515.6L120 516.0L132 515.7" stroke="#8c62e8" stroke-width="1.6" stroke-opacity="0.54"/>
<path d="M-39 515.9L-27 515.9L-15 515.5L-2 516.3L10 516.1L22 516.2L34 516.6L46 516.3L59 516.8L71 517.0L83 517.8L95 517.1L107 517.5L120 517.9L132 517.6" stroke="#7598f7" stroke-width="1.5" stroke-opacity="0.46"/>
<path d="M134 515.6L146 515.0L159 515.1L171 514.6L183 514.6L195 514.6L207 513.8L220 514.4L232 513.4L244 514.5L256 513.8L268 514.6L280 514.7L293 515.4L305 515.2L317 515.3L329 516.0" stroke="#8c62e8" stroke-width="1.6" stroke-opacity="0.38"/>
<path d="M134 517.5L146 516.9L159 517.0L171 516.5L183 516.5L195 516.5L207 515.7L220 516.3L232 515.3L244 516.4L256 515.7L268 516.5L280 516.6L293 517.3L305 517.1L317 517.2L329 517.9" stroke="#7598f7" stroke-width="1.5" stroke-opacity="0.30"/>
<path d="M334 515.4L346 515.6L358 515.0L370 515.1L382 515.2" stroke="#8c62e8" stroke-width="1.6" stroke-opacity="0.60"/>
<path d="M334 517.3L346 517.5L358 516.9L370 517.0L382 517.1" stroke="#7598f7" stroke-width="1.5" stroke-opacity="0.51"/>
<path d="M387 514.7L399 514.7L412 514.5L424 514.4L437 513.7L449 513.7L462 513.8L475 513.6L487 514.1L500 514.8L512 514.9L525 514.8L537 515.6L550 515.2L563 515.9L575 515.3L588 515.2" stroke="#8c62e8" stroke-width="1.6" stroke-opacity="0.55"/>
<path d="M387 516.6L399 516.6L412 516.4L424 516.3L437 515.6L449 515.6L462 515.7L475 515.5L487 516.0L500 516.7L512 516.8L525 516.7L537 517.5L550 517.1L563 517.8L575 517.2L588 517.1" stroke="#7598f7" stroke-width="1.5" stroke-opacity="0.36"/>
<path d="M-4 529.7L8 529.3L20 529.8L32 529.6L45 528.4L57 528.4L69 528.1L81 527.8L93 527.9L105 528.2L117 527.4L129 528.3L141 528.0L153 527.9L165 529.1L177 528.8L189 529.0L201 529.1" stroke="#8c62e8" stroke-width="1.6" stroke-opacity="0.56"/>
<path d="M-4 531.6L8 531.2L20 531.7L32 531.5L45 530.3L57 530.3L69 530.0L81 529.7L93 529.8L105 530.1L117 529.3L129 530.2L141 529.9L153 529.8L165 531.0L177 530.7L189 530.9L201 531.0" stroke="#7598f7" stroke-width="1.5" stroke-opacity="0.39"/>
<path d="M203 529.4L217 529.4L230 529.7L244 529.8L257 529.5L271 528.9L285 529.1L298 528.7" stroke="#8c62e8" stroke-width="1.6" stroke-opacity="0.51"/>
<path d="M203 531.3L217 531.3L230 531.6L244 531.7L257 531.4L271 530.8L285 531.0L298 530.6" stroke="#7598f7" stroke-width="1.5" stroke-opacity="0.40"/>
<path d="M301 528.4L315 527.6L329 528.3L343 528.2L357 527.5L371 528.3" stroke="#8c62e8" stroke-width="1.6" stroke-opacity="0.65"/>
<path d="M301 530.3L315 529.5L329 530.2L343 530.1L357 529.4L371 530.2" stroke="#7598f7" stroke-width="1.5" stroke-opacity="0.42"/>
<path d="M379 528.4L392 528.3L405 529.0L418 529.1L431 529.9L444 529.3L457 529.9L470 529.1L483 529.2L496 528.8" stroke="#8c62e8" stroke-width="1.6" stroke-opacity="0.47"/>
<path d="M379 530.3L392 530.2L405 530.9L418 531.0L431 531.8L444 531.2L457 531.8L470 531.0L483 531.1L496 530.7" stroke="#7598f7" stroke-width="1.5" stroke-opacity="0.29"/>
<path d="M498 529.3L511 529.2L523 528.2L536 528.0L549 528.3L561 527.9L574 528.3L587 527.7L599 527.9L612 528.7L624 528.4L637 529.3L650 529.6L662 529.1L675 529.6L688 530.1L700 529.2L713 529.8" stroke="#8c62e8" stroke-width="1.6" stroke-opacity="0.29"/>
<path d="M498 531.2L511 531.1L523 530.1L536 529.9L549 530.2L561 529.8L574 530.2L587 529.6L599 529.8L612 530.6L624 530.3L637 531.2L650 531.5L662 531.0L675 531.5L688 532.0L700 531.1L713 531.7" stroke="#7598f7" stroke-width="1.5" stroke-opacity="0.25"/>
<path d="M-2 535.9L10 536.5L22 536.4L35 536.8L47 536.0L60 536.8L72 536.0L85 536.1L97 535.5L110 535.5L122 534.8L135 534.9L147 534.3L160 534.8L172 534.5L185 535.5L197 535.5L210 535.6" stroke="#8c62e8" stroke-width="1.6" stroke-opacity="0.58"/>
<path d="M-2 537.8L10 538.4L22 538.3L35 538.7L47 537.9L60 538.7L72 537.9L85 538.0L97 537.4L110 537.4L122 536.7L135 536.8L147 536.2L160 536.7L172 536.4L185 537.4L197 537.4L210 537.5" stroke="#7598f7" stroke-width="1.5" stroke-opacity="0.54"/>
<path d="M306 536.3L321 535.8L335 534.9L350 535.5L365 534.8" stroke="#8c62e8" stroke-width="1.6" stroke-opacity="0.57"/>
<path d="M306 538.2L321 537.7L335 536.8L350 537.4L365 536.7" stroke="#7598f7" stroke-width="1.5" stroke-opacity="0.45"/>
<path d="M407 534.7L422 534.7L438 535.2L453 536.4" stroke="#8c62e8" stroke-width="1.6" stroke-opacity="0.67"/>
<path d="M407 536.6L422 536.6L438 537.1L453 538.3" stroke="#7598f7" stroke-width="1.5" stroke-opacity="0.56"/>
<path d="M454 536.0L467 535.9L479 536.3L492 537.0L504 536.0L517 536.4L529 535.8L542 536.5L554 535.3L567 535.9L579 535.5L592 535.1L604 534.3L617 534.9L629 534.8L642 535.0L654 534.8L667 535.5L679 536.1L692 535.7" stroke="#8c62e8" stroke-width="1.6" stroke-opacity="0.55"/>
<path d="M454 537.9L467 537.8L479 538.2L492 538.9L504 537.9L517 538.3L529 537.7L542 538.4L554 537.2L567 537.8L579 537.4L592 537.0L604 536.2L617 536.8L629 536.7L642 536.9L654 536.7L667 537.4L679 538.0L692 537.6" stroke="#7598f7" stroke-width="1.5" stroke-opacity="0.49"/>
<path d="M-32 543.8L-20 543.5L-7 543.7L6 542.7L18 542.4L31 542.7L44 542.8L57 542.8L69 543.4L82 543.3L95 544.5L108 544.4L120 544.9L133 544.9" stroke="#8c62e8" stroke-width="1.6" stroke-opacity="0.65"/>
<path d="M-32 545.7L-20 545.4L-7 545.6L6 544.6L18 544.3L31 544.6L44 544.7L57 544.7L69 545.3L82 545.2L95 546.4L108 546.3L120 546.8L133 546.8" stroke="#7598f7" stroke-width="1.5" stroke-opacity="0.55"/>
<path d="M136 544.7L148 544.8L161 544.8L174 544.0L186 543.9L199 544.1L211 543.8L224 543.7L236 542.6L249 542.6L261 542.5L274 543.2L286 543.4L299 543.6L311 544.0L324 544.0L336 544.4" stroke="#8c62e8" stroke-width="1.6" stroke-opacity="0.34"/>
<path d="M136 546.6L148 546.7L161 546.7L174 545.9L186 545.8L199 546.0L211 545.7L224 545.6L236 544.5L249 544.5L261 544.4L274 545.1L286 545.3L299 545.5L311 545.9L324 545.9L336 546.3" stroke="#7598f7" stroke-width="1.5" stroke-opacity="0.31"/>
<path d="M343 544.7L355 544.7L367 544.3L379 544.6L391 544.5L403 544.3L416 544.2L428 543.7L440 543.5L452 543.2L464 543.0L476 543.4L488 542.5L500 542.5L512 543.3" stroke="#8c62e8" stroke-width="1.6" stroke-opacity="0.47"/>
<path d="M343 546.6L355 546.6L367 546.2L379 546.5L391 546.4L403 546.2L416 546.1L428 545.6L440 545.4L452 545.1L464 544.9L476 545.3L488 544.4L500 544.4L512 545.2" stroke="#7598f7" stroke-width="1.5" stroke-opacity="0.33"/>
<path d="M518 542.7L530 543.8L543 544.1L555 543.8L567 544.2L579 544.3L591 544.2L603 545.1L615 545.0L627 544.3L639 544.1" stroke="#8c62e8" stroke-width="1.6" stroke-opacity="0.36"/>
<path d="M518 544.6L530 545.7L543 546.0L555 545.7L567 546.1L579 546.2L591 546.1L603 547.0L615 546.9L627 546.2L639 546.0" stroke="#7598f7" stroke-width="1.5" stroke-opacity="0.30"/>
<path d="M-46 552.4L-34 552.6L-22 552.9L-10 552.6L2 552.4L15 552.2L27 552.4L39 553.3L51 552.9L63 554.0L75 554.1L87 554.1L99 554.6L111 554.6L123 554.2L136 553.5L148 553.7L160 553.3L172 552.8L184 553.2" stroke="#8c62e8" stroke-width="1.6" stroke-opacity="0.64"/>
<path d="M-46 554.3L-34 554.5L-22 554.8L-10 554.5L2 554.3L15 554.1L27 554.3L39 555.2L51 554.8L63 555.9L75 556.0L87 556.0L99 556.5L111 556.5L123 556.1L136 555.4L148 555.6L160 555.2L172 554.7L184 555.1" stroke="#7598f7" stroke-width="1.5" stroke-opacity="0.54"/>
<path d="M186 552.6L199 552.5L212 552.7L225 552.1L238 552.7L250 552.5L263 553.3L276 553.6L289 553.3L302 553.9" stroke="#8c62e8" stroke-width="1.6" stroke-opacity="0.51"/>
<path d="M186 554.5L199 554.4L212 554.6L225 554.0L238 554.6L250 554.4L263 555.2L276 555.5L289 555.2L302 555.8" stroke="#7598f7" stroke-width="1.5" stroke-opacity="0.30"/>
<path d="M308 553.4L320 553.7L332 554.2L344 553.8L356 553.9L368 554.0L380 554.1L392 553.4L404 552.8L416 552.9L428 552.4L440 552.7L452 552.0L464 552.2L476 552.5L488 553.2" stroke="#8c62e8" stroke-width="1.6" stroke-opacity="0.40"/>
<path d="M308 555.3L320 555.6L332 556.1L344 555.7L356 555.8L368 555.9L380 556.0L392 555.3L404 554.7L416 554.8L428 554.3L440 554.6L452 553.9L464 554.1L476 554.4L488 555.1" stroke="#7598f7" stroke-width="1.5" stroke-opacity="0.25"/>
<path d="M490 552.7L502 553.3L514 553.2L527 553.6L539 553.8L552 554.3L564 554.6L577 554.1" stroke="#8c62e8" stroke-width="1.6" stroke-opacity="0.40"/>
<path d="M490 554.6L502 555.2L514 555.1L527 555.5L539 555.7L552 556.2L564 556.5L577 556.0" stroke="#7598f7" stroke-width="1.5" stroke-opacity="0.37"/>
<path d="M-19 565.3L-7 564.6L6 564.7L18 564.2L31 564.0L43 563.3L56 563.1L68 563.0L81 563.3" stroke="#8c62e8" stroke-width="1.6" stroke-opacity="0.31"/>
<path d="M-19 567.2L-7 566.5L6 566.6L18 566.1L31 565.9L43 565.2L56 565.0L68 564.9L81 565.2" stroke="#7598f7" stroke-width="1.5" stroke-opacity="0.24"/>
<path d="M88 562.9L100 562.9L112 563.7L125 563.6L137 563.7L149 563.9L162 564.2L174 564.4L186 564.7L198 565.2L211 565.2L223 565.0" stroke="#8c62e8" stroke-width="1.6" stroke-opacity="0.28"/>
<path d="M88 564.8L100 564.8L112 565.6L125 565.5L137 565.6L149 565.8L162 566.1L174 566.3L186 566.6L198 567.1L211 567.1L223 566.9" stroke="#7598f7" stroke-width="1.5" stroke-opacity="0.25"/>
<path d="M224 564.5L237 564.6L249 564.6L262 564.1L274 563.6" stroke="#8c62e8" stroke-width="1.6" stroke-opacity="0.32"/>
<path d="M224 566.4L237 566.5L249 566.5L262 566.0L274 565.5" stroke="#7598f7" stroke-width="1.5" stroke-opacity="0.21"/>
<path d="M354 564.0L367 563.5L380 564.4L393 564.0L405 564.8L418 564.7L431 565.3L444 564.7L457 564.4L469 564.2" stroke="#8c62e8" stroke-width="1.6" stroke-opacity="0.27"/>
<path d="M354 565.9L367 565.4L380 566.3L393 565.9L405 566.7L418 566.6L431 567.2L444 566.6L457 566.3L469 566.1" stroke="#7598f7" stroke-width="1.5" stroke-opacity="0.24"/>
<path d="M541 562.9L553 562.7L566 563.7L579 562.9L591 563.7L604 563.7L617 563.9L629 564.4L642 565.1L655 564.6L667 564.6L680 565.0L693 564.9L705 564.5L718 563.9L731 564.2" stroke="#8c62e8" stroke-width="1.6" stroke-opacity="0.38"/>
<path d="M541 564.8L553 564.6L566 565.6L579 564.8L591 565.6L604 565.6L617 565.8L629 566.3L642 567.0L655 566.5L667 566.5L680 566.9L693 566.8L705 566.4L718 565.8L731 566.1" stroke="#7598f7" stroke-width="1.5" stroke-opacity="0.22"/>
<path d="M-31 575.0L-19 574.3L-6 574.8L6 573.7L19 573.8L31 573.4L44 573.8L56 574.1L69 573.5L81 573.9L94 574.7L106 574.9L119 574.6L131 575.4L144 575.7L156 575.4L169 575.2" stroke="#8c62e8" stroke-width="1.6" stroke-opacity="0.65"/>
<path d="M-31 576.9L-19 576.2L-6 576.7L6 575.6L19 575.7L31 575.3L44 575.7L56 576.0L69 575.4L81 575.8L94 576.6L106 576.8L119 576.5L131 577.3L144 577.6L156 577.3L169 577.1" stroke="#7598f7" stroke-width="1.5" stroke-opacity="0.53"/>
<path d="M170 575.1L183 575.3L195 575.2L208 575.0L221 574.5L233 574.6L246 573.6" stroke="#8c62e8" stroke-width="1.6" stroke-opacity="0.43"/>
<path d="M170 577.0L183 577.2L195 577.1L208 576.9L221 576.4L233 576.5L246 575.5" stroke="#7598f7" stroke-width="1.5" stroke-opacity="0.29"/>
<path d="M335 574.6L347 575.2L359 575.2L372 575.0L384 575.3L396 575.1L408 575.8L420 575.1L432 575.0L444 574.9L457 574.1L469 574.5L481 574.3L493 574.1L505 574.1L517 573.6L529 573.5L541 574.3L554 574.5L566 574.4L578 574.7" stroke="#8c62e8" stroke-width="1.6" stroke-opacity="0.59"/>
<path d="M335 576.5L347 577.1L359 577.1L372 576.9L384 577.2L396 577.0L408 577.7L420 577.0L432 576.9L444 576.8L457 576.0L469 576.4L481 576.2L493 576.0L505 576.0L517 575.5L529 575.4L541 576.2L554 576.4L566 576.3L578 576.6" stroke="#7598f7" stroke-width="1.5" stroke-opacity="0.36"/>
<path d="M-40 589.1L-27 588.7L-14 589.0L-1 588.7L11 589.0L24 588.6L37 588.1L50 587.6L62 587.2L75 587.6L88 587.4L101 586.8L113 586.7" stroke="#8c62e8" stroke-width="1.6" stroke-opacity="0.59"/>
<path d="M-40 591.0L-27 590.6L-14 590.9L-1 590.6L11 590.9L24 590.5L37 590.0L50 589.5L62 589.1L75 589.5L88 589.3L101 588.7L113 588.6" stroke="#7598f7" stroke-width="1.5" stroke-opacity="0.37"/>
<path d="M136 587.5L149 587.8L161 587.9L173 588.4L185 588.1L197 589.1L209 588.4L221 588.5L233 588.9L246 588.7L258 588.6L270 588.2L282 588.2L294 587.0L306 586.8L318 586.8L330 587.3L343 586.7L355 587.2" stroke="#8c62e8" stroke-width="1.6" stroke-opacity="0.49"/>
<path d="M136 589.4L149 589.7L161 589.8L173 590.3L185 590.0L197 591.0L209 590.3L221 590.4L233 590.8L246 590.6L258 590.5L270 590.1L282 590.1L294 588.9L306 588.7L318 588.7L330 589.2L343 588.6L355 589.1" stroke="#7598f7" stroke-width="1.5" stroke-opacity="0.42"/>
<path d="M360 587.2L372 587.5L385 587.6L398 588.6L410 588.7L423 588.8L435 588.6L448 589.1L460 588.8L473 589.0L485 588.3L498 588.5L510 588.0L523 587.5L535 587.4L548 587.4L560 587.1L573 587.5L586 586.7L598 587.8" stroke="#8c62e8" stroke-width="1.6" stroke-opacity="0.59"/>
<path d="M360 589.1L372 589.4L385 589.5L398 590.5L410 590.6L423 590.7L435 590.5L448 591.0L460 590.7L473 590.9L485 590.2L498 590.4L510 589.9L523 589.4L535 589.3L548 589.3L560 589.0L573 589.4L586 588.6L598 589.7" stroke="#7598f7" stroke-width="1.5" stroke-opacity="0.49"/>
<path d="M-40 595.5L-27 594.9L-15 594.1L-3 594.0L9 594.0L22 594.5L34 594.4L46 594.6L59 595.0L71 595.0L83 596.1L95 596.3L108 596.1L120 596.1L132 596.0L145 596.2L157 595.7L169 596.1L181 595.8" stroke="#8c62e8" stroke-width="1.6" stroke-opacity="0.42"/>
<path d="M-40 597.4L-27 596.8L-15 596.0L-3 595.9L9 595.9L22 596.4L34 596.3L46 596.5L59 596.9L71 596.9L83 598.0L95 598.2L108 598.0L120 598.0L132 597.9L145 598.1L157 597.6L169 598.0L181 597.7" stroke="#7598f7" stroke-width="1.5" stroke-opacity="0.35"/>
<path d="M207 594.4L221 594.4L234 594.9L248 594.7L261 595.0L275 594.5" stroke="#8c62e8" stroke-width="1.6" stroke-opacity="0.41"/>
<path d="M207 596.3L221 596.3L234 596.8L248 596.6L261 596.9L275 596.4" stroke="#7598f7" stroke-width="1.5" stroke-opacity="0.26"/>
<path d="M277 594.6L290 595.2L304 595.5L317 595.8L330 595.7" stroke="#8c62e8" stroke-width="1.6" stroke-opacity="0.49"/>
<path d="M277 596.5L290 597.1L304 597.4L317 597.7L330 597.6" stroke="#7598f7" stroke-width="1.5" stroke-opacity="0.41"/>
<path d="M337 595.8L350 595.7L363 596.1L376 596.2L389 595.6L402 596.0L415 595.7L428 595.3L441 595.0L454 594.5L468 594.1L481 594.2" stroke="#8c62e8" stroke-width="1.6" stroke-opacity="0.46"/>
<path d="M337 597.7L350 597.6L363 598.0L376 598.1L389 597.5L402 597.9L415 597.6L428 597.2L441 596.9L454 596.4L468 596.0L481 596.1" stroke="#7598f7" stroke-width="1.5" stroke-opacity="0.39"/>
<path d="M509 594.6L523 595.2L537 595.0L551 596.1" stroke="#8c62e8" stroke-width="1.6" stroke-opacity="0.41"/>
<path d="M509 596.5L523 597.1L537 596.9L551 598.0" stroke="#7598f7" stroke-width="1.5" stroke-opacity="0.28"/>
<path d="M-49 602.7L-37 603.2L-25 603.6L-13 604.0L-1 604.2L11 603.7L23 604.3L35 605.1L48 604.9L60 605.4L72 604.7L84 604.4L96 605.1L108 604.2L120 604.2" stroke="#8c62e8" stroke-width="1.6" stroke-opacity="0.62"/>
<path d="M-49 604.6L-37 605.1L-25 605.5L-13 605.9L-1 606.1L11 605.6L23 606.2L35 607.0L48 606.8L60 607.3L72 606.6L84 606.3L96 607.0L108 606.1L120 606.1" stroke="#7598f7" stroke-width="1.5" stroke-opacity="0.43"/>
<path d="M130 603.7L142 603.9L154 602.9L167 603.1L179 603.6L192 602.9L204 603.1L216 603.6L229 603.5L241 604.3L254 604.5L266 604.2L279 605.2L291 604.5L303 605.1L316 604.7L328 604.3L341 604.0L353 604.6L365 604.1L378 603.5" stroke="#8c62e8" stroke-width="1.6" stroke-opacity="0.64"/>
<path d="M130 605.6L142 605.8L154 604.8L167 605.0L179 605.5L192 604.8L204 605.0L216 605.5L229 605.4L241 606.2L254 606.4L266 606.1L279 607.1L291 606.4L303 607.0L316 606.6L328 606.2L341 605.9L353 606.5L365 606.0L378 605.4" stroke="#7598f7" stroke-width="1.5" stroke-opacity="0.56"/>
<path d="M472 604.0L484 604.8L496 604.8L508 604.9L520 605.2L532 604.8L545 604.9L557 605.1L569 604.2L581 604.6L593 603.5L605 603.7L617 603.5L629 602.9" stroke="#8c62e8" stroke-width="1.6" stroke-opacity="0.37"/>
<path d="M472 605.9L484 606.7L496 606.7L508 606.8L520 607.1L532 606.7L545 606.8L557 607.0L569 606.1L581 606.5L593 605.4L605 605.6L617 605.4L629 604.8" stroke="#7598f7" stroke-width="1.5" stroke-opacity="0.34"/>
<path d="M-25 614.8L-11 614.0L3 613.8L16 614.1" stroke="#8c62e8" stroke-width="1.6" stroke-opacity="0.29"/>
<path d="M-25 616.7L-11 615.9L3 615.7L16 616.0" stroke="#7598f7" stroke-width="1.5" stroke-opacity="0.26"/>
<path d="M50 613.1L64 612.7L78 612.4L91 612.9" stroke="#8c62e8" stroke-width="1.6" stroke-opacity="0.59"/>
<path d="M50 615.0L64 614.6L78 614.3L91 614.8" stroke="#7598f7" stroke-width="1.5" stroke-opacity="0.38"/>
<path d="M101 613.2L113 612.9L126 613.3L138 613.8L150 614.6L163 614.2L175 614.4L187 614.6" stroke="#8c62e8" stroke-width="1.6" stroke-opacity="0.28"/>
<path d="M101 615.1L113 614.8L126 615.2L138 615.7L150 616.5L163 616.1L175 616.3L187 616.5" stroke="#7598f7" stroke-width="1.5" stroke-opacity="0.17"/>
<path d="M194 614.3L206 614.2L219 614.5L231 614.1L244 614.3L256 613.2L268 613.5L281 613.2L293 612.8L305 612.5" stroke="#8c62e8" stroke-width="1.6" stroke-opacity="0.61"/>
<path d="M194 616.2L206 616.1L219 616.4L231 616.0L244 616.2L256 615.1L268 615.4L281 615.1L293 614.7L305 614.4" stroke="#7598f7" stroke-width="1.5" stroke-opacity="0.48"/>
<path d="M310 612.9L323 612.8L336 612.8L349 613.3L362 613.7L376 614.4L389 614.8L402 614.5L415 614.4L428 614.4L441 614.7L454 614.6" stroke="#8c62e8" stroke-width="1.6" stroke-opacity="0.56"/>
<path d="M310 614.8L323 614.7L336 614.7L349 615.2L362 615.6L376 616.3L389 616.7L402 616.4L415 616.3L428 616.3L441 616.6L454 616.5" stroke="#7598f7" stroke-width="1.5" stroke-opacity="0.36"/>
<path d="M464 614.1L477 614.0L489 613.9L502 613.0L515 612.9L527 613.4L540 612.4L552 612.7L565 613.0L578 613.5L590 613.7" stroke="#8c62e8" stroke-width="1.6" stroke-opacity="0.67"/>
<path d="M464 616.0L477 615.9L489 615.8L502 614.9L515 614.8L527 615.3L540 614.3L552 614.6L565 614.9L578 615.4L590 615.6" stroke="#7598f7" stroke-width="1.5" stroke-opacity="0.62"/>
<path d="M-58 621.3L-42 621.0L-27 621.6L-12 620.9" stroke="#8c62e8" stroke-width="1.6" stroke-opacity="0.49"/>
<path d="M-58 623.2L-42 622.9L-27 623.5L-12 622.8" stroke="#7598f7" stroke-width="1.5" stroke-opacity="0.45"/>
<path d="M-6 621.2L7 620.1L19 620.1L31 619.8L43 620.2L56 619.6L68 619.0L80 619.3L92 619.7L105 620.1L117 619.6L129 620.6L141 620.5L154 620.9" stroke="#8c62e8" stroke-width="1.6" stroke-opacity="0.37"/>
<path d="M-6 623.1L7 622.0L19 622.0L31 621.7L43 622.1L56 621.5L68 620.9L80 621.2L92 621.6L105 622.0L117 621.5L129 622.5L141 622.4L154 622.8" stroke="#7598f7" stroke-width="1.5" stroke-opacity="0.26"/>
<path d="M163 621.3L176 621.4L188 620.9L200 620.8L212 621.5L224 621.1L236 620.8L248 620.2L260 619.9L272 620.3L285 619.7L297 619.0L309 619.3L321 619.4L333 619.3L345 620.4L357 620.6L369 620.8L381 620.3L394 620.9L406 620.8" stroke="#8c62e8" stroke-width="1.6" stroke-opacity="0.66"/>
<path d="M163 623.2L176 623.3L188 622.8L200 622.7L212 623.4L224 623.0L236 622.7L248 622.1L260 621.8L272 622.2L285 621.6L297 620.9L309 621.2L321 621.3L333 621.2L345 622.3L357 622.5L369 622.7L381 622.2L394 622.8L406 622.7" stroke="#7598f7" stroke-width="1.5" stroke-opacity="0.56"/>
<path d="M489 619.7L501 619.5L514 620.0L527 619.9L539 619.5L552 619.3L564 620.0L577 619.5L590 620.0L602 620.0L615 621.3L627 620.9L640 621.5L653 621.6L665 621.3L678 621.6L690 621.2L703 621.1" stroke="#8c62e8" stroke-width="1.6" stroke-opacity="0.30"/>
<path d="M489 621.6L501 621.4L514 621.9L527 621.8L539 621.4L552 621.2L564 621.9L577 621.4L590 621.9L602 621.9L615 623.2L627 622.8L640 623.4L653 623.5L665 623.2L678 623.5L690 623.1L703 623.0" stroke="#7598f7" stroke-width="1.5" stroke-opacity="0.28"/>
<path d="M-41 629.1L-28 628.9L-16 629.8L-4 629.2L9 629.2L21 628.8L33 628.8L45 628.0L58 627.8L70 628.0L82 627.8L94 627.9L107 627.4L119 628.0L131 628.1L143 628.3L156 628.4L168 628.8L180 628.6L192 628.8L205 629.1L217 628.9" stroke="#8c62e8" stroke-width="1.6" stroke-opacity="0.28"/>
<path d="M-41 631.0L-28 630.8L-16 631.7L-4 631.1L9 631.1L21 630.7L33 630.7L45 629.9L58 629.7L70 629.9L82 629.7L94 629.8L107 629.3L119 629.9L131 630.0L143 630.2L156 630.3L168 630.7L180 630.5L192 630.7L205 631.0L217 630.8" stroke="#7598f7" stroke-width="1.5" stroke-opacity="0.16"/>
<path d="M224 629.5L237 629.4L249 629.0L262 628.3L274 628.4L287 627.9L299 627.5L312 627.2L325 627.9L337 627.7L350 628.1L362 627.6L375 627.9L387 628.5L400 628.3" stroke="#8c62e8" stroke-width="1.6" stroke-opacity="0.34"/>
<path d="M224 631.4L237 631.3L249 630.9L262 630.2L274 630.3L287 629.8L299 629.4L312 629.1L325 629.8L337 629.6L350 630.0L362 629.5L375 629.8L387 630.4L400 630.2" stroke="#7598f7" stroke-width="1.5" stroke-opacity="0.23"/>
<path d="M405 629.0L417 629.2L429 629.5L441 629.2L453 628.8L465 629.7L477 629.3L489 628.4L501 628.1L513 627.9L525 628.1L537 627.3L549 627.1L561 627.5L573 627.1L585 627.5L597 627.8L609 627.9L621 628.0L633 628.5L645 628.7" stroke="#8c62e8" stroke-width="1.6" stroke-opacity="0.51"/>
<path d="M405 630.9L417 631.1L429 631.4L441 631.1L453 630.7L465 631.6L477 631.2L489 630.3L501 630.0L513 629.8L525 630.0L537 629.2L549 629.0L561 629.4L573 629.0L585 629.4L597 629.7L609 629.8L621 629.9L633 630.4L645 630.6" stroke="#7598f7" stroke-width="1.5" stroke-opacity="0.35"/>
<path d="M-59 636.4L-46 636.4L-34 636.9L-21 636.4L-8 636.2L4 636.9L17 637.2L30 636.8L42 637.4L55 637.8L68 637.6L80 638.0L93 638.3L106 638.4L118 638.2L131 638.0L144 637.5" stroke="#8c62e8" stroke-width="1.6" stroke-opacity="0.47"/>
<path d="M-59 638.3L-46 638.3L-34 638.8L-21 638.3L-8 638.1L4 638.8L17 639.1L30 638.7L42 639.3L55 639.7L68 639.5L80 639.9L93 640.2L106 640.3L118 640.1L131 639.9L144 639.4" stroke="#7598f7" stroke-width="1.5" stroke-opacity="0.27"/>
<path d="M152 637.0L164 637.4L176 636.5L188 636.5L200 636.2L213 636.8L225 636.8L237 637.0L249 636.7L261 637.5L273 637.2L285 637.8L297 638.1L309 637.8L322 638.1L334 637.8L346 638.4L358 637.6L370 637.4L382 637.2" stroke="#8c62e8" stroke-width="1.6" stroke-opacity="0.66"/>
<path d="M152 638.9L164 639.3L176 638.4L188 638.4L200 638.1L213 638.7L225 638.7L237 638.9L249 638.6L261 639.4L273 639.1L285 639.7L297 640.0L309 639.7L322 640.0L334 639.7L346 640.3L358 639.5L370 639.3L382 639.1" stroke="#7598f7" stroke-width="1.5" stroke-opacity="0.53"/>
<path d="M387 637.0L400 637.0L413 636.4L425 636.3L438 636.1L451 636.0L463 636.4L476 637.1L489 637.1L501 636.9L514 637.3L527 638.0L539 638.1L552 637.7L565 637.8L577 638.2L590 638.1L603 637.3L615 637.7" stroke="#8c62e8" stroke-width="1.6" stroke-opacity="0.59"/>
<path d="M387 638.9L400 638.9L413 638.3L425 638.2L438 638.0L451 637.9L463 638.3L476 639.0L489 639.0L501 638.8L514 639.2L527 639.9L539 640.0L552 639.6L565 639.7L577 640.1L590 640.0L603 639.2L615 639.6" stroke="#7598f7" stroke-width="1.5" stroke-opacity="0.38"/>
<path d="M-3 647.3L9 647.2L21 646.7L33 646.2L45 646.1L57 645.8L69 646.0L81 646.0L94 645.8L106 645.4L118 645.9L130 646.1" stroke="#8c62e8" stroke-width="1.6" stroke-opacity="0.49"/>
<path d="M-3 649.2L9 649.1L21 648.6L33 648.1L45 648.0L57 647.7L69 647.9L81 647.9L94 647.7L106 647.3L118 647.8L130 648.0" stroke="#7598f7" stroke-width="1.5" stroke-opacity="0.32"/>
<path d="M132 646.1L144 646.7L157 647.0L169 647.5L181 647.7L193 647.6L206 647.0L218 647.3L230 647.0L242 647.2L255 646.4L267 646.0L279 645.4L291 645.6L304 645.6L316 645.3L328 645.2" stroke="#8c62e8" stroke-width="1.6" stroke-opacity="0.47"/>
<path d="M132 648.0L144 648.6L157 648.9L169 649.4L181 649.6L193 649.5L206 648.9L218 649.2L230 648.9L242 649.1L255 648.3L267 647.9L279 647.3L291 647.5L304 647.5L316 647.2L328 647.1" stroke="#7598f7" stroke-width="1.5" stroke-opacity="0.35"/>
<path d="M330 645.6L342 645.8L355 645.9L367 645.9L380 646.1L393 646.9L405 647.5L418 647.0L430 647.1L443 647.1L455 647.4L468 646.9" stroke="#8c62e8" stroke-width="1.6" stroke-opacity="0.41"/>
<path d="M330 647.5L342 647.7L355 647.8L367 647.8L380 648.0L393 648.8L405 649.4L418 648.9L430 649.0L443 649.0L455 649.3L468 648.8" stroke="#7598f7" stroke-width="1.5" stroke-opacity="0.35"/>
<path d="M469 646.8L481 646.5L493 646.8L506 645.9L518 645.8L530 646.1L542 645.6L554 645.6" stroke="#8c62e8" stroke-width="1.6" stroke-opacity="0.42"/>
<path d="M469 648.7L481 648.4L493 648.7L506 647.8L518 647.7L530 648.0L542 647.5L554 647.5" stroke="#7598f7" stroke-width="1.5" stroke-opacity="0.37"/>
<path d="M555 645.6L567 645.2L580 646.1L592 645.9L605 646.5L617 646.5L630 647.4L642 647.0L655 647.0L667 647.7L680 646.9L693 646.8L705 646.8L718 647.0L730 645.8L743 645.6L755 646.0L768 645.1L780 645.4L793 645.8L805 645.9" stroke="#8c62e8" stroke-width="1.6" stroke-opacity="0.49"/>
<path d="M555 647.5L567 647.1L580 648.0L592 647.8L605 648.4L617 648.4L630 649.3L642 648.9L655 648.9L667 649.6L680 648.8L693 648.7L705 648.7L718 648.9L730 647.7L743 647.5L755 647.9L768 647.0L780 647.3L793 647.7L805 647.8" stroke="#7598f7" stroke-width="1.5" stroke-opacity="0.43"/>
<path d="M-11 655.8L1 655.4L14 655.4L26 654.7L39 654.6L51 655.1L63 654.8L76 655.1L88 654.5L101 655.1L113 655.3L126 655.3L138 655.7L150 656.6L163 656.6L175 656.5L188 656.6L200 656.7L213 656.6L225 656.0" stroke="#8c62e8" stroke-width="1.6" stroke-opacity="0.47"/>
<path d="M-11 657.7L1 657.3L14 657.3L26 656.6L39 656.5L51 657.0L63 656.7L76 657.0L88 656.4L101 657.0L113 657.2L126 657.2L138 657.6L150 658.5L163 658.5L175 658.4L188 658.5L200 658.6L213 658.5L225 657.9" stroke="#7598f7" stroke-width="1.5" stroke-opacity="0.27"/>
<path d="M258 655.2L271 655.0L285 654.7L298 654.7L311 654.4L324 655.2L338 655.2L351 655.3" stroke="#8c62e8" stroke-width="1.6" stroke-opacity="0.31"/>
<path d="M258 657.1L271 656.9L285 656.6L298 656.6L311 656.3L324 657.1L338 657.1L351 657.2" stroke="#7598f7" stroke-width="1.5" stroke-opacity="0.28"/>
<path d="M445 656.1L457 655.9L469 655.4L481 655.6L494 655.5L506 654.5L518 654.8L530 655.2L543 655.1L555 654.9L567 654.7L579 655.4L591 655.7L604 656.3L616 655.9L628 656.2L640 657.0L653 656.0L665 656.5L677 655.8L689 656.2L701 655.6" stroke="#8c62e8" stroke-width="1.6" stroke-opacity="0.28"/>
<path d="M445 658.0L457 657.8L469 657.3L481 657.5L494 657.4L506 656.4L518 656.7L530 657.1L543 657.0L555 656.8L567 656.6L579 657.3L591 657.6L604 658.2L616 657.8L628 658.1L640 658.9L653 657.9L665 658.4L677 657.7L689 658.1L701 657.5" stroke="#7598f7" stroke-width="1.5" stroke-opacity="0.26"/>
<path d="M-57 663.4L-43 663.0L-29 663.7L-15 663.3L-0 664.1" stroke="#8c62e8" stroke-width="1.6" stroke-opacity="0.42"/>
<path d="M-57 665.3L-43 664.9L-29 665.6L-15 665.2L-0 666.0" stroke="#7598f7" stroke-width="1.5" stroke-opacity="0.33"/>
<path d="M5 664.6L18 664.6L31 664.2L43 664.1L56 664.0L68 664.0L81 664.2L93 664.2L106 663.9L118 663.5L131 662.5L144 663.1" stroke="#8c62e8" stroke-width="1.6" stroke-opacity="0.40"/>
<path d="M5 666.5L18 666.5L31 666.1L43 666.0L56 665.9L68 665.9L81 666.1L93 666.1L106 665.8L118 665.4L131 664.4L144 665.0" stroke="#7598f7" stroke-width="1.5" stroke-opacity="0.34"/>
<path d="M153 662.5L166 662.4L178 663.0L190 663.3L203 663.8L215 663.2L227 663.5L239 664.7L252 664.2L264 664.3L276 664.9L288 664.1L301 664.6L313 664.4L325 663.8" stroke="#8c62e8" stroke-width="1.6" stroke-opacity="0.30"/>
<path d="M153 664.4L166 664.3L178 664.9L190 665.2L203 665.7L215 665.1L227 665.4L239 666.6L252 666.1L264 666.2L276 666.8L288 666.0L301 666.5L313 666.3L325 665.7" stroke="#7598f7" stroke-width="1.5" stroke-opacity="0.24"/>
<path d="M331 663.6L344 662.9L356 662.8L369 663.0L381 662.3L394 662.4L406 662.6L419 663.4L431 663.4L444 663.5L456 664.4L469 664.3L481 664.1L494 664.6L506 664.9" stroke="#8c62e8" stroke-width="1.6" stroke-opacity="0.60"/>
<path d="M331 665.5L344 664.8L356 664.7L369 664.9L381 664.2L394 664.3L406 664.5L419 665.3L431 665.3L444 665.4L456 666.3L469 666.2L481 666.0L494 666.5L506 666.8" stroke="#7598f7" stroke-width="1.5" stroke-opacity="0.42"/>
<path d="M512 664.2L524 664.5L537 664.0L549 663.9L561 663.9L573 662.9L586 663.1L598 662.7L610 662.9L622 663.1L635 662.8L647 663.1L659 663.0L671 663.3L684 663.8L696 664.1L708 664.0L720 664.7L733 664.5L745 664.4L757 664.2L769 664.5" stroke="#8c62e8" stroke-width="1.6" stroke-opacity="0.54"/>
<path d="M512 666.1L524 666.4L537 665.9L549 665.8L561 665.8L573 664.8L586 665.0L598 664.6L610 664.8L622 665.0L635 664.7L647 665.0L659 664.9L671 665.2L684 665.7L696 666.0L708 665.9L720 666.6L733 666.4L745 666.3L757 666.1L769 666.4" stroke="#7598f7" stroke-width="1.5" stroke-opacity="0.49"/>
<path d="M-22 669.7L-10 670.1L2 670.7L14 670.4L26 670.8L38 671.4L50 671.4L62 671.2L74 670.6L86 670.6L98 670.3L110 669.8L122 670.2L134 669.8L146 670.0L158 669.5L170 669.8L182 669.4L194 669.6L206 669.6" stroke="#8c62e8" stroke-width="1.6" stroke-opacity="0.56"/>
<path d="M-22 671.6L-10 672.0L2 672.6L14 672.3L26 672.7L38 673.3L50 673.3L62 673.1L74 672.5L86 672.5L98 672.2L110 671.7L122 672.1L134 671.7L146 671.9L158 671.4L170 671.7L182 671.3L194 671.5L206 671.5" stroke="#7598f7" stroke-width="1.5" stroke-opacity="0.41"/>
<path d="M265 670.8L279 671.3L292 671.2L306 671.0" stroke="#8c62e8" stroke-width="1.6" stroke-opacity="0.41"/>
<path d="M265 672.7L279 673.2L292 673.1L306 672.9" stroke="#7598f7" stroke-width="1.5" stroke-opacity="0.38"/>
<path d="M307 671.1L322 670.9L338 670.4L353 669.6" stroke="#8c62e8" stroke-width="1.6" stroke-opacity="0.57"/>
<path d="M307 673.0L322 672.8L338 672.3L353 671.5" stroke="#7598f7" stroke-width="1.5" stroke-opacity="0.41"/>
<path d="M422 669.9L434 669.8L446 669.7L459 670.5L471 671.0" stroke="#8c62e8" stroke-width="1.6" stroke-opacity="0.31"/>
<path d="M422 671.8L434 671.7L446 671.6L459 672.4L471 672.9" stroke="#7598f7" stroke-width="1.5" stroke-opacity="0.27"/>
<path d="M479 671.1L494 670.9L509 670.8L524 671.5L539 671.3" stroke="#8c62e8" stroke-width="1.6" stroke-opacity="0.46"/>
<path d="M479 673.0L494 672.8L509 672.7L524 673.4L539 673.2" stroke="#7598f7" stroke-width="1.5" stroke-opacity="0.25"/>
<path d="M544 671.3L557 670.3L569 670.5L582 669.8L594 669.7L607 669.3L619 669.4L632 668.9L644 669.6L657 669.7L669 670.2L682 670.3L694 669.9L707 671.0L719 670.9L732 671.5L744 671.2L757 670.8L769 671.3L782 670.6L794 671.1" stroke="#8c62e8" stroke-width="1.6" stroke-opacity="0.53"/>
<path d="M544 673.2L557 672.2L569 672.4L582 671.7L594 671.6L607 671.2L619 671.3L632 670.8L644 671.5L657 671.6L669 672.1L682 672.2L694 671.8L707 672.9L719 672.8L732 673.4L744 673.1L757 672.7L769 673.2L782 672.5L794 673.0" stroke="#7598f7" stroke-width="1.5" stroke-opacity="0.40"/>
<path d="M-20 678.5L-7 678.6L5 678.1L18 678.0L31 678.5L44 678.9L57 678.5L70 679.1L82 680.1L95 679.6L108 680.3L121 679.9" stroke="#8c62e8" stroke-width="1.6" stroke-opacity="0.37"/>
<path d="M-20 680.4L-7 680.5L5 680.0L18 679.9L31 680.4L44 680.8L57 680.4L70 681.0L82 682.0L95 681.5L108 682.2L121 681.8" stroke="#7598f7" stroke-width="1.5" stroke-opacity="0.22"/>
<path d="M130 680.3L142 680.2L154 679.9L167 679.8L179 679.4L192 678.7L204 679.0L217 678.2L229 678.2L241 678.7L254 678.4L266 678.5L279 678.9L291 679.0L303 679.2L316 679.7L328 679.4L341 679.9" stroke="#8c62e8" stroke-width="1.6" stroke-opacity="0.27"/>
<path d="M130 682.2L142 682.1L154 681.8L167 681.7L179 681.3L192 680.6L204 680.9L217 680.1L229 680.1L241 680.6L254 680.3L266 680.4L279 680.8L291 680.9L303 681.1L316 681.6L328 681.3L341 681.8" stroke="#7598f7" stroke-width="1.5" stroke-opacity="0.15"/>
<path d="M433 679.2L446 678.4L458 678.7L470 678.5L482 678.5L495 678.7L507 678.4L519 679.2L531 679.2L544 679.8L556 680.1L568 679.7L580 680.0L593 680.0L605 679.6L617 680.3" stroke="#8c62e8" stroke-width="1.6" stroke-opacity="0.32"/>
<path d="M433 681.1L446 680.3L458 680.6L470 680.4L482 680.4L495 680.6L507 680.3L519 681.1L531 681.1L544 681.7L556 682.0L568 681.6L580 681.9L593 681.9L605 681.5L617 682.2" stroke="#7598f7" stroke-width="1.5" stroke-opacity="0.26"/>
<path d="M-56 693.8L-43 693.7L-30 693.8L-18 694.2L-5 693.8L8 694.2L21 693.8L33 693.6L46 692.6L59 692.6L72 692.0L84 692.1L97 691.8L110 692.4L122 693.0L135 693.1" stroke="#8c62e8" stroke-width="1.6" stroke-opacity="0.49"/>
<path d="M-56 695.7L-43 695.6L-30 695.7L-18 696.1L-5 695.7L8 696.1L21 695.7L33 695.5L46 694.5L59 694.5L72 693.9L84 694.0L97 693.7L110 694.3L122 694.9L135 695.0" stroke="#7598f7" stroke-width="1.5" stroke-opacity="0.34"/>
<path d="M145 693.4L157 692.9L170 694.1L183 694.0L196 693.9" stroke="#8c62e8" stroke-width="1.6" stroke-opacity="0.63"/>
<path d="M145 695.3L157 694.8L170 696.0L183 695.9L196 695.8" stroke="#7598f7" stroke-width="1.5" stroke-opacity="0.45"/>
<path d="M201 693.9L214 693.5L226 694.2L238 693.9L250 693.7L262 692.8L274 692.5L286 693.1L299 692.3L311 692.3L323 692.7L335 692.0L347 692.6L359 692.2L372 693.0L384 693.4L396 693.1L408 694.0L420 694.4L432 694.4" stroke="#8c62e8" stroke-width="1.6" stroke-opacity="0.65"/>
<path d="M201 695.8L214 695.4L226 696.1L238 695.8L250 695.6L262 694.7L274 694.4L286 695.0L299 694.2L311 694.2L323 694.6L335 693.9L347 694.5L359 694.1L372 694.9L384 695.3L396 695.0L408 695.9L420 696.3L432 696.3" stroke="#7598f7" stroke-width="1.5" stroke-opacity="0.57"/>
<path d="M510 693.2L522 692.7L534 692.6L547 692.0L559 692.1L571 692.1L584 692.8L596 693.0L608 692.8L621 693.8L633 693.1L645 693.4L658 693.8L670 693.6" stroke="#8c62e8" stroke-width="1.6" stroke-opacity="0.62"/>
<path d="M510 695.1L522 694.6L534 694.5L547 693.9L559 694.0L571 694.0L584 694.7L596 694.9L608 694.7L621 695.7L633 695.0L645 695.3L658 695.7L670 695.5" stroke="#7598f7" stroke-width="1.5" stroke-opacity="0.58"/>
<path d="M-28 707.2L-16 706.3L-3 706.3L9 706.0L22 705.6L34 705.6L47 706.1L59 706.5L71 706.4L84 706.4L96 707.5L109 707.0" stroke="#8c62e8" stroke-width="1.6" stroke-opacity="0.46"/>
<path d="M-28 709.1L-16 708.2L-3 708.2L9 707.9L22 707.5L34 707.5L47 708.0L59 708.4L71 708.3L84 708.3L96 709.4L109 708.9" stroke="#7598f7" stroke-width="1.5" stroke-opacity="0.41"/>
<path d="M115 707.4L127 707.9L139 707.7L151 707.6L163 707.5L175 707.5L187 707.0" stroke="#8c62e8" stroke-width="1.6" stroke-opacity="0.37"/>
<path d="M115 709.3L127 709.8L139 709.6L151 709.5L163 709.4L175 709.4L187 708.9" stroke="#7598f7" stroke-width="1.5" stroke-opacity="0.34"/>
<path d="M189 707.4L201 706.4L213 706.8L226 706.2L238 706.5L251 705.8L263 705.9L275 705.8L288 706.2L300 706.2L312 706.9L325 706.9L337 707.5L349 707.3" stroke="#8c62e8" stroke-width="1.6" stroke-opacity="0.41"/>
<path d="M189 709.3L201 708.3L213 708.7L226 708.1L238 708.4L251 707.7L263 707.8L275 707.7L288 708.1L300 708.1L312 708.8L325 708.8L337 709.4L349 709.2" stroke="#7598f7" stroke-width="1.5" stroke-opacity="0.30"/>
<path d="M357 707.2L369 707.3L381 707.4L393 707.3L406 707.2L418 707.4L430 706.8L442 707.1L454 706.1L467 705.9L479 705.7L491 705.6L503 706.2L516 706.2L528 706.1L540 706.9" stroke="#8c62e8" stroke-width="1.6" stroke-opacity="0.44"/>
<path d="M357 709.1L369 709.2L381 709.3L393 709.2L406 709.1L418 709.3L430 708.7L442 709.0L454 708.0L467 707.8L479 707.6L491 707.5L503 708.1L516 708.1L528 708.0L540 708.8" stroke="#7598f7" stroke-width="1.5" stroke-opacity="0.36"/>
<path d="M546 706.3L558 706.9L571 707.7L583 707.4L595 707.8L608 707.3L620 708.0L632 707.9L645 707.2L657 707.0L669 706.8L681 706.3L694 706.0L706 705.7L718 706.1L731 706.0" stroke="#8c62e8" stroke-width="1.6" stroke-opacity="0.45"/>
<path d="M546 708.2L558 708.8L571 709.6L583 709.3L595 709.7L608 709.2L620 709.9L632 709.8L645 709.1L657 708.9L669 708.7L681 708.2L694 707.9L706 707.6L718 708.0L731 707.9" stroke="#7598f7" stroke-width="1.5" stroke-opacity="0.42"/>
<path d="M-10 721.6L4 721.7L18 722.0L31 722.0L45 722.2L59 721.9" stroke="#8c62e8" stroke-width="1.6" stroke-opacity="0.69"/>
<path d="M-10 723.5L4 723.6L18 723.9L31 723.9L45 724.1L59 723.8" stroke="#7598f7" stroke-width="1.5" stroke-opacity="0.53"/>
<path d="M60 722.6L72 721.9L84 722.0L97 721.5L109 721.7L121 720.8L133 721.0L145 720.7L157 720.3L170 720.0L182 720.5L194 720.7L206 721.2L218 720.8L231 721.1L243 721.5L255 722.3L267 721.9L279 722.4L292 721.8" stroke="#8c62e8" stroke-width="1.6" stroke-opacity="0.51"/>
<path d="M60 724.5L72 723.8L84 723.9L97 723.4L109 723.6L121 722.7L133 722.9L145 722.6L157 722.2L170 721.9L182 722.4L194 722.6L206 723.1L218 722.7L231 723.0L243 723.4L255 724.2L267 723.8L279 724.3L292 723.7" stroke="#7598f7" stroke-width="1.5" stroke-opacity="0.30"/>
<path d="M296 722.6L309 721.9L322 721.9L335 721.4L348 721.2L361 720.5" stroke="#8c62e8" stroke-width="1.6" stroke-opacity="0.46"/>
<path d="M296 724.5L309 723.8L322 723.8L335 723.3L348 723.1L361 722.4" stroke="#7598f7" stroke-width="1.5" stroke-opacity="0.42"/>
<path d="M365 721.3L378 721.0L390 720.4L403 720.5L416 720.6L429 720.4L442 720.5L454 721.5L467 721.2" stroke="#8c62e8" stroke-width="1.6" stroke-opacity="0.33"/>
<path d="M365 723.2L378 722.9L390 722.3L403 722.4L416 722.5L429 722.3L442 722.4L454 723.4L467 723.1" stroke="#7598f7" stroke-width="1.5" stroke-opacity="0.26"/>
<path d="M468 721.7L480 722.3L493 722.2L506 722.2L518 721.8L531 722.6L544 722.0" stroke="#8c62e8" stroke-width="1.6" stroke-opacity="0.54"/>
<path d="M468 723.6L480 724.2L493 724.1L506 724.1L518 723.7L531 724.5L544 723.9" stroke="#7598f7" stroke-width="1.5" stroke-opacity="0.49"/>
<path d="M552 721.8L564 721.2L576 721.4L588 720.8L600 721.0L612 720.3L624 720.7L636 720.6L648 720.7L661 721.1L673 720.7L685 721.4L697 721.4" stroke="#8c62e8" stroke-width="1.6" stroke-opacity="0.35"/>
<path d="M552 723.7L564 723.1L576 723.3L588 722.7L600 722.9L612 722.2L624 722.6L636 722.5L648 722.6L661 723.0L673 722.6L685 723.3L697 723.3" stroke="#7598f7" stroke-width="1.5" stroke-opacity="0.32"/>
<path d="M-44 731.7L-32 732.2L-20 732.1L-8 732.4L4 732.6L16 732.6L28 732.8L40 733.5L52 733.6L64 733.6L76 734.0L88 733.2L100 733.0L112 733.3L124 732.7L137 733.1L149 732.1L161 732.6L173 731.7L185 731.5L197 732.1L209 732.1" stroke="#8c62e8" stroke-width="1.6" stroke-opacity="0.68"/>
<path d="M-44 733.6L-32 734.1L-20 734.0L-8 734.3L4 734.5L16 734.5L28 734.7L40 735.4L52 735.5L64 735.5L76 735.9L88 735.1L100 734.9L112 735.2L124 734.6L137 735.0L149 734.0L161 734.5L173 733.6L185 733.4L197 734.0L209 734.0" stroke="#7598f7" stroke-width="1.5" stroke-opacity="0.48"/>
<path d="M214 732.0L227 732.1L239 732.3L252 732.9L264 732.6L277 733.4L289 733.9L301 733.9L314 733.7L326 733.4L339 733.0L351 732.8L364 732.9L376 733.0L388 732.7L401 731.8L413 732.2L426 732.2L438 731.9L451 732.4L463 731.9" stroke="#8c62e8" stroke-width="1.6" stroke-opacity="0.48"/>
<path d="M214 733.9L227 734.0L239 734.2L252 734.8L264 734.5L277 735.3L289 735.8L301 735.8L314 735.6L326 735.3L339 734.9L351 734.7L364 734.8L376 734.9L388 734.6L401 733.7L413 734.1L426 734.1L438 733.8L451 734.3L463 733.8" stroke="#7598f7" stroke-width="1.5" stroke-opacity="0.33"/>
<path d="M470 732.7L483 732.5L496 732.9L508 733.0L521 733.4L533 733.8L546 733.5L559 733.7L571 733.4L584 732.7L596 733.4L609 732.4" stroke="#8c62e8" stroke-width="1.6" stroke-opacity="0.39"/>
<path d="M470 734.6L483 734.4L496 734.8L508 734.9L521 735.3L533 735.7L546 735.4L559 735.6L571 735.3L584 734.6L596 735.3L609 734.3" stroke="#7598f7" stroke-width="1.5" stroke-opacity="0.30"/>
<path d="M-48 738.6L-35 739.1L-22 739.6L-10 739.6L3 739.9L15 740.6L28 740.2L41 739.8L53 740.0L66 739.3L79 739.4L91 739.2L104 738.4L116 738.6L129 738.3L142 738.7L154 738.6L167 739.1L180 739.0" stroke="#8c62e8" stroke-width="1.6" stroke-opacity="0.48"/>
<path d="M-48 740.5L-35 741.0L-22 741.5L-10 741.5L3 741.8L15 742.5L28 742.1L41 741.7L53 741.9L66 741.2L79 741.3L91 741.1L104 740.3L116 740.5L129 740.2L142 740.6L154 740.5L167 741.0L180 740.9" stroke="#7598f7" stroke-width="1.5" stroke-opacity="0.30"/>
<path d="M187 739.0L199 739.1L211 739.6L223 740.3L235 740.2L247 740.4L259 740.5L272 739.9L284 740.1L296 739.6L308 739.4L320 739.2L332 739.0L344 738.3L356 738.8L369 738.1L381 738.3L393 738.9L405 739.2" stroke="#8c62e8" stroke-width="1.6" stroke-opacity="0.28"/>
<path d="M187 740.9L199 741.0L211 741.5L223 742.2L235 742.1L247 742.3L259 742.4L272 741.8L284 742.0L296 741.5L308 741.3L320 741.1L332 740.9L344 740.2L356 740.7L369 740.0L381 740.2L393 740.8L405 741.1" stroke="#7598f7" stroke-width="1.5" stroke-opacity="0.19"/>
<path d="M428 738.8L440 739.8L453 739.5L465 740.3L478 739.7L490 739.8L503 740.0L515 739.6L528 739.7L540 739.3L553 739.4L565 738.9L578 739.1L591 738.8L603 738.1L616 738.9L628 739.0L641 738.9L653 739.1L666 739.1L678 739.5" stroke="#8c62e8" stroke-width="1.6" stroke-opacity="0.34"/>
<path d="M428 740.7L440 741.7L453 741.4L465 742.2L478 741.6L490 741.7L503 741.9L515 741.5L528 741.6L540 741.2L553 741.3L565 740.8L578 741.0L591 740.7L603 740.0L616 740.8L628 740.9L641 740.8L653 741.0L666 741.0L678 741.4" stroke="#7598f7" stroke-width="1.5" stroke-opacity="0.22"/>
<path d="M-14 748.5L-2 747.9L11 747.8L23 747.2L35 747.5L48 747.3L60 747.7L72 747.7L85 747.5L97 748.0L109 748.7L122 748.3L134 749.1L146 749.1L159 749.4L171 748.9L183 748.9L196 748.7L208 748.7" stroke="#8c62e8" stroke-width="1.6" stroke-opacity="0.29"/>
<path d="M-14 750.4L-2 749.8L11 749.7L23 749.1L35 749.4L48 749.2L60 749.6L72 749.6L85 749.4L97 749.9L109 750.6L122 750.2L134 751.0L146 751.0L159 751.3L171 750.8L183 750.8L196 750.6L208 750.6" stroke="#7598f7" stroke-width="1.5" stroke-opacity="0.17"/>
<path d="M211 748.1L223 747.8L235 748.2L247 747.4L259 747.8L271 747.6L283 747.1L295 747.5L308 747.2L320 748.4L332 748.4L344 748.1L356 748.8L368 749.0L380 749.3" stroke="#8c62e8" stroke-width="1.6" stroke-opacity="0.37"/>
<path d="M211 750.0L223 749.7L235 750.1L247 749.3L259 749.7L271 749.5L283 749.0L295 749.4L308 749.1L320 750.3L332 750.3L344 750.0L356 750.7L368 750.9L380 751.2" stroke="#7598f7" stroke-width="1.5" stroke-opacity="0.24"/>
<path d="M450 748.6L464 747.7L478 747.8L492 747.8L506 747.7" stroke="#8c62e8" stroke-width="1.6" stroke-opacity="0.62"/>
<path d="M450 750.5L464 749.6L478 749.7L492 749.7L506 749.6" stroke="#7598f7" stroke-width="1.5" stroke-opacity="0.36"/>
<path d="M546 747.8L558 748.5L570 748.7L582 749.1L594 749.3L606 749.1L618 749.4L630 749.3L642 748.9L654 748.8L666 748.6L678 748.0L690 747.8L702 748.1L714 747.9L726 747.6L738 747.5L750 747.4L762 747.6" stroke="#8c62e8" stroke-width="1.6" stroke-opacity="0.56"/>
<path d="M546 749.7L558 750.4L570 750.6L582 751.0L594 751.2L606 751.0L618 751.3L630 751.2L642 750.8L654 750.7L666 750.5L678 749.9L690 749.7L702 750.0L714 749.8L726 749.5L738 749.4L750 749.3L762 749.5" stroke="#7598f7" stroke-width="1.5" stroke-opacity="0.46"/>
<path d="M-48 764.2L-33 763.3L-19 763.9L-5 763.6L9 763.3" stroke="#8c62e8" stroke-width="1.6" stroke-opacity="0.36"/>
<path d="M-48 766.1L-33 765.2L-19 765.8L-5 765.5L9 765.2" stroke="#7598f7" stroke-width="1.5" stroke-opacity="0.24"/>
<path d="M59 762.1L72 762.3L84 761.8L97 761.9L110 762.4L122 762.5L135 763.6L148 763.3L160 764.2L173 764.0L186 763.6L198 764.0" stroke="#8c62e8" stroke-width="1.6" stroke-opacity="0.68"/>
<path d="M59 764.0L72 764.2L84 763.7L97 763.8L110 764.3L122 764.4L135 765.5L148 765.2L160 766.1L173 765.9L186 765.5L198 765.9" stroke="#7598f7" stroke-width="1.5" stroke-opacity="0.46"/>
<path d="M199 763.9L211 763.8L224 763.2L236 762.7L249 762.6L261 762.7L273 762.3L286 761.8L298 761.8L311 762.1L323 761.8L335 762.0L348 762.7L360 762.7L373 763.7L385 763.2L397 764.0L410 764.2L422 763.7" stroke="#8c62e8" stroke-width="1.6" stroke-opacity="0.60"/>
<path d="M199 765.8L211 765.7L224 765.1L236 764.6L249 764.5L261 764.6L273 764.2L286 763.7L298 763.7L311 764.0L323 763.7L335 763.9L348 764.6L360 764.6L373 765.6L385 765.1L397 765.9L410 766.1L422 765.6" stroke="#7598f7" stroke-width="1.5" stroke-opacity="0.46"/>
<path d="M492 762.3L504 762.7L517 761.9L529 762.0L542 761.9L554 762.4L567 762.8L579 762.9L592 762.7L604 763.8L617 763.8" stroke="#8c62e8" stroke-width="1.6" stroke-opacity="0.69"/>
<path d="M492 764.2L504 764.6L517 763.8L529 763.9L542 763.8L554 764.3L567 764.7L579 764.8L592 764.6L604 765.7L617 765.7" stroke="#7598f7" stroke-width="1.5" stroke-opacity="0.52"/>
<path d="M-13 773.4L-0 773.2L12 773.7L25 773.6L37 774.0L50 774.3L62 774.7L75 775.3L87 774.9L100 775.0L113 774.9L125 774.8L138 775.4L150 775.2L163 774.1L175 774.0" stroke="#8c62e8" stroke-width="1.6" stroke-opacity="0.28"/>
<path d="M-13 775.3L-0 775.1L12 775.6L25 775.5L37 775.9L50 776.2L62 776.6L75 777.2L87 776.8L100 776.9L113 776.8L125 776.7L138 777.3L150 777.1L163 776.0L175 775.9" stroke="#7598f7" stroke-width="1.5" stroke-opacity="0.25"/>
<path d="M273 773.7L286 774.1L298 774.7L310 774.4L323 774.9L335 775.2L347 775.4L360 774.8L372 774.6L384 774.6L396 774.0L409 773.8L421 773.5L433 774.0L446 773.9L458 773.0L470 773.8L483 774.0L495 774.0L507 773.9L520 774.7L532 774.3" stroke="#8c62e8" stroke-width="1.6" stroke-opacity="0.39"/>
<path d="M273 775.6L286 776.0L298 776.6L310 776.3L323 776.8L335 777.1L347 777.3L360 776.7L372 776.5L384 776.5L396 775.9L409 775.7L421 775.4L433 775.9L446 775.8L458 774.9L470 775.7L483 775.9L495 775.9L507 775.8L520 776.6L532 776.2" stroke="#7598f7" stroke-width="1.5" stroke-opacity="0.22"/>
<path d="M-15 788.1L-3 789.0L10 789.2L22 789.0L34 789.4L46 789.2" stroke="#8c62e8" stroke-width="1.6" stroke-opacity="0.54"/>
<path d="M-15 790.0L-3 790.9L10 791.1L22 790.9L34 791.3L46 791.1" stroke="#7598f7" stroke-width="1.5" stroke-opacity="0.49"/>
<path d="M53 789.9L66 789.7L78 789.2L91 789.0L103 788.6L116 788.6L129 788.1L141 787.6L154 787.7L167 787.4L179 787.3L192 788.0L204 788.6L217 788.7L230 788.5" stroke="#8c62e8" stroke-width="1.6" stroke-opacity="0.28"/>
<path d="M53 791.8L66 791.6L78 791.1L91 790.9L103 790.5L116 790.5L129 790.0L141 789.5L154 789.6L167 789.3L179 789.2L192 789.9L204 790.5L217 790.6L230 790.4" stroke="#7598f7" stroke-width="1.5" stroke-opacity="0.21"/>
<path d="M235 789.1L248 789.6L261 789.4L274 789.8L287 789.6L300 789.0L312 788.9L325 788.7L338 788.4L351 788.3L364 787.8L377 788.3" stroke="#8c62e8" stroke-width="1.6" stroke-opacity="0.48"/>
<path d="M235 791.0L248 791.5L261 791.3L274 791.7L287 791.5L300 790.9L312 790.8L325 790.6L338 790.3L351 790.2L364 789.7L377 790.2" stroke="#7598f7" stroke-width="1.5" stroke-opacity="0.40"/>
<path d="M384 787.9L396 788.1L408 787.6L420 788.2L432 788.4L445 788.2L457 788.3L469 789.2L481 789.1L493 789.2L505 789.4L518 789.7L530 789.8L542 789.6L554 789.2L566 788.4L578 788.3L591 787.6L603 787.6L615 787.6L627 787.4" stroke="#8c62e8" stroke-width="1.6" stroke-opacity="0.32"/>
<path d="M384 789.8L396 790.0L408 789.5L420 790.1L432 790.3L445 790.1L457 790.2L469 791.1L481 791.0L493 791.1L505 791.3L518 791.6L530 791.7L542 791.5L554 791.1L566 790.3L578 790.2L591 789.5L603 789.5L615 789.5L627 789.3" stroke="#7598f7" stroke-width="1.5" stroke-opacity="0.24"/>
</g></svg>
<div class="a" style="left:1039.5px;top:93px;width:103px;height:26px;border-radius:4px;background:#4a4976"></div>
<svg width="12" height="8.5" style="position:absolute;left:1123.0px;top:101.25px" fill="none" stroke="#d8d8e0" stroke-width="1.6"><path d="M2 2l4.0 4.5l4.0 -4.5"/></svg>
<div class="a" style="left:607.5px;top:825px;width:536px;height:33px;border-radius:4px;background:#4e4d76"></div>
<div class="a" style="left:678px;top:853.5px;width:37px;height:2px;background:#2680eb"></div>
<svg width="12" height="8.5" style="position:absolute;left:1115.0px;top:837.25px" fill="none" stroke="#d8d8e0" stroke-width="1.6"><path d="M2 2l4.0 4.5l4.0 -4.5"/></svg>
<div class="a" style="left:1153px;top:46px;width:1px;height:819px;background:#1e1e1e"></div><div class="a" style="left:1154px;top:46px;width:1px;height:819px;background:#2a2a2a"></div>
<div class="a" style="left:1358px;top:46px;width:1px;height:819px;background:#222"></div><div class="a" style="left:1359px;top:46px;width:1px;height:819px;background:#2c2c2c"></div>
<div class="a" style="left:1562px;top:46px;width:1px;height:819px;background:#1f1f1f"></div>
<div class="a" style="left:1246px;top:52.5px;width:20px;height:2px;background:#585858"></div>
<svg class="a" style="left:1332px;top:66px" width="12" height="12" stroke="#b4b4b4" stroke-width="1.1"><path d="M2.2 2.7l7 7M9.2 2.7l-7 7"/></svg>
<svg width="27" height="27" style="position:absolute;left:1167px;top:87.5px"><rect x="0.65" y="0.65" width="25.7" height="25.7" rx="1" fill="#262626" stroke="#575757" stroke-width="1.3"/><clipPath id="hc1167"><rect x="4.6" y="4.2" width="18.7" height="18.5"/></clipPath><g clip-path="url(#hc1167)" fill="#cacaca"><polygon points="3.80,7.15 0.64,5.32 0.64,1.67 3.80,-0.15 6.96,1.67 6.96,5.33"/><polygon points="11.60,7.15 8.44,5.32 8.44,1.67 11.60,-0.15 14.76,1.67 14.76,5.33"/><polygon points="19.40,7.15 16.24,5.32 16.24,1.67 19.40,-0.15 22.56,1.67 22.56,5.33"/><polygon points="27.20,7.15 24.04,5.32 24.04,1.67 27.20,-0.15 30.36,1.67 30.36,5.33"/><polygon points="-0.10,13.75 -3.26,11.92 -3.26,8.27 -0.10,6.45 3.06,8.27 3.06,11.92"/><polygon points="7.70,13.75 4.54,11.92 4.54,8.27 7.70,6.45 10.86,8.27 10.86,11.92"/><polygon points="15.50,13.75 12.34,11.92 12.34,8.27 15.50,6.45 18.66,8.27 18.66,11.92"/><polygon points="23.30,13.75 20.14,11.92 20.14,8.27 23.30,6.45 26.46,8.27 26.46,11.92"/><polygon points="3.80,20.45 0.64,18.62 0.64,14.97 3.80,13.15 6.96,14.97 6.96,18.62"/><polygon points="11.60,20.45 8.44,18.62 8.44,14.97 11.60,13.15 14.76,14.97 14.76,18.62"/><polygon points="19.40,20.45 16.24,18.62 16.24,14.97 19.40,13.15 22.56,14.97 22.56,18.62"/><polygon points="27.20,20.45 24.04,18.62 24.04,14.97 27.20,13.15 30.36,14.97 30.36,18.62"/><polygon points="-0.10,27.15 -3.26,25.32 -3.26,21.68 -0.10,19.85 3.06,21.67 3.06,25.32"/><polygon points="7.70,27.15 4.54,25.32 4.54,21.68 7.70,19.85 10.86,21.67 10.86,25.32"/><polygon points="15.50,27.15 12.34,25.32 12.34,21.68 15.50,19.85 18.66,21.67 18.66,25.32"/><polygon points="23.30,27.15 20.14,25.32 20.14,21.68 23.30,19.85 26.46,21.67 26.46,25.32"/></g></svg>
<svg class="a" style="left:1322px;top:94px" width="18" height="16" fill="none" stroke="#d0d0d0" stroke-width="1.5"><path d="M3 7.5a6 4.6 0 0 1 12 2.5"/><path d="M2.5 3.5v4.5h4.5" stroke-width="1.5"/><path d="M2 13h14" stroke-width="1.4"/></svg>
<div class="a" style="left:1155px;top:121px;width:203px;height:1px;background:#262626"></div>
<svg width="10" height="7.5" style="position:absolute;left:1165.5px;top:134.75px" fill="none" stroke="#c8c8c8" stroke-width="1.5"><path d="M2 2l3.0 3.5l3.0 -3.5"/></svg>
<div style="position:absolute;left:1167px;top:179.0px;width:177px;height:1px;background:#555"></div><div style="position:absolute;left:1167px;top:178.5px;width:139px;height:2px;background:#bdbdbd"></div><div style="position:absolute;left:1301.75px;top:175.25px;width:8.5px;height:8.5px;box-sizing:border-box;border:1.4px solid #c4c4c4;border-radius:50%;background:#323232;box-shadow:0 0 0 2px #323232"></div>
<div style="position:absolute;left:1167px;top:220.0px;width:177px;height:1px;background:#555"></div><div style="position:absolute;left:1167px;top:219.5px;width:59.5px;height:2px;background:#bdbdbd"></div><div style="position:absolute;left:1222.25px;top:216.25px;width:8.5px;height:8.5px;box-sizing:border-box;border:1.4px solid #c4c4c4;border-radius:50%;background:#323232;box-shadow:0 0 0 2px #323232"></div>
<div style="position:absolute;left:1167px;top:260.5px;width:177px;height:1px;background:#555"></div><div style="position:absolute;left:1167px;top:260px;width:5.5px;height:2px;background:#bdbdbd"></div><div style="position:absolute;left:1168.25px;top:256.75px;width:8.5px;height:8.5px;box-sizing:border-box;border:1.4px solid #c4c4c4;border-radius:50%;background:#323232;box-shadow:0 0 0 2px #323232"></div>
<div style="position:absolute;left:1167px;top:333.5px;width:177px;height:1px;background:#555"></div><div style="position:absolute;left:1167px;top:333px;width:135.5px;height:2px;background:#bdbdbd"></div><div style="position:absolute;left:1298.25px;top:329.75px;width:8.5px;height:8.5px;box-sizing:border-box;border:1.4px solid #c4c4c4;border-radius:50%;background:#323232;box-shadow:0 0 0 2px #323232"></div>
<div class="a" style="left:1322.5px;top:284px;width:21px;height:10.5px;border-radius:6px;background:#474747"></div>
<div class="a" style="left:1322.5px;top:284px;width:10.5px;height:10.5px;box-sizing:border-box;border:1.6px solid #c8c8c8;border-radius:50%;background:#323232"></div>
<div class="a" style="left:1167.5px;top:367.5px;width:177px;height:26px;box-sizing:border-box;border:1px solid #3b3b3b;border-radius:3px;background:#222"></div>
<svg width="12" height="8.5" style="position:absolute;left:1325.0px;top:376.75px" fill="none" stroke="#d8d8d8" stroke-width="1.6"><path d="M2 2l4.0 4.5l4.0 -4.5"/></svg>
<div class="a" style="left:1155px;top:406.5px;width:203px;height:1px;background:#262626"></div>
<svg class="a" style="left:1166px;top:420px" width="8" height="10" fill="none" stroke="#c8c8c8" stroke-width="1.3"><path d="M2.5 1.5l3.5 3.5-3.5 3.5"/></svg>
<div class="a" style="left:1450.5px;top:52.5px;width:19.5px;height:2px;background:#585858"></div>
<svg class="a" style="left:1535.5px;top:66px" width="12" height="12" stroke="#b4b4b4" stroke-width="1.1"><path d="M2.2 2.7l7 7M9.2 2.7l-7 7"/></svg>
<svg class="a" style="left:1448px;top:92px" width="100" height="18" fill="none" stroke="#c8c8c8" stroke-width="1.6"><circle cx="10.2" cy="9" r="6.3"/><path d="M14.7 4.5a6.3 6.3 0 0 1-9 9z" fill="#c8c8c8" stroke="none"/><path d="M29.5 12.2L37 8.6 44.5 12.2 37 15.8z" fill="#c8c8c8" stroke="none"/><circle cx="37.5" cy="7.2" r="6.2" fill="#323232" stroke="none"/><circle cx="37.5" cy="7.2" r="5.4" fill="#c8c8c8" stroke="none"/><path d="M41.8 2.8Q36.8 5.5 33.6 11.6" stroke="#323232" stroke-width="1.3"/><path d="M60.3 6.2H57.6V15.1H69.6V6.2H66.8" stroke-width="1.4"/><path d="M63.6 1.8v8.6M60.6 7.6l3 3 3-3" stroke-width="1.5"/><path d="M83.8 4.4h12.9" stroke-width="1.5"/><path d="M88.2 4.2v-2h3.9v2" stroke-width="1.2"/><path d="M85 6h10.4l-1 10h-8.4z" fill="#c8c8c8" stroke="none"/><path d="M88 7.5v7M90.2 7.5v7M92.4 7.5v7" stroke="#323232" stroke-width="1"/></svg>
<div class="a" style="left:1366px;top:121px;width:188px;height:24px;border-radius:3px;background:#2d2d2d"></div>
<svg width="12" height="8.5" style="position:absolute;left:1535.5px;top:127.75px" fill="none" stroke="#4a4a4a" stroke-width="1.4"><path d="M2 2l4.0 4.5l4.0 -4.5"/></svg>
<div class="a" style="left:1363.5px;top:156.5px;width:198.5px;height:36.5px;border-radius:3px 0 0 3px;background:#404040"></div>
<svg width="27" height="27" style="position:absolute;left:1376px;top:161.5px"><rect x="0.65" y="0.65" width="25.7" height="25.7" rx="1" fill="#262626" stroke="#575757" stroke-width="1.3"/><clipPath id="hc1376"><rect x="4.6" y="4.2" width="18.7" height="18.5"/></clipPath><g clip-path="url(#hc1376)" fill="#cacaca"><polygon points="3.80,7.15 0.64,5.32 0.64,1.67 3.80,-0.15 6.96,1.67 6.96,5.33"/><polygon points="11.60,7.15 8.44,5.32 8.44,1.67 11.60,-0.15 14.76,1.67 14.76,5.33"/><polygon points="19.40,7.15 16.24,5.32 16.24,1.67 19.40,-0.15 22.56,1.67 22.56,5.33"/><polygon points="27.20,7.15 24.04,5.32 24.04,1.67 27.20,-0.15 30.36,1.67 30.36,5.33"/><polygon points="-0.10,13.75 -3.26,11.92 -3.26,8.27 -0.10,6.45 3.06,8.27 3.06,11.92"/><polygon points="7.70,13.75 4.54,11.92 4.54,8.27 7.70,6.45 10.86,8.27 10.86,11.92"/><polygon points="15.50,13.75 12.34,11.92 12.34,8.27 15.50,6.45 18.66,8.27 18.66,11.92"/><polygon points="23.30,13.75 20.14,11.92 20.14,8.27 23.30,6.45 26.46,8.27 26.46,11.92"/><polygon points="3.80,20.45 0.64,18.62 0.64,14.97 3.80,13.15 6.96,14.97 6.96,18.62"/><polygon points="11.60,20.45 8.44,18.62 8.44,14.97 11.60,13.15 14.76,14.97 14.76,18.62"/><polygon points="19.40,20.45 16.24,18.62 16.24,14.97 19.40,13.15 22.56,14.97 22.56,18.62"/><polygon points="27.20,20.45 24.04,18.62 24.04,14.97 27.20,13.15 30.36,14.97 30.36,18.62"/><polygon points="-0.10,27.15 -3.26,25.32 -3.26,21.68 -0.10,19.85 3.06,21.67 3.06,25.32"/><polygon points="7.70,27.15 4.54,25.32 4.54,21.68 7.70,19.85 10.86,21.67 10.86,25.32"/><polygon points="15.50,27.15 12.34,25.32 12.34,21.68 15.50,19.85 18.66,21.67 18.66,25.32"/><polygon points="23.30,27.15 20.14,25.32 20.14,21.68 23.30,19.85 26.46,21.67 26.46,25.32"/></g></svg>
<svg class="a" style="left:1376px;top:198px" width="27" height="27"><rect x="0.5" y="0.5" width="26" height="26" fill="#2a2a2a" stroke="#4a4a4a"/><path d="M6 8l7 6.5 8-7" fill="none" stroke="#d0d0d0" stroke-width="1.8"/><path d="M16 6.5h5.5v5.5" fill="none" stroke="#d0d0d0" stroke-width="1.8"/><rect x="5" y="17.5" width="16.5" height="3.5" fill="#d0d0d0"/></svg>
<svg class="a" style="left:1376px;top:234.5px" width="27" height="27"><rect x="0.5" y="0.5" width="26" height="26" fill="#2a2a2a" stroke="#4a4a4a"/><path d="M7.5 9.5v-1.5h13v9.5h-1.5" fill="none" stroke="#c8c8c8" stroke-width="1"/><rect x="6" y="10" width="13" height="9" fill="none" stroke="#c8c8c8" stroke-width="1.3"/><path d="M6.5 18.5l4-4 3 2.5 2-1.5 3 3z" fill="#c8c8c8"/></svg>
<svg class="a" style="left:1376px;top:271px" width="27" height="27"><defs><radialGradient id="sph" cx="0.42" cy="0.42" r="0.62"><stop offset="0" stop-color="#808080"/><stop offset="0.6" stop-color="#5a5a5a"/><stop offset="1" stop-color="#3c3c3c"/></radialGradient><filter id="hb" x="-1" y="-1" width="3" height="3"><feGaussianBlur stdDeviation="0.6"/></filter></defs><rect x="0.6" y="0.6" width="25.8" height="25.8" fill="#2a2a2a" stroke="#505050" stroke-width="1.2"/><circle cx="13.4" cy="13.4" r="9.6" fill="url(#sph)"/><path d="M14.5 4.7A8.8 8.8 0 0 1 22.1 13.8" fill="none" stroke="#c4c4c4" stroke-width="1.2" stroke-linecap="round"/><ellipse cx="9.3" cy="9.2" rx="1.6" ry="1.3" fill="#f0f0f0" filter="url(#hb)"/></svg>
<div style="position:absolute;left:1573px;top:59px;width:21px;height:2px;background:#505050"></div>
<div style="position:absolute;left:1573px;top:159px;width:21px;height:2px;background:#505050"></div>
<svg width="38" height="260" style="position:absolute;left:1562px;top:0" fill="none" stroke="#c6c6c6" stroke-width="1.5"><g transform="translate(21 87.5) rotate(-40)"><rect x="-8" y="-3" width="16" height="6" fill="#c6c6c6" stroke="none"/><path d="M-5 -3v3M-2 -3v2M1 -3v3M4 -3v2" stroke="#323232" stroke-width="1"/></g><path d="M14 121.5h13M14 126.5h10M14 131.5h6" stroke-width="1.1"/><circle cx="18" cy="121.5" r="1.8" fill="#323232" stroke-width="1.1"/><circle cx="23" cy="126.5" r="1.8" fill="#323232" stroke-width="1.1"/><circle cx="17" cy="131.5" r="1.8" fill="#323232" stroke-width="1.1"/><g transform="translate(25.5 131) rotate(45)"><rect x="-2.5" y="-4.5" width="5" height="6" fill="#c6c6c6" stroke="none"/><path d="M-3.5 1.5h7M0 1.5v5" stroke-width="1.2"/></g><path d="M14.5 180.5h7l4 4v4l-4 6h-7z" fill="#c6c6c6" stroke="none"/><path d="M16.5 185h6M16.5 188h6M16.5 191h4" stroke="#323232" stroke-width="0.9"/><path d="M22 196l6-6.5" stroke-width="2.4"/><path d="M15.5 226v9h11v-9" stroke-width="1.4"/><path d="M21 231.5v-9M18 225l3-3 3 3" stroke-width="1.4"/></svg>
<div class="t" id="t0" style="font-size:10.680px;top:10.770px;left:19.351px;color:#1a1a1a;-webkit-text-stroke:0.2px;transform:scaleX(0.9047);">Adobe Substance 3D Sampler (Steam Edition)</div>
<div class="t" id="t1" style="font-size:10.505px;top:34.071px;left:9.785px;color:#c4c4c4;-webkit-text-stroke:0.2px;transform:scaleX(0.8597);">File</div>
<div class="t" id="t2" style="font-size:10.507px;top:34.071px;left:46.753px;color:#c4c4c4;-webkit-text-stroke:0.2px;transform:scaleX(0.8507);">Edit</div>
<div class="t" id="t3" style="font-size:10.479px;top:35.071px;left:85.480px;color:#c4c4c4;-webkit-text-stroke:0.2px;transform:scaleX(0.9058);">Window</div>
<div class="t" id="t4" style="font-size:10.480px;top:35.071px;left:141.773px;color:#c4c4c4;-webkit-text-stroke:0.2px;transform:scaleX(0.9412);">Help</div>
<div class="t" id="t5" style="font-size:9.828px;top:34.964px;left:770.484px;color:#c4c4c4;font-style:italic;-webkit-text-stroke:0.2px;transform:scaleX(0.8861);">Untitled Project *</div>
<div class="t" id="t6" style="font-size:10.174px;top:67.273px;left:55.358px;color:#d4d4d4;font-weight:700;transform:scaleX(0.8625);">Untitled material</div>
<div class="t" id="t7" style="font-size:9.522px;top:68.573px;left:872.960px;color:#b8b8b8;-webkit-text-stroke:0.2px;transform:scaleX(1.0936);">w:</div>
<div class="t" id="t8" style="font-size:9.241px;top:67.274px;left:899.043px;color:#d0d0d0;-webkit-text-stroke:0.2px;transform:scaleX(1.0440);">2048</div>
<div class="t" id="t9" style="font-size:10.364px;top:68.372px;left:983.942px;color:#b8b8b8;-webkit-text-stroke:0.2px;transform:scaleX(0.7587);">h:</div>
<div class="t" id="t10" style="font-size:9.239px;top:67.274px;left:1007.645px;color:#d0d0d0;-webkit-text-stroke:0.2px;transform:scaleX(1.0352);">2048</div>
<div class="t" id="t11" style="font-size:10.174px;top:107.273px;left:1048.487px;color:#d8d8e0;-webkit-text-stroke:0.2px;transform:scaleX(0.9206);">Material Outputs</div>
<div class="t" id="t12" style="font-size:8.993px;top:811.105px;left:611.620px;color:rgba(222,210,175,0.72);-webkit-text-stroke:0.2px;transform:scaleX(0.9489);">RGBA, 8bpc</div>
<div class="t" id="t13" style="font-size:9.001px;top:811.710px;left:971.818px;color:rgba(222,210,175,0.72);-webkit-text-stroke:0.2px;transform:scaleX(0.9305);">10 cm × 10 cm × 0.1 cm</div>
<div class="t" id="t14" style="font-size:11.628px;top:812.969px;left:1074.381px;color:rgba(222,210,175,0.72);-webkit-text-stroke:0.2px;transform:scaleX(1.4562);">|</div>
<div class="t" id="t15" style="font-size:8.991px;top:811.703px;left:1089.793px;color:rgba(222,210,175,0.72);-webkit-text-stroke:0.2px;transform:scaleX(0.9940);">2048 x 2048</div>
<div class="t" id="t16" style="font-size:10.174px;top:845.273px;left:629.069px;color:#cfcfd8;-webkit-text-stroke:0.2px;transform:scaleX(0.8387);">Base Color</div>
<div class="t" id="t17" style="font-size:10.174px;top:845.273px;left:680.926px;color:#cfcfd8;-webkit-text-stroke:0.2px;transform:scaleX(0.9442);">Normal</div>
<div class="t" id="t18" style="font-size:10.174px;top:845.273px;left:721.691px;color:#cfcfd8;-webkit-text-stroke:0.2px;transform:scaleX(0.8623);">Roughness</div>
<div class="t" id="t19" style="font-size:10.174px;top:845.273px;left:774.517px;color:#cfcfd8;-webkit-text-stroke:0.2px;transform:scaleX(0.9341);">Metallic</div>
<div class="t" id="t20" style="font-size:10.174px;top:845.273px;left:816.640px;color:#cfcfd8;-webkit-text-stroke:0.2px;transform:scaleX(0.9000);">Height</div>
<div class="t" id="t21" style="font-size:10.174px;top:845.273px;left:853.319px;color:#cfcfd8;-webkit-text-stroke:0.2px;transform:scaleX(0.9018);">Ambient Occlusion</div>
<div class="t" id="t22" style="font-size:10.174px;top:845.273px;left:938.406px;color:#cfcfd8;-webkit-text-stroke:0.2px;transform:scaleX(0.9113);">Opacity</div>
<div class="t" id="t23" style="font-size:10.174px;top:845.273px;left:978.915px;color:#cfcfd8;-webkit-text-stroke:0.2px;transform:scaleX(0.8709);">Specular Level</div>
<div class="t" id="t24" style="font-size:10.174px;top:845.273px;left:1073.844px;color:#cfcfd8;-webkit-text-stroke:0.2px;transform:scaleX(0.8608);">22.8%</div>
<div class="t" id="t25" style="font-size:9.269px;top:814.575px;left:500.454px;color:#e6e6e6;font-weight:700;transform:scaleX(0.8773);">10 cm × 10 cm × 0.1 cm</div>
<div class="t" id="t26" style="font-size:9.839px;top:843.523px;left:62.153px;color:#cfcfcf;-webkit-text-stroke:0.2px;transform:scaleX(0.9191);">442 ms</div>
<div class="t" id="t27" style="font-size:9.838px;top:73.723px;left:1167.295px;color:#a0a0a0;-webkit-text-stroke:0.2px;letter-spacing:1.2px;transform:scaleX(0.7949);">PROPERTIES</div>
<div class="t" id="t28" style="font-size:9.427px;top:101.874px;left:1200.761px;color:#dedede;font-weight:700;transform:scaleX(0.9358);">Make It Tile</div>
<div class="t" id="t29" style="font-size:10.687px;top:139.770px;left:1177.095px;color:#d0d0d0;-webkit-text-stroke:0.2px;transform:scaleX(0.9667);">Basic parameters</div>
<div class="t" id="t30" style="font-size:9.830px;top:164.923px;left:1167.295px;color:#cccccc;-webkit-text-stroke:0.2px;transform:scaleX(0.9243);">Threshold</div>
<div class="t" id="t31" style="font-size:9.837px;top:164.923px;left:1329.675px;color:#cccccc;-webkit-text-stroke:0.2px;transform:scaleX(0.9064);">0.8</div>
<div class="t" id="t32" style="font-size:9.837px;top:205.123px;left:1167.349px;color:#cccccc;-webkit-text-stroke:0.2px;transform:scaleX(0.9248);">Smoothness</div>
<div class="t" id="t33" style="font-size:9.863px;top:205.123px;left:1325.283px;color:#cccccc;-webkit-text-stroke:0.2px;transform:scaleX(0.8790);">5.22</div>
<div class="t" id="t34" style="font-size:9.839px;top:246.723px;left:1167.615px;color:#cccccc;-webkit-text-stroke:0.2px;transform:scaleX(0.9082);">Contrast</div>
<div class="t" id="t35" style="font-size:9.852px;top:246.723px;left:1336.839px;color:#cccccc;-webkit-text-stroke:0.2px;transform:scaleX(1.0111);">0</div>
<div class="t" id="t36" style="font-size:9.837px;top:319.523px;left:1167.597px;color:#cccccc;-webkit-text-stroke:0.2px;transform:scaleX(0.8991);">Color Equalizer</div>
<div class="t" id="t37" style="font-size:9.865px;top:319.523px;left:1320.806px;color:#cccccc;-webkit-text-stroke:0.2px;transform:scaleX(0.8358);">39.03</div>
<div class="t" id="t38" style="font-size:9.804px;top:291.123px;left:1167.493px;color:#7e7e7e;-webkit-text-stroke:0.2px;transform:scaleX(0.9104);">Spots Removal</div>
<div class="t" id="t39" style="font-size:9.875px;top:358.923px;left:1166.596px;color:#cccccc;-webkit-text-stroke:0.2px;transform:scaleX(0.9415);">Height Matching</div>
<div class="t" id="t40" style="font-size:9.836px;top:383.523px;left:1175.571px;color:#d4d4d4;-webkit-text-stroke:0.2px;transform:scaleX(0.9811);">Maximum</div>
<div class="t" id="t41" style="font-size:10.666px;top:426.370px;left:1177.068px;color:#d0d0d0;-webkit-text-stroke:0.2px;transform:scaleX(0.9675);">Advanced Parameters</div>
<div class="t" id="t42" style="font-size:9.829px;top:73.923px;left:1372.833px;color:#a0a0a0;-webkit-text-stroke:0.2px;letter-spacing:1.2px;transform:scaleX(0.8254);">LAYERS</div>
<div class="t" id="t43" style="font-size:9.836px;top:135.323px;left:1374.522px;color:#4a4a4a;-webkit-text-stroke:0.2px;transform:scaleX(0.9895);">Normal</div>
<div class="t" id="t44" style="font-size:9.415px;top:175.274px;left:1409.361px;color:#e2e2e2;font-weight:700;transform:scaleX(0.9413);">Make It Tile</div>
<div class="t" id="t45" style="font-size:9.875px;top:214.123px;left:1409.108px;color:#cccccc;-webkit-text-stroke:0.2px;transform:scaleX(0.9435);">Height to AO</div>
<div class="t" id="t46" style="font-size:9.835px;top:250.923px;left:1408.799px;color:#cccccc;-webkit-text-stroke:0.2px;transform:scaleX(0.9637);">Image import (4)</div>
<div class="t" id="t47" style="font-size:9.810px;top:286.923px;left:1409.272px;color:#cccccc;-webkit-text-stroke:0.2px;transform:scaleX(0.9175);">Base Material</div>
<div class="t" id="t48" style="font-size:9.233px;top:352.274px;left:1519.685px;color:#2f7fe0;-webkit-text-stroke:0.2px;transform:scaleX(0.9487);">Reload</div>
</body></html>
